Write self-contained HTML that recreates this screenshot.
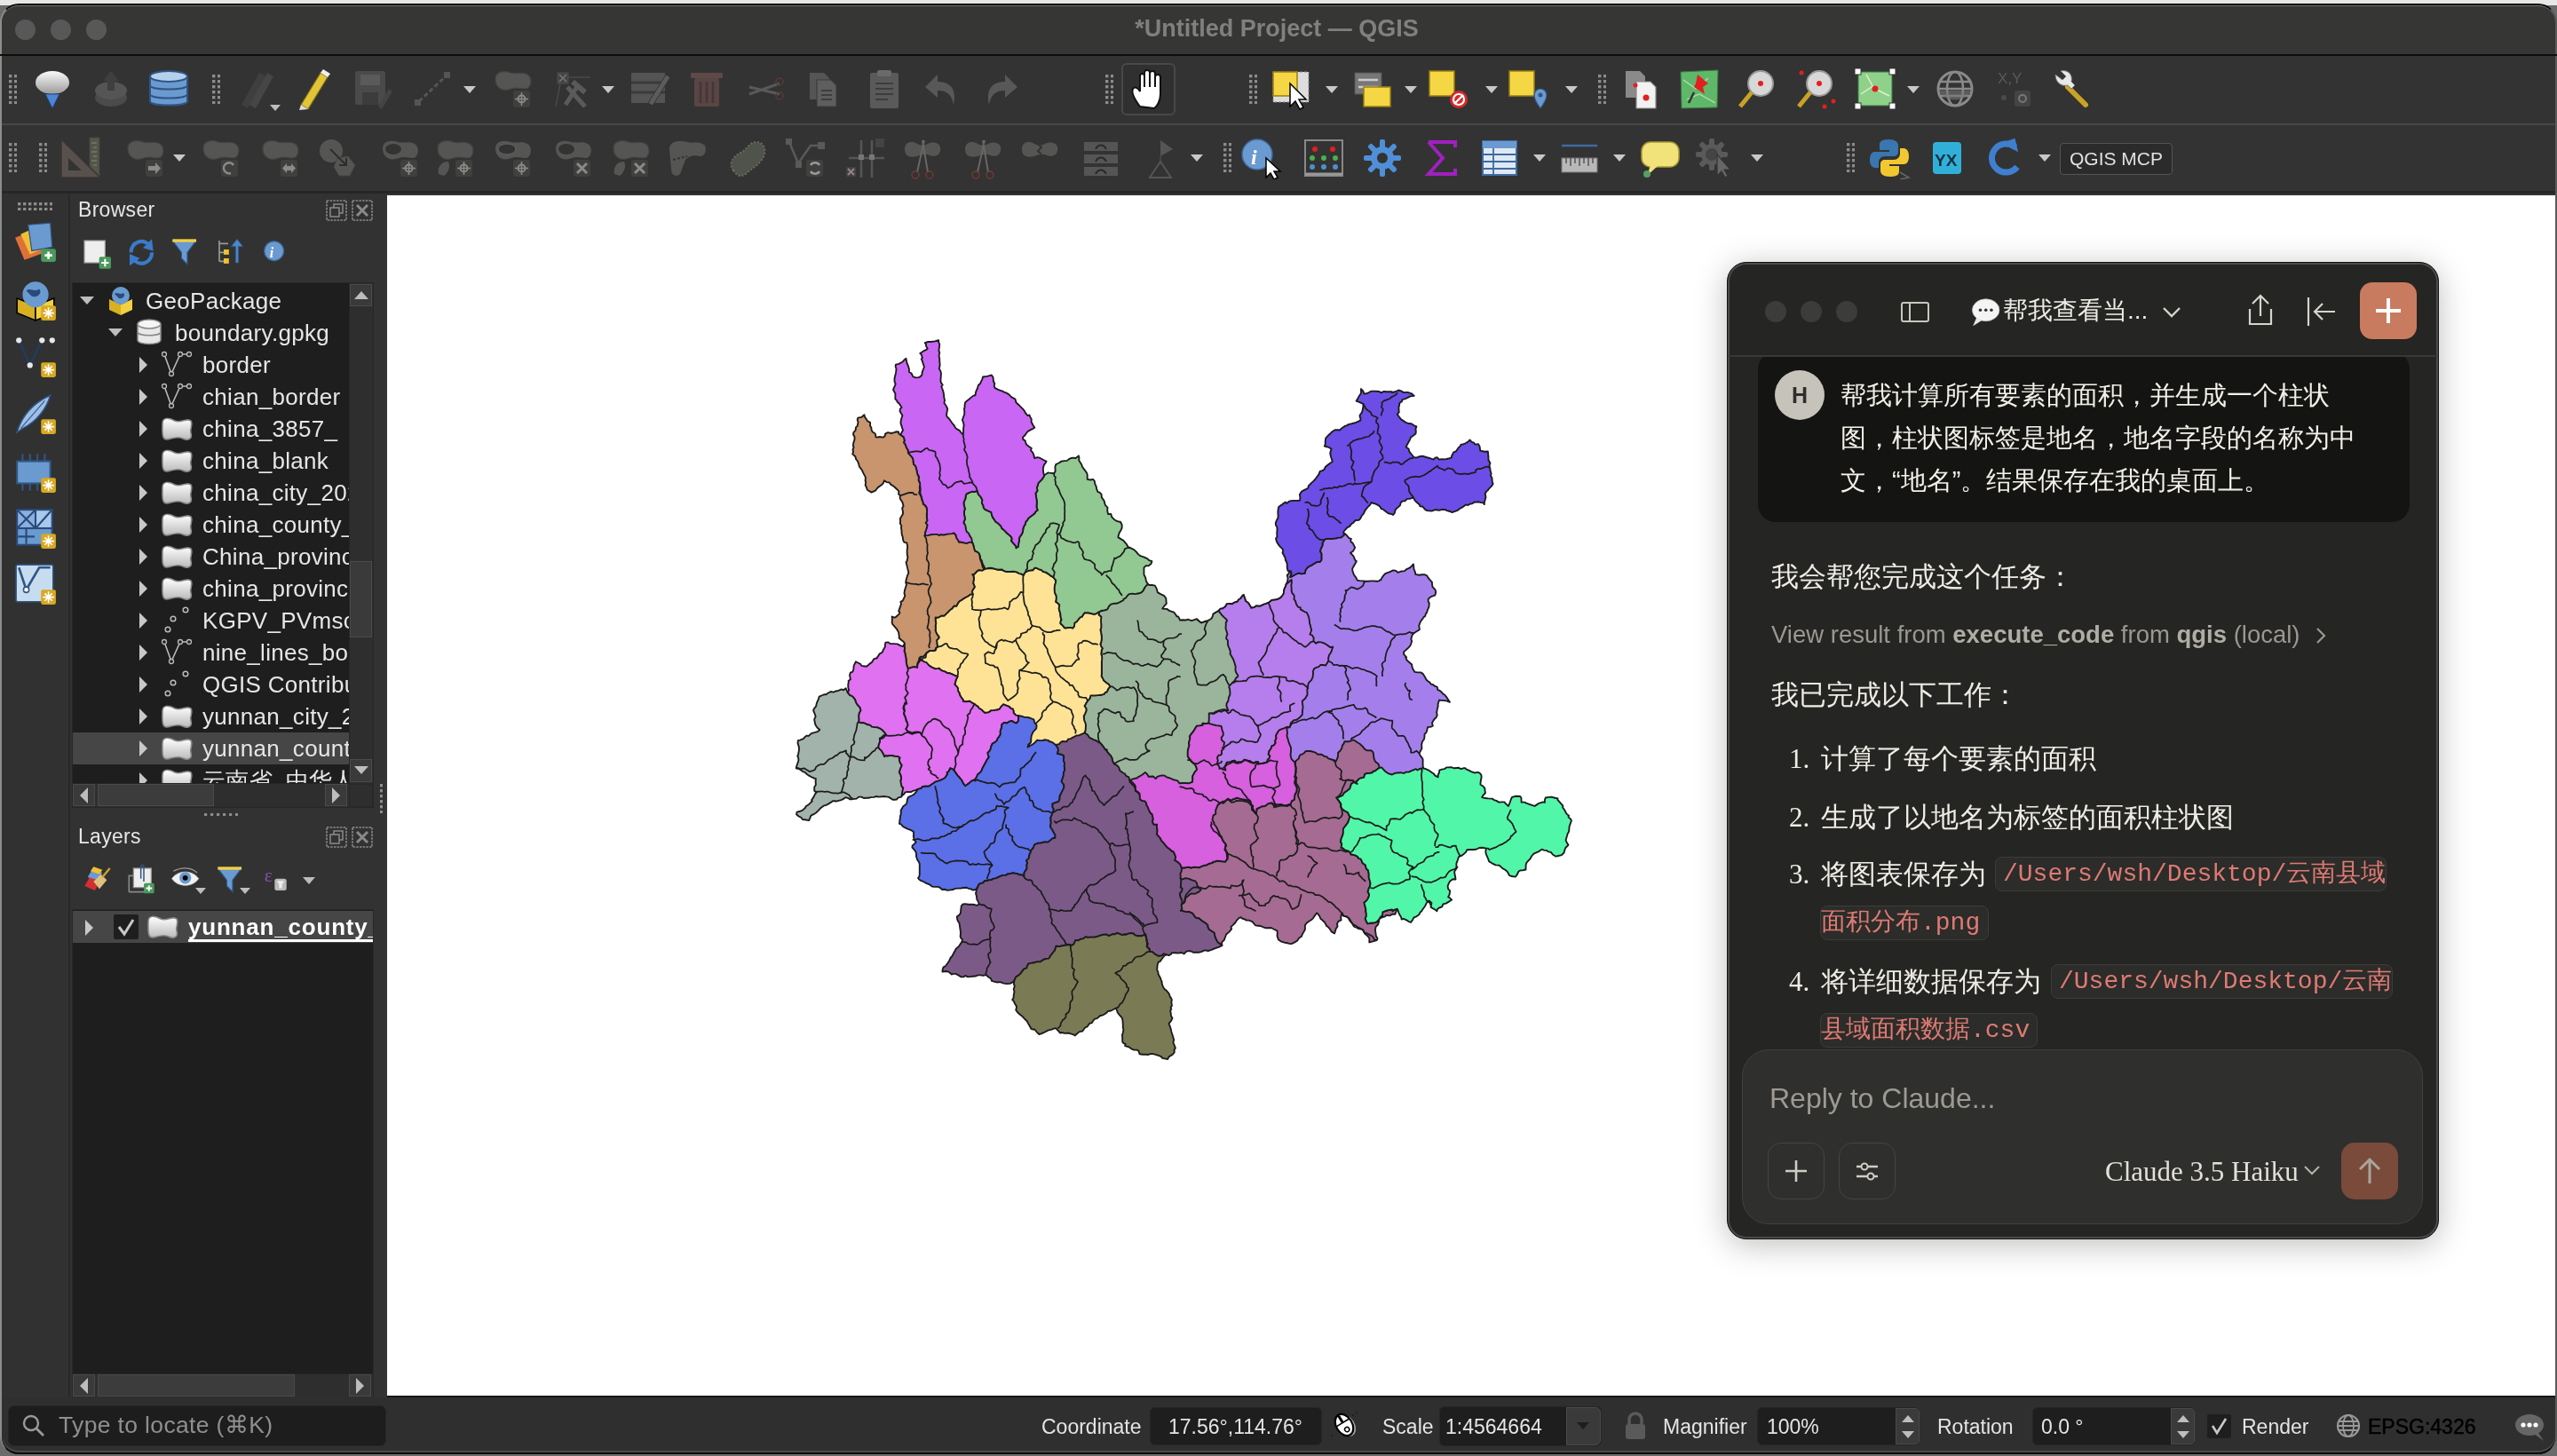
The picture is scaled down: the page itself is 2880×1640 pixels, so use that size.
<!DOCTYPE html>
<html><head><meta charset="utf-8">
<style>
*{box-sizing:border-box;margin:0;padding:0}
html,body{width:2880px;height:1640px;overflow:hidden;background:#6b6b6b;font-family:"Liberation Sans",sans-serif}
.a{position:absolute;will-change:transform}
#desktop-top{left:0;top:0;width:2880px;height:6px;background:#e8e6e6}
#win{left:0;top:4px;width:2880px;height:1634px;border-radius:21px;background:#333;border:2px solid #0e0e0e;border-left-color:#8e8e8c;border-right-color:#5a5a5a;overflow:hidden}
#title{left:2px;top:6px;width:2876px;height:56px;background:#363735;border-radius:19px 19px 0 0;border-top:1.5px solid #6e6e6c}
#titleline{left:0;top:61px;width:2880px;height:2px;background:#0d0d0d}
.tl{width:23px;height:23px;border-radius:50%;background:#585858;top:22px}
#ttext{left:0;width:2876px;top:17px;text-align:center;font-weight:bold;font-size:27px;color:#80807e}
#tb1{left:2px;top:63px;width:2876px;height:76px;background:#333333}
#tbsep{left:2px;top:139px;width:2876px;height:2px;background:#484848}
#tb2{left:2px;top:141px;width:2876px;height:74px;background:#333333}
#tbbot{left:2px;top:215px;width:2876px;height:3px;background:#262626}
#dock{left:2px;top:218px;width:75px;height:1356px;background:#313131}
#dockline{left:77px;top:218px;width:2px;height:1356px;background:#282828}
#bpanel{left:79px;top:218px;width:355px;height:1356px;background:#323232}
#canvas{left:436px;top:220px;width:2442px;height:1354px;background:#fff}
#status{left:2px;top:1574px;width:2876px;height:62px;background:#2f2f2f;border-radius:0 0 19px 19px;box-shadow:0 2px 0 #0c0c0c, inset 0 -2px 0 #4a4a4a}
#statusline{left:436px;top:1572px;width:2442px;height:2px;background:#181818}
</style></head><body>
<div class="a" id="desktop-top"></div>
<div class="a" id="win"></div>
<div class="a" id="title"></div>
<div class="a tl" style="left:17px"></div>
<div class="a tl" style="left:57px"></div>
<div class="a tl" style="left:97px"></div>
<div class="a" id="ttext">*Untitled Project — QGIS</div>
<div class="a" id="titleline"></div>
<div class="a" id="tb1"></div>
<div class="a" id="tbsep"></div>
<div class="a" id="tb2"></div>
<div class="a" id="tbbot"></div>
<div class="a" id="dock"></div>
<div class="a" id="dockline"></div>
<div class="a" id="bpanel"></div>
<div class="a" id="canvas"></div>
<div class="a" id="statusline"></div>
<div class="a" id="status"></div>
<!--UI--><svg class="a" style="left:10px;top:84px" width="9" height="33"><rect x="0.0" y="0.0" width="3.4" height="3.4" fill="#8c8c8c"/><rect x="6.0" y="0.0" width="3.4" height="3.4" fill="#8c8c8c"/><rect x="0.0" y="6.0" width="3.4" height="3.4" fill="#8c8c8c"/><rect x="6.0" y="6.0" width="3.4" height="3.4" fill="#8c8c8c"/><rect x="0.0" y="12.0" width="3.4" height="3.4" fill="#8c8c8c"/><rect x="6.0" y="12.0" width="3.4" height="3.4" fill="#8c8c8c"/><rect x="0.0" y="18.0" width="3.4" height="3.4" fill="#8c8c8c"/><rect x="6.0" y="18.0" width="3.4" height="3.4" fill="#8c8c8c"/><rect x="0.0" y="24.0" width="3.4" height="3.4" fill="#8c8c8c"/><rect x="6.0" y="24.0" width="3.4" height="3.4" fill="#8c8c8c"/><rect x="0.0" y="30.0" width="3.4" height="3.4" fill="#8c8c8c"/><rect x="6.0" y="30.0" width="3.4" height="3.4" fill="#8c8c8c"/></svg>
<svg class="a" style="left:35px;top:76px" width="48" height="48" viewBox="0 0 48 48"><defs><linearGradient id="gw" x1="0" y1="0" x2="0" y2="1"><stop offset="0" stop-color="#fafafa"/><stop offset="1" stop-color="#9a9a9a"/></linearGradient></defs><ellipse cx="24" cy="17" rx="19" ry="13" fill="url(#gw)"/><path d="M16 30 H32 L24 46 Z" fill="#4d86d4" stroke="#1f3f80" stroke-width="1"/></svg>
<svg class="a" style="left:101px;top:76px" width="48" height="48" viewBox="0 0 48 48"><ellipse cx="24" cy="34" rx="18" ry="10" fill="#4b4b4b"/><ellipse cx="24" cy="26" rx="18" ry="10" fill="#555"/><path d="M24 4 L33 15 H28 V26 H20 V15 H15 Z" fill="#3f3f3f"/></svg>
<svg class="a" style="left:166px;top:76px" width="48" height="48" viewBox="0 0 48 48"><path d="M3 10 V38 C3 44 45 44 45 38 V10" fill="#6b9ad0" stroke="#2f5684" stroke-width="2"/><ellipse cx="24" cy="10" rx="21" ry="6" fill="#b5d0ec" stroke="#2f5684" stroke-width="2"/><path d="M3 20 C3 26 45 26 45 20 M3 30 C3 36 45 36 45 30" fill="none" stroke="#2f5684" stroke-width="2"/></svg>
<svg class="a" style="left:239px;top:84px" width="9" height="33"><rect x="0.0" y="0.0" width="3.4" height="3.4" fill="#8c8c8c"/><rect x="6.0" y="0.0" width="3.4" height="3.4" fill="#8c8c8c"/><rect x="0.0" y="6.0" width="3.4" height="3.4" fill="#8c8c8c"/><rect x="6.0" y="6.0" width="3.4" height="3.4" fill="#8c8c8c"/><rect x="0.0" y="12.0" width="3.4" height="3.4" fill="#8c8c8c"/><rect x="6.0" y="12.0" width="3.4" height="3.4" fill="#8c8c8c"/><rect x="0.0" y="18.0" width="3.4" height="3.4" fill="#8c8c8c"/><rect x="6.0" y="18.0" width="3.4" height="3.4" fill="#8c8c8c"/><rect x="0.0" y="24.0" width="3.4" height="3.4" fill="#8c8c8c"/><rect x="6.0" y="24.0" width="3.4" height="3.4" fill="#8c8c8c"/><rect x="0.0" y="30.0" width="3.4" height="3.4" fill="#8c8c8c"/><rect x="6.0" y="30.0" width="3.4" height="3.4" fill="#8c8c8c"/></svg>
<svg class="a" style="left:266px;top:76px" width="48" height="48" viewBox="0 0 48 48"><path d="M6 42 L26 6 L33 10 L13 46 Z" fill="#3f3f3f"/><path d="M15 42 L35 6 L42 10 L22 46 Z" fill="#464646"/></svg>
<svg class="a" style="left:304px;top:118px" width="12" height="7" viewBox="0 0 12 7"><path d="M0 0 H12 L6.0 7 Z" fill="#bdbdbd"/></svg>
<svg class="a" style="left:329px;top:76px" width="48" height="48" viewBox="0 0 48 48"><path d="M10 42 L32 6 L40 11 L18 47 Z" fill="#e2c43a" stroke="#7a6a10" stroke-width="1.2"/><path d="M32 6 L35 2 L43 7 L40 11 Z" fill="#eee"/><path d="M10 42 L8 48 L18 47 Z" fill="#ddd"/></svg>
<svg class="a" style="left:396px;top:76px" width="48" height="48" viewBox="0 0 48 48"><rect x="4" y="4" width="34" height="38" rx="3" fill="#4a4a4a"/><rect x="10" y="8" width="22" height="12" fill="#5a5a5a"/><rect x="12" y="28" width="18" height="14" fill="#3c3c3c"/><path d="M30 44 L42 24 L46 27 L34 47 Z" fill="#444"/></svg>
<svg class="a" style="left:463px;top:76px" width="48" height="48" viewBox="0 0 48 48"><rect x="4" y="36" width="7" height="7" fill="#555"/><rect x="37" y="5" width="7" height="7" fill="#555"/><path d="M9 38 L39 10" stroke="#555" stroke-width="3" stroke-dasharray="5 3"/></svg>
<svg class="a" style="left:522px;top:97px" width="14" height="8" viewBox="0 0 14 8"><path d="M0 0 H14 L7.0 8 Z" fill="#c8c8c8"/></svg>
<svg class="a" style="left:553px;top:76px" width="48" height="48" viewBox="0 0 48 48"><path d="M5 13 C5 5 14 3 22 6 C30 8 35 4 41 8 C46 11 46 19 42 23 C38 26 31 21 23 24 C13 28 5 23 5 13Z" fill="#555654" stroke="#444543" stroke-width="1.2"/><rect x="25" y="26" width="19" height="19" rx="3" fill="#40403e"/><circle cx="34.5" cy="35.5" r="4" fill="none" stroke="#8a8a88" stroke-width="2"/><path d="M34.5 28 V43 M27 35.5 H42" stroke="#8a8a88" stroke-width="1.5"/></svg>
<svg class="a" style="left:621px;top:76px" width="48" height="48" viewBox="0 0 48 48"><path d="M10 18 L5 44 M19 11 H44" stroke="#4a4a4a" stroke-width="1.5"/><rect x="7" y="6" width="12" height="12" fill="#444" stroke="#4e4e4e" stroke-width="1"/><path d="M9 8 L17 16 M17 8 L9 16" stroke="#777" stroke-width="1.5"/><path d="M18 22 L38 44 M30 20 L16 42" stroke="#5a5a5a" stroke-width="5"/><path d="M24 16 L38 28" stroke="#5a5a5a" stroke-width="6"/></svg>
<svg class="a" style="left:678px;top:97px" width="14" height="8" viewBox="0 0 14 8"><path d="M0 0 H14 L7.0 8 Z" fill="#c8c8c8"/></svg>
<svg class="a" style="left:708px;top:76px" width="48" height="48" viewBox="0 0 48 48"><rect x="3" y="6" width="38" height="34" fill="#545454"/><path d="M3 17 H41 M3 28 H41" stroke="#3a3a3a" stroke-width="3"/><path d="M22 40 L42 8 L47 11 L27 43 Z" fill="#5c5c5c" stroke="#333" stroke-width="1"/></svg>
<svg class="a" style="left:772px;top:76px" width="48" height="48" viewBox="0 0 48 48"><rect x="10" y="12" width="28" height="32" rx="2" fill="#5a4545"/><rect x="6" y="6" width="36" height="6" rx="1" fill="#5e4848"/><path d="M17 16 V40 M24 16 V40 M31 16 V40" stroke="#453636" stroke-width="2.5"/></svg>
<svg class="a" style="left:838px;top:76px" width="48" height="48" viewBox="0 0 48 48"><path d="M6 22 L40 30 M6 30 L40 18" stroke="#595959" stroke-width="3"/><circle cx="40" cy="32" r="4" fill="none" stroke="#5a3a3a" stroke-width="1.5"/><circle cx="40" cy="16" r="4" fill="none" stroke="#5a3a3a" stroke-width="1.5"/></svg>
<svg class="a" style="left:904px;top:76px" width="48" height="48" viewBox="0 0 48 48"><path d="M8 6 H24 L30 12 V36 H8 Z" fill="#555"/><path d="M16 14 H32 L38 20 V44 H16 Z" fill="#5e5e5e" stroke="#3d3d3d" stroke-width="1.2"/><path d="M21 26 H33 M21 31 H33 M21 36 H33" stroke="#3d3d3d" stroke-width="2"/></svg>
<svg class="a" style="left:972px;top:76px" width="48" height="48" viewBox="0 0 48 48"><rect x="8" y="6" width="32" height="40" rx="2" fill="#5a5a5a"/><rect x="16" y="3" width="16" height="7" rx="2" fill="#6a6a6a"/><path d="M14 18 H34 M14 24 H34 M14 30 H34 M14 36 H28" stroke="#3d3d3d" stroke-width="2"/></svg>
<svg class="a" style="left:1038px;top:76px" width="48" height="48" viewBox="0 0 48 48"><path d="M18 8 L4 22 L18 34 V26 C28 26 34 30 36 42 C40 24 32 16 18 16 Z" fill="#585858"/></svg>
<svg class="a" style="left:1102px;top:76px" width="48" height="48" viewBox="0 0 48 48"><path d="M30 8 L44 22 L30 34 V26 C20 26 14 30 12 42 C8 24 16 16 30 16 Z" fill="#585858"/></svg>
<svg class="a" style="left:1245px;top:84px" width="9" height="33"><rect x="0.0" y="0.0" width="3.4" height="3.4" fill="#8c8c8c"/><rect x="6.0" y="0.0" width="3.4" height="3.4" fill="#8c8c8c"/><rect x="0.0" y="6.0" width="3.4" height="3.4" fill="#8c8c8c"/><rect x="6.0" y="6.0" width="3.4" height="3.4" fill="#8c8c8c"/><rect x="0.0" y="12.0" width="3.4" height="3.4" fill="#8c8c8c"/><rect x="6.0" y="12.0" width="3.4" height="3.4" fill="#8c8c8c"/><rect x="0.0" y="18.0" width="3.4" height="3.4" fill="#8c8c8c"/><rect x="6.0" y="18.0" width="3.4" height="3.4" fill="#8c8c8c"/><rect x="0.0" y="24.0" width="3.4" height="3.4" fill="#8c8c8c"/><rect x="6.0" y="24.0" width="3.4" height="3.4" fill="#8c8c8c"/><rect x="0.0" y="30.0" width="3.4" height="3.4" fill="#8c8c8c"/><rect x="6.0" y="30.0" width="3.4" height="3.4" fill="#8c8c8c"/></svg>
<div class="a" style="left:1263px;top:71px;width:61px;height:59px;border-radius:6px;background:#303030;border:2px solid #484848"></div>
<svg class="a" style="left:1270px;top:76px" width="48" height="48" viewBox="0 0 48 48"><path d="M14 44 C8 36 4 28 6 24 C8 21 12 23 14 27 V10 C14 6 19 6 19 10 V22 V6 C19 2 25 2 25 6 V22 V7 C25 3 31 3 31 7 V22 V11 C31 7 37 7 37 11 V30 C37 38 33 44 30 46 Z" fill="#fff" stroke="#111" stroke-width="2"/></svg>
<svg class="a" style="left:1407px;top:84px" width="9" height="33"><rect x="0.0" y="0.0" width="3.4" height="3.4" fill="#8c8c8c"/><rect x="6.0" y="0.0" width="3.4" height="3.4" fill="#8c8c8c"/><rect x="0.0" y="6.0" width="3.4" height="3.4" fill="#8c8c8c"/><rect x="6.0" y="6.0" width="3.4" height="3.4" fill="#8c8c8c"/><rect x="0.0" y="12.0" width="3.4" height="3.4" fill="#8c8c8c"/><rect x="6.0" y="12.0" width="3.4" height="3.4" fill="#8c8c8c"/><rect x="0.0" y="18.0" width="3.4" height="3.4" fill="#8c8c8c"/><rect x="6.0" y="18.0" width="3.4" height="3.4" fill="#8c8c8c"/><rect x="0.0" y="24.0" width="3.4" height="3.4" fill="#8c8c8c"/><rect x="6.0" y="24.0" width="3.4" height="3.4" fill="#8c8c8c"/><rect x="0.0" y="30.0" width="3.4" height="3.4" fill="#8c8c8c"/><rect x="6.0" y="30.0" width="3.4" height="3.4" fill="#8c8c8c"/></svg>
<svg class="a" style="left:1431px;top:76px" width="48" height="48" viewBox="0 0 48 48"><rect x="3" y="5" width="40" height="34" fill="#ddd" stroke="#888" stroke-dasharray="3 2"/><rect x="3" y="5" width="27" height="27" fill="#f5d745" stroke="#9a7f10" stroke-width="1.5"/><path d="M22 18 L22 44 L28 38 L33 47 L37 45 L32 36 L40 36 Z" fill="#fff" stroke="#000" stroke-width="1.5"/></svg>
<svg class="a" style="left:1493px;top:97px" width="14" height="8" viewBox="0 0 14 8"><path d="M0 0 H14 L7.0 8 Z" fill="#c8c8c8"/></svg>
<svg class="a" style="left:1522px;top:76px" width="48" height="48" viewBox="0 0 48 48"><rect x="4" y="6" width="30" height="24" fill="#777" stroke="#555"/><path d="M8 14 H30 M8 22 H30" stroke="#ccc" stroke-width="2.5"/><rect x="14" y="22" width="30" height="22" fill="#f5d745" stroke="#9a7f10" stroke-width="1.5"/></svg>
<svg class="a" style="left:1582px;top:97px" width="14" height="8" viewBox="0 0 14 8"><path d="M0 0 H14 L7.0 8 Z" fill="#c8c8c8"/></svg>
<svg class="a" style="left:1607px;top:76px" width="48" height="48" viewBox="0 0 48 48"><rect x="3" y="4" width="28" height="28" fill="#f5d745" stroke="#9a7f10" stroke-width="1.5"/><circle cx="36" cy="36" r="10" fill="#d42b2b"/><circle cx="36" cy="36" r="6" fill="none" stroke="#fff" stroke-width="2.2"/><path d="M31 41 L41 31" stroke="#fff" stroke-width="2.2"/></svg>
<svg class="a" style="left:1673px;top:97px" width="14" height="8" viewBox="0 0 14 8"><path d="M0 0 H14 L7.0 8 Z" fill="#c8c8c8"/></svg>
<svg class="a" style="left:1697px;top:76px" width="48" height="48" viewBox="0 0 48 48"><rect x="3" y="4" width="28" height="28" fill="#f5d745" stroke="#9a7f10" stroke-width="1.5"/><path d="M38 46 C32 38 31 34 31 31 A7 7 0 0 1 45 31 C45 34 44 38 38 46Z" fill="#6a9ad0" stroke="#2f5684" stroke-width="1.2"/><circle cx="38" cy="31" r="2.5" fill="#2f5684"/></svg>
<svg class="a" style="left:1763px;top:97px" width="14" height="8" viewBox="0 0 14 8"><path d="M0 0 H14 L7.0 8 Z" fill="#c8c8c8"/></svg>
<svg class="a" style="left:1800px;top:84px" width="9" height="33"><rect x="0.0" y="0.0" width="3.4" height="3.4" fill="#8c8c8c"/><rect x="6.0" y="0.0" width="3.4" height="3.4" fill="#8c8c8c"/><rect x="0.0" y="6.0" width="3.4" height="3.4" fill="#8c8c8c"/><rect x="6.0" y="6.0" width="3.4" height="3.4" fill="#8c8c8c"/><rect x="0.0" y="12.0" width="3.4" height="3.4" fill="#8c8c8c"/><rect x="6.0" y="12.0" width="3.4" height="3.4" fill="#8c8c8c"/><rect x="0.0" y="18.0" width="3.4" height="3.4" fill="#8c8c8c"/><rect x="6.0" y="18.0" width="3.4" height="3.4" fill="#8c8c8c"/><rect x="0.0" y="24.0" width="3.4" height="3.4" fill="#8c8c8c"/><rect x="6.0" y="24.0" width="3.4" height="3.4" fill="#8c8c8c"/><rect x="0.0" y="30.0" width="3.4" height="3.4" fill="#8c8c8c"/><rect x="6.0" y="30.0" width="3.4" height="3.4" fill="#8c8c8c"/></svg>
<svg class="a" style="left:1825px;top:76px" width="48" height="48" viewBox="0 0 48 48"><path d="M6 4 H22 L28 10 V34 H6 Z" fill="#8a8a8a"/><path d="M18 16 H34 L40 22 V46 H18 Z" fill="#f2f2f2" stroke="#888" stroke-width="1.2"/><circle cx="29" cy="34" r="3.5" fill="#e02020"/><circle cx="17" cy="20" r="2.5" fill="#e02020"/></svg>
<svg class="a" style="left:1890px;top:76px" width="48" height="48" viewBox="0 0 48 48"><path d="M3 5 L45 3 L44 45 L4 46 Z" fill="#5fb86a" stroke="#3a7a45" stroke-width="1"/><path d="M6 14 L20 24 L34 12 M10 36 L24 30 L42 40" stroke="#b8e0b0" stroke-width="1.3" fill="none"/><path d="M22 8 L34 18 L28 22 L30 30 L18 22 L20 18 Z" fill="#e02020"/><path d="M18 28 L12 40" stroke="#333" stroke-width="2.5"/></svg>
<svg class="a" style="left:1955px;top:76px" width="48" height="48" viewBox="0 0 48 48"><circle cx="28" cy="18" r="14" fill="#d8d8d8" stroke="#999" stroke-width="2"/><circle cx="28" cy="18" r="3" fill="#e02020"/><path d="M18 28 L5 44" stroke="#c9a227" stroke-width="5"/></svg>
<svg class="a" style="left:2021px;top:76px" width="48" height="48" viewBox="0 0 48 48"><circle cx="28" cy="18" r="14" fill="#d8d8d8" stroke="#999" stroke-width="2"/><circle cx="28" cy="18" r="3" fill="#e02020"/><path d="M18 28 L5 44" stroke="#c9a227" stroke-width="5"/><circle cx="8" cy="6" r="2.5" fill="#e02020"/><circle cx="44" cy="38" r="2.5" fill="#e02020"/><circle cx="34" cy="44" r="2.5" fill="#e02020"/></svg>
<svg class="a" style="left:2088px;top:76px" width="48" height="48" viewBox="0 0 48 48"><rect x="5" y="5" width="38" height="38" fill="#8fd08a" stroke="#3a7a45"/><path d="M8 30 L20 22 L40 32 M14 8 L24 26" stroke="#e0f0d0" stroke-width="1.5" fill="none"/><circle cx="24" cy="24" r="3.5" fill="#e02020"/><rect x="1" y="1" width="7" height="7" fill="#fff" stroke="#333"/><rect x="40" y="1" width="7" height="7" fill="#fff" stroke="#333"/><rect x="1" y="40" width="7" height="7" fill="#fff" stroke="#333"/><rect x="40" y="40" width="7" height="7" fill="#fff" stroke="#333"/></svg>
<svg class="a" style="left:2148px;top:97px" width="14" height="8" viewBox="0 0 14 8"><path d="M0 0 H14 L7.0 8 Z" fill="#c8c8c8"/></svg>
<svg class="a" style="left:2178px;top:76px" width="48" height="48" viewBox="0 0 48 48"><circle cx="24" cy="24" r="19" fill="none" stroke="#8a8a8a" stroke-width="3"/><ellipse cx="24" cy="24" rx="9" ry="19" fill="none" stroke="#8a8a8a" stroke-width="2.5"/><path d="M6 16 H42 M5 24 H43 M6 32 H42" stroke="#8a8a8a" stroke-width="2.5"/><path d="M5 26 C14 40 34 40 43 26" fill="#777" opacity="0.6"/></svg>
<svg class="a" style="left:2247px;top:76px" width="48" height="48" viewBox="0 0 48 48"><text x="3" y="18" font-family="Liberation Sans" font-size="17" fill="#5a5a5a">X,Y</text><circle cx="10" cy="34" r="3" fill="#4a4a4a"/><rect x="22" y="26" width="18" height="18" rx="3" fill="#444"/><circle cx="31" cy="35" r="4" fill="none" stroke="#777" stroke-width="2"/></svg>
<svg class="a" style="left:2309px;top:76px" width="48" height="48" viewBox="0 0 48 48"><path d="M20 22 L40 42" stroke="#c9a227" stroke-width="6" stroke-linecap="round"/><path d="M6 8 C6 16 12 22 20 20 L24 24 L28 20 L24 16 C26 8 20 2 12 4 L18 10 L14 14 Z" fill="#e8e8e8" stroke="#777"/></svg>
<svg class="a" style="left:10px;top:161px" width="9" height="33"><rect x="0.0" y="0.0" width="3.4" height="3.4" fill="#8c8c8c"/><rect x="6.0" y="0.0" width="3.4" height="3.4" fill="#8c8c8c"/><rect x="0.0" y="6.0" width="3.4" height="3.4" fill="#8c8c8c"/><rect x="6.0" y="6.0" width="3.4" height="3.4" fill="#8c8c8c"/><rect x="0.0" y="12.0" width="3.4" height="3.4" fill="#8c8c8c"/><rect x="6.0" y="12.0" width="3.4" height="3.4" fill="#8c8c8c"/><rect x="0.0" y="18.0" width="3.4" height="3.4" fill="#8c8c8c"/><rect x="6.0" y="18.0" width="3.4" height="3.4" fill="#8c8c8c"/><rect x="0.0" y="24.0" width="3.4" height="3.4" fill="#8c8c8c"/><rect x="6.0" y="24.0" width="3.4" height="3.4" fill="#8c8c8c"/><rect x="0.0" y="30.0" width="3.4" height="3.4" fill="#8c8c8c"/><rect x="6.0" y="30.0" width="3.4" height="3.4" fill="#8c8c8c"/></svg>
<svg class="a" style="left:44px;top:161px" width="9" height="33"><rect x="0.0" y="0.0" width="3.4" height="3.4" fill="#8c8c8c"/><rect x="6.0" y="0.0" width="3.4" height="3.4" fill="#8c8c8c"/><rect x="0.0" y="6.0" width="3.4" height="3.4" fill="#8c8c8c"/><rect x="6.0" y="6.0" width="3.4" height="3.4" fill="#8c8c8c"/><rect x="0.0" y="12.0" width="3.4" height="3.4" fill="#8c8c8c"/><rect x="6.0" y="12.0" width="3.4" height="3.4" fill="#8c8c8c"/><rect x="0.0" y="18.0" width="3.4" height="3.4" fill="#8c8c8c"/><rect x="6.0" y="18.0" width="3.4" height="3.4" fill="#8c8c8c"/><rect x="0.0" y="24.0" width="3.4" height="3.4" fill="#8c8c8c"/><rect x="6.0" y="24.0" width="3.4" height="3.4" fill="#8c8c8c"/><rect x="0.0" y="30.0" width="3.4" height="3.4" fill="#8c8c8c"/><rect x="6.0" y="30.0" width="3.4" height="3.4" fill="#8c8c8c"/></svg>
<svg class="a" style="left:67px;top:154px" width="48" height="48" viewBox="0 0 48 48"><rect x="34" y="1" width="11" height="44" fill="#54564a" stroke="#444" stroke-width="1"/><path d="M36 7 H42 M38 12 H42 M36 17 H42 M38 22 H42 M36 27 H42 M38 32 H42" stroke="#787a66" stroke-width="1.5"/><path d="M2 3 L46 46 H2 Z" fill="#57504d" stroke="#3b3433" stroke-width="1.5"/><path d="M10 24 L25 38 H10 Z" fill="#333"/></svg>
<svg class="a" style="left:139px;top:154px" width="48" height="48" viewBox="0 0 48 48"><path d="M5 13 C5 5 14 3 22 6 C30 8 35 4 41 8 C46 11 46 19 42 23 C38 26 31 21 23 24 C13 28 5 23 5 13Z" fill="#555654" stroke="#444543" stroke-width="1.2"/><rect x="25" y="26" width="19" height="19" rx="3" fill="#40403e"/><path d="M28 33 H36 V29 L42 35.5 L36 42 V38 H28 Z" fill="#8a8a88"/></svg>
<svg class="a" style="left:195px;top:174px" width="14" height="8" viewBox="0 0 14 8"><path d="M0 0 H14 L7.0 8 Z" fill="#c8c8c8"/></svg>
<svg class="a" style="left:224px;top:154px" width="48" height="48" viewBox="0 0 48 48"><path d="M5 13 C5 5 14 3 22 6 C30 8 35 4 41 8 C46 11 46 19 42 23 C38 26 31 21 23 24 C13 28 5 23 5 13Z" fill="#555654" stroke="#444543" stroke-width="1.2"/><rect x="25" y="26" width="19" height="19" rx="3" fill="#40403e"/><path d="M39 32 A6 6 0 1 0 36 41" fill="none" stroke="#8a8a88" stroke-width="2.5"/></svg>
<svg class="a" style="left:291px;top:154px" width="48" height="48" viewBox="0 0 48 48"><path d="M5 13 C5 5 14 3 22 6 C30 8 35 4 41 8 C46 11 46 19 42 23 C38 26 31 21 23 24 C13 28 5 23 5 13Z" fill="#555654" stroke="#444543" stroke-width="1.2"/><rect x="25" y="26" width="19" height="19" rx="3" fill="#40403e"/><path d="M27 35.5 L32 30 V33 H37 V30 L42 35.5 L37 41 V38 H32 V41 Z" fill="#8a8a88"/></svg>
<svg class="a" style="left:356px;top:154px" width="48" height="48" viewBox="0 0 48 48"><circle cx="17" cy="16" r="13" fill="#555654"/><path d="M24 24 L36 22 L44 32 L38 44 H26 L20 34 Z" fill="#555654" stroke="#444" stroke-width="1"/><path d="M16 14 L34 32 M34 24 V32 H26" stroke="#2d2d2d" stroke-width="2" fill="none"/></svg>
<svg class="a" style="left:426px;top:154px" width="48" height="48" viewBox="0 0 48 48"><path d="M5 13 C5 5 14 3 22 6 C30 8 35 4 41 8 C46 11 46 19 42 23 C38 26 31 21 23 24 C13 28 5 23 5 13Z" fill="#555654"/><ellipse cx="17" cy="14" rx="9" ry="6" fill="#333"/><rect x="25" y="26" width="19" height="19" rx="3" fill="#40403e"/><circle cx="34.5" cy="35.5" r="4" fill="none" stroke="#8a8a88" stroke-width="2"/><path d="M34.5 28 V43 M27 35.5 H42" stroke="#8a8a88" stroke-width="1.5"/></svg>
<svg class="a" style="left:488px;top:154px" width="48" height="48" viewBox="0 0 48 48"><path d="M5 13 C5 5 14 3 22 6 C30 8 35 4 41 8 C46 11 46 19 42 23 C38 26 31 21 23 24 C13 28 5 23 5 13Z" fill="#555654" stroke="#444543" stroke-width="1.2"/><path d="M6 42 C4 34 10 28 16 28 C20 30 18 40 12 44 Z" fill="#555654"/><rect x="25" y="26" width="19" height="19" rx="3" fill="#40403e"/><circle cx="34.5" cy="35.5" r="4" fill="none" stroke="#8a8a88" stroke-width="2"/><path d="M34.5 28 V43 M27 35.5 H42" stroke="#8a8a88" stroke-width="1.5"/></svg>
<svg class="a" style="left:553px;top:154px" width="48" height="48" viewBox="0 0 48 48"><path d="M5 13 C5 5 14 3 22 6 C30 8 35 4 41 8 C46 11 46 19 42 23 C38 26 31 21 23 24 C13 28 5 23 5 13Z" fill="#555654"/><ellipse cx="18" cy="14" rx="10" ry="6" fill="#333" stroke="#666"/><rect x="25" y="26" width="19" height="19" rx="3" fill="#40403e"/><circle cx="34.5" cy="35.5" r="4" fill="none" stroke="#8a8a88" stroke-width="2"/><path d="M34.5 28 V43 M27 35.5 H42" stroke="#8a8a88" stroke-width="1.5"/></svg>
<svg class="a" style="left:621px;top:154px" width="48" height="48" viewBox="0 0 48 48"><path d="M5 13 C5 5 14 3 22 6 C30 8 35 4 41 8 C46 11 46 19 42 23 C38 26 31 21 23 24 C13 28 5 23 5 13Z" fill="#555654"/><ellipse cx="17" cy="14" rx="9" ry="6" fill="#333"/><rect x="25" y="26" width="19" height="19" rx="3" fill="#40403e"/><path d="M29 30 L40 41 M40 30 L29 41" stroke="#8a8a88" stroke-width="3"/></svg>
<svg class="a" style="left:686px;top:154px" width="48" height="48" viewBox="0 0 48 48"><path d="M5 13 C5 5 14 3 22 6 C30 8 35 4 41 8 C46 11 46 19 42 23 C38 26 31 21 23 24 C13 28 5 23 5 13Z" fill="#555654" stroke="#444543" stroke-width="1.2"/><path d="M6 42 C4 34 10 28 16 28 C20 30 18 40 12 44 Z" fill="#555654"/><rect x="25" y="26" width="19" height="19" rx="3" fill="#40403e"/><path d="M29 30 L40 41 M40 30 L29 41" stroke="#8a8a88" stroke-width="3"/></svg>
<svg class="a" style="left:750px;top:154px" width="48" height="48" viewBox="0 0 48 48"><path d="M4 14 C4 4 16 4 24 6 C32 8 38 4 44 10 C46 16 44 22 38 22 C30 20 26 22 22 26 L16 42 C12 46 6 44 6 36 Z" fill="#555654"/><path d="M8 26 L24 22" stroke="#333" stroke-dasharray="3 2" stroke-width="2"/></svg>
<svg class="a" style="left:818px;top:154px" width="48" height="48" viewBox="0 0 48 48"><path d="M8 38 C2 30 8 22 16 18 C24 14 26 6 34 6 C44 6 46 18 40 26 C34 34 28 36 22 42 C16 46 12 44 8 38Z" fill="#50524c" stroke="#6a6a5a" stroke-width="2" stroke-dasharray="2 2"/></svg>
<svg class="a" style="left:883px;top:154px" width="48" height="48" viewBox="0 0 48 48"><path d="M6 6 L16 30 L30 10 H42" stroke="#5a5a5a" stroke-width="2.5" fill="none"/><rect x="2" y="2" width="7" height="7" fill="#5a5a5a"/><rect x="13" y="28" width="7" height="7" fill="#5a5a5a"/><rect x="38" y="6" width="8" height="8" fill="#5a5a5a"/><rect x="25" y="26" width="19" height="19" rx="3" fill="#40403e"/><path d="M30 32 A6 6 0 0 1 40 32 M40 39 A6 6 0 0 1 30 39" stroke="#999" stroke-width="2.5" fill="none"/></svg>
<svg class="a" style="left:950px;top:154px" width="48" height="48" viewBox="0 0 48 48"><path d="M20 4 V46 M32 4 V46 M6 24 H46" stroke="#555" stroke-width="2.5"/><rect x="17" y="20" width="6" height="6" fill="#777"/><rect x="29" y="20" width="6" height="6" fill="#777"/><rect x="36" y="2" width="10" height="10" fill="#444"/><rect x="3" y="34" width="11" height="11" fill="#4a3e3e"/><path d="M5 36 L12 43 M12 36 L5 43" stroke="#888" stroke-width="2"/></svg>
<svg class="a" style="left:1015px;top:154px" width="48" height="48" viewBox="0 0 48 48"><path d="M4 14 C4 6 12 4 18 8 C22 10 26 10 30 8 C38 4 46 8 44 16 C42 24 34 22 30 20 C26 20 22 20 18 22 C10 24 4 22 4 14Z" fill="#555654"/><path d="M26 4 L18 40 M24 4 L30 40" stroke="#666" stroke-width="2"/><ellipse cx="16" cy="43" rx="4" ry="4" fill="none" stroke="#7a3a30" stroke-width="1.3"/><ellipse cx="32" cy="43" rx="4" ry="4" fill="none" stroke="#7a3a30" stroke-width="1.3"/></svg>
<svg class="a" style="left:1083px;top:154px" width="48" height="48" viewBox="0 0 48 48"><path d="M4 14 C4 6 12 4 18 8 C22 10 26 10 30 8 C38 4 46 8 44 16 C42 24 34 22 30 20 C26 20 22 20 18 22 C10 24 4 22 4 14Z" fill="#555654"/><path d="M26 4 L18 40 M24 4 L30 40" stroke="#666" stroke-width="2"/><ellipse cx="16" cy="43" rx="4" ry="4" fill="none" stroke="#7a3a30" stroke-width="1.3"/><ellipse cx="32" cy="43" rx="4" ry="4" fill="none" stroke="#7a3a30" stroke-width="1.3"/></svg>
<svg class="a" style="left:1147px;top:154px" width="48" height="48" viewBox="0 0 48 48"><path d="M4 14 C4 6 12 4 18 8 C22 10 26 10 30 8 C38 4 46 8 44 16 C42 24 34 22 30 20 C26 20 22 20 18 22 C10 24 4 22 4 14Z" fill="#555654"/><path d="M22 8 L26 12 L22 16 L26 20" stroke="#333" stroke-width="2" fill="none"/></svg>
<svg class="a" style="left:1215px;top:154px" width="48" height="48" viewBox="0 0 48 48"><rect x="6" y="6" width="38" height="10" fill="#555"/><rect x="6" y="20" width="38" height="10" fill="#555"/><rect x="6" y="34" width="38" height="10" fill="#555"/><path d="M19 14 C22 8 28 8 31 14 M19 28 C22 22 28 22 31 28 M19 42 C22 36 28 36 31 42" stroke="#2a2a2a" stroke-width="2" fill="none"/></svg>
<svg class="a" style="left:1283px;top:154px" width="48" height="48" viewBox="0 0 48 48"><path d="M24 4 L38 14 L24 22 Z" fill="#555"/><path d="M24 22 V30" stroke="#555"/><path d="M24 28 L36 46 H12 Z" fill="none" stroke="#555" stroke-width="2"/></svg>
<svg class="a" style="left:1341px;top:174px" width="14" height="8" viewBox="0 0 14 8"><path d="M0 0 H14 L7.0 8 Z" fill="#c8c8c8"/></svg>
<svg class="a" style="left:1378px;top:161px" width="9" height="33"><rect x="0.0" y="0.0" width="3.4" height="3.4" fill="#8c8c8c"/><rect x="6.0" y="0.0" width="3.4" height="3.4" fill="#8c8c8c"/><rect x="0.0" y="6.0" width="3.4" height="3.4" fill="#8c8c8c"/><rect x="6.0" y="6.0" width="3.4" height="3.4" fill="#8c8c8c"/><rect x="0.0" y="12.0" width="3.4" height="3.4" fill="#8c8c8c"/><rect x="6.0" y="12.0" width="3.4" height="3.4" fill="#8c8c8c"/><rect x="0.0" y="18.0" width="3.4" height="3.4" fill="#8c8c8c"/><rect x="6.0" y="18.0" width="3.4" height="3.4" fill="#8c8c8c"/><rect x="0.0" y="24.0" width="3.4" height="3.4" fill="#8c8c8c"/><rect x="6.0" y="24.0" width="3.4" height="3.4" fill="#8c8c8c"/><rect x="0.0" y="30.0" width="3.4" height="3.4" fill="#8c8c8c"/><rect x="6.0" y="30.0" width="3.4" height="3.4" fill="#8c8c8c"/></svg>
<svg class="a" style="left:1396px;top:154px" width="48" height="48" viewBox="0 0 48 48"><circle cx="20" cy="20" r="17" fill="#6a9ad0" stroke="#3f6aa0" stroke-width="1.5"/><text x="13" y="31" font-family="Liberation Serif" font-style="italic" font-weight="bold" font-size="24" fill="#fff">i</text><path d="M30 24 L30 46 L35 41 L39 48 L43 46 L39 39 L46 39 Z" fill="#fff" stroke="#000" stroke-width="1.5"/></svg>
<svg class="a" style="left:1467px;top:154px" width="48" height="48" viewBox="0 0 48 48"><rect x="3" y="4" width="42" height="40" fill="none" stroke="#888" stroke-width="2"/><path d="M3 42 H45" stroke="#999" stroke-width="3"/><circle cx="14" cy="14" r="3" fill="#e02020"/><circle cx="34" cy="14" r="3" fill="#e02020"/><circle cx="11" cy="24" r="3" fill="#4caf50"/><circle cx="24" cy="24" r="3" fill="#4caf50"/><circle cx="37" cy="24" r="3" fill="#4caf50"/><circle cx="11" cy="34" r="3" fill="#4d8fd0"/><circle cx="24" cy="34" r="3" fill="#4d8fd0"/><circle cx="37" cy="34" r="3" fill="#4d8fd0"/></svg>
<svg class="a" style="left:1533px;top:154px" width="48" height="48" viewBox="0 0 48 48"><g fill="#4f8fd8"><circle cx="24" cy="24" r="13"/><rect x="21" y="3" width="6" height="42" rx="2"/><rect x="3" y="21" width="42" height="6" rx="2"/><rect x="21" y="3" width="6" height="42" rx="2" transform="rotate(45 24 24)"/><rect x="21" y="3" width="6" height="42" rx="2" transform="rotate(-45 24 24)"/></g><circle cx="24" cy="24" r="6" fill="#333"/></svg>
<svg class="a" style="left:1599px;top:154px" width="48" height="48" viewBox="0 0 48 48"><path d="M10 6 H40 V12 M10 6 L26 24 L10 42 H40 V36" fill="none" stroke="#a020c0" stroke-width="4"/></svg>
<svg class="a" style="left:1665px;top:154px" width="48" height="48" viewBox="0 0 48 48"><rect x="5" y="5" width="38" height="38" fill="#dfe9f5" stroke="#3f6aa0" stroke-width="2"/><rect x="5" y="5" width="38" height="8" fill="#6a9ad0"/><path d="M5 20 H43 M5 28 H43 M5 36 H43 M17 13 V43" stroke="#3f6aa0" stroke-width="1.8"/></svg>
<svg class="a" style="left:1727px;top:174px" width="14" height="8" viewBox="0 0 14 8"><path d="M0 0 H14 L7.0 8 Z" fill="#c8c8c8"/></svg>
<svg class="a" style="left:1755px;top:154px" width="48" height="48" viewBox="0 0 48 48"><path d="M4 10 H44" stroke="#3f6aa0" stroke-width="2.5"/><rect x="4" y="24" width="40" height="16" fill="#b8b8b8" stroke="#777"/><path d="M9 24 V30 M14 24 V33 M19 24 V30 M24 24 V33 M29 24 V30 M34 24 V33 M39 24 V30" stroke="#555" stroke-width="1.5"/></svg>
<svg class="a" style="left:1817px;top:174px" width="14" height="8" viewBox="0 0 14 8"><path d="M0 0 H14 L7.0 8 Z" fill="#c8c8c8"/></svg>
<svg class="a" style="left:1845px;top:154px" width="48" height="48" viewBox="0 0 48 48"><rect x="4" y="6" width="42" height="28" rx="10" fill="#f2e27a" stroke="#a89a30" stroke-width="1.5"/><path d="M14 32 L10 44 L22 33 Z" fill="#f2e27a"/><circle cx="10" cy="42" r="4" fill="#58a060"/></svg>
<svg class="a" style="left:1908px;top:154px" width="48" height="48" viewBox="0 0 48 48"><g fill="#5a5a5a"><circle cx="20" cy="20" r="12"/><rect x="17" y="2" width="6" height="36" rx="2"/><rect x="2" y="17" width="36" height="6" rx="2"/><rect x="17" y="2" width="6" height="36" rx="2" transform="rotate(45 20 20)"/><rect x="17" y="2" width="6" height="36" rx="2" transform="rotate(-45 20 20)"/></g><circle cx="20" cy="20" r="7" fill="#444"/><path d="M26 20 L26 44 L31 39 L35 46 L38 44 L34 37 L41 37 Z" fill="#666" stroke="#333" stroke-width="1.2"/></svg>
<svg class="a" style="left:1972px;top:174px" width="14" height="8" viewBox="0 0 14 8"><path d="M0 0 H14 L7.0 8 Z" fill="#c8c8c8"/></svg>
<svg class="a" style="left:2080px;top:161px" width="9" height="33"><rect x="0.0" y="0.0" width="3.4" height="3.4" fill="#8c8c8c"/><rect x="6.0" y="0.0" width="3.4" height="3.4" fill="#8c8c8c"/><rect x="0.0" y="6.0" width="3.4" height="3.4" fill="#8c8c8c"/><rect x="6.0" y="6.0" width="3.4" height="3.4" fill="#8c8c8c"/><rect x="0.0" y="12.0" width="3.4" height="3.4" fill="#8c8c8c"/><rect x="6.0" y="12.0" width="3.4" height="3.4" fill="#8c8c8c"/><rect x="0.0" y="18.0" width="3.4" height="3.4" fill="#8c8c8c"/><rect x="6.0" y="18.0" width="3.4" height="3.4" fill="#8c8c8c"/><rect x="0.0" y="24.0" width="3.4" height="3.4" fill="#8c8c8c"/><rect x="6.0" y="24.0" width="3.4" height="3.4" fill="#8c8c8c"/><rect x="0.0" y="30.0" width="3.4" height="3.4" fill="#8c8c8c"/><rect x="6.0" y="30.0" width="3.4" height="3.4" fill="#8c8c8c"/></svg>
<svg class="a" style="left:2104px;top:154px" width="48" height="48" viewBox="0 0 48 48"><path d="M23 3 C13 3 13 7 13 10 V15 H24 V17 H8 C3 17 2 22 2 26 C2 31 4 35 8 35 H12 V29 C12 25 15 22 19 22 H29 C32 22 34 20 34 17 V10 C34 6 31 3 23 3Z" fill="#3a76b0"/><path d="M25 45 C35 45 35 41 35 38 V33 H24 V31 H40 C45 31 46 26 46 22 C46 17 44 13 40 13 H36 V19 C36 23 33 26 29 26 H19 C16 26 14 28 14 31 V38 C14 42 17 45 25 45Z" fill="#f2c830"/><path d="M36 40 L46 46 L36 48" fill="none" stroke="#666" stroke-width="1.5"/></svg>
<svg class="a" style="left:2169px;top:154px" width="48" height="48" viewBox="0 0 48 48"><rect x="8" y="6" width="32" height="36" rx="4" fill="#30b0d8"/><text x="10" y="33" font-family="Liberation Sans" font-weight="bold" font-size="19" fill="#163040">YX</text></svg>
<svg class="a" style="left:2234px;top:154px" width="48" height="48" viewBox="0 0 48 48"><path d="M36 12 A16 16 0 1 0 38 34" fill="none" stroke="#3f7fd0" stroke-width="7"/><path d="M22 4 L38 4 L36 20 Z" fill="#3f7fd0" transform="rotate(-20 30 10)"/></svg>
<svg class="a" style="left:2296px;top:174px" width="14" height="8" viewBox="0 0 14 8"><path d="M0 0 H14 L7.0 8 Z" fill="#c8c8c8"/></svg>
<div class="a" style="left:2320px;top:161px;width:127px;height:36px;border-radius:4px;background:#2b2b2b;border:1px solid #555;font-size:21px;line-height:34px;text-align:center;color:#e0e0e0">QGIS MCP</div>
<svg class="a" style="left:20px;top:228px" width="39" height="9"><rect x="0.0" y="0.0" width="3.4" height="3.4" fill="#8c8c8c"/><rect x="6.0" y="0.0" width="3.4" height="3.4" fill="#8c8c8c"/><rect x="12.0" y="0.0" width="3.4" height="3.4" fill="#8c8c8c"/><rect x="18.0" y="0.0" width="3.4" height="3.4" fill="#8c8c8c"/><rect x="24.0" y="0.0" width="3.4" height="3.4" fill="#8c8c8c"/><rect x="30.0" y="0.0" width="3.4" height="3.4" fill="#8c8c8c"/><rect x="36.0" y="0.0" width="3.4" height="3.4" fill="#8c8c8c"/><rect x="0.0" y="6.0" width="3.4" height="3.4" fill="#8c8c8c"/><rect x="6.0" y="6.0" width="3.4" height="3.4" fill="#8c8c8c"/><rect x="12.0" y="6.0" width="3.4" height="3.4" fill="#8c8c8c"/><rect x="18.0" y="6.0" width="3.4" height="3.4" fill="#8c8c8c"/><rect x="24.0" y="6.0" width="3.4" height="3.4" fill="#8c8c8c"/><rect x="30.0" y="6.0" width="3.4" height="3.4" fill="#8c8c8c"/><rect x="36.0" y="6.0" width="3.4" height="3.4" fill="#8c8c8c"/></svg>
<svg class="a" style="left:15px;top:247px" width="50" height="50" viewBox="0 0 48 48"><path d="M2 20 L22 12 L34 36 L12 44 Z" fill="#e0703a"/><path d="M8 16 L26 8 L36 30 L18 38 Z" fill="#f0c030"/><path d="M16 6 L40 4 L42 30 L20 34 Z" fill="#6a9ad0" stroke="#2f5684" stroke-width="1.2"/><rect x="30" y="32" width="16" height="14" rx="2" fill="#4a9a5a"/><path d="M38 35 V43 M34 39 H42" stroke="#fff" stroke-width="2.5"/></svg>
<svg class="a" style="left:15px;top:313px" width="50" height="50" viewBox="0 0 48 48"><path d="M4 22 L24 30 V46 L4 38 Z" fill="#d8b020" stroke="#000" stroke-width="1.5"/><path d="M24 30 L44 22 V38 L24 46 Z" fill="#f2d040" stroke="#000" stroke-width="1.5"/><circle cx="24" cy="18" r="14" fill="#6a9ad0"/><path d="M14 14 C18 10 22 16 28 12 C32 16 26 22 20 20 Z" fill="#2a4a7a"/><rect x="30" y="30" width="16" height="16" rx="2" fill="#d8a820"/><path d="M38 32 V44 M32 38 H44 M34 34 L42 42 M42 34 L34 42" stroke="#fff" stroke-width="1.6"/></svg>
<svg class="a" style="left:15px;top:377px" width="50" height="50" viewBox="0 0 48 48"><path d="M6 6 L18 33 L31 6" stroke="#233a5a" stroke-width="3" fill="none"/><circle cx="6" cy="6" r="3" fill="#e8e8e8"/><circle cx="31" cy="6" r="3" fill="#e8e8e8"/><circle cx="42" cy="6" r="3" fill="#e8e8e8"/><circle cx="18" cy="33" r="3" fill="#e8e8e8"/><rect x="30" y="30" width="16" height="16" rx="2" fill="#d8a820"/><path d="M38 32 V44 M32 38 H44 M34 34 L42 42 M42 34 L34 42" stroke="#fff" stroke-width="1.6"/></svg>
<svg class="a" style="left:15px;top:441px" width="50" height="50" viewBox="0 0 48 48"><path d="M4 44 C8 30 18 14 40 4 C36 18 26 32 10 40 Z" fill="#9ec0e8" stroke="#2f5684" stroke-width="1.5"/><path d="M8 40 L34 10" stroke="#2f5684" stroke-width="1"/><rect x="30" y="30" width="16" height="16" rx="2" fill="#d8a820"/><path d="M38 32 V44 M32 38 H44 M34 34 L42 42 M42 34 L34 42" stroke="#fff" stroke-width="1.6"/></svg>
<svg class="a" style="left:15px;top:507px" width="50" height="50" viewBox="0 0 48 48"><rect x="4" y="12" width="36" height="24" fill="#6a9ad0" stroke="#2f5684" stroke-width="2"/><path d="M10 4 V12 M18 4 V12 M26 4 V12 M34 4 V12 M10 36 V44 M18 36 V44 M26 36 V44" stroke="#2f5684" stroke-width="2"/><rect x="30" y="30" width="16" height="16" rx="2" fill="#d8a820"/><path d="M38 32 V44 M32 38 H44 M34 34 L42 42 M42 34 L34 42" stroke="#fff" stroke-width="1.6"/></svg>
<svg class="a" style="left:15px;top:570px" width="50" height="50" viewBox="0 0 48 48"><rect x="3" y="3" width="40" height="40" fill="#2a4a7a"/><rect x="5" y="5" width="18" height="18" fill="#8ab0e0"/><path d="M5 5 L23 23 M23 5 L5 23" stroke="#2a4a7a" stroke-width="2"/><path d="M25 5 H41 V23 H25 Z" fill="#a8c8ee"/><path d="M41 5 L25 23" stroke="#2a4a7a" stroke-width="2"/><rect x="5" y="25" width="36" height="16" fill="#6a9ad0"/><path d="M5 33 H23 M14 25 V41" stroke="#2a4a7a" stroke-width="2"/><rect x="30" y="30" width="16" height="16" rx="2" fill="#d8a820"/><path d="M38 32 V44 M32 38 H44 M34 34 L42 42 M42 34 L34 42" stroke="#fff" stroke-width="1.6"/></svg>
<svg class="a" style="left:15px;top:633px" width="50" height="50" viewBox="0 0 48 48"><rect x="3" y="3" width="40" height="40" rx="2" fill="#c8dcf0" stroke="#2f5684" stroke-width="1.5"/><path d="M6 6 L14 30 L28 6 L40 6" stroke="#2f5684" stroke-width="2.5" fill="none"/><circle cx="14" cy="30" r="3" fill="#fff" stroke="#2f5684" stroke-width="1.5"/><rect x="30" y="30" width="16" height="16" rx="2" fill="#d8a820"/><path d="M38 32 V44 M32 38 H44 M34 34 L42 42 M42 34 L34 42" stroke="#fff" stroke-width="1.6"/></svg>
<div class="a" style="left:88px;top:223px;font-size:23px;letter-spacing:0.3px;line-height:26px;color:#e6e6e6">Browser</div>
<svg class="a" style="left:367px;top:225px" width="54" height="24" viewBox="0 0 54 24"><rect x="1" y="1" width="22" height="22" fill="none" stroke="#8a8a8a" stroke-width="1.6" stroke-dasharray="2.5 1.2"/><rect x="5" y="9" width="10" height="10" fill="none" stroke="#8a8a8a" stroke-width="1.5"/><path d="M9 9 V5 H19 V15 H15" fill="none" stroke="#8a8a8a" stroke-width="1.5"/><rect x="30" y="1" width="22" height="22" fill="none" stroke="#8a8a8a" stroke-width="1.6" stroke-dasharray="2.5 1.2"/><path d="M35 6 L47 18 M47 6 L35 18" stroke="#8a8a8a" stroke-width="3"/></svg>
<svg class="a" style="left:90px;top:266px" width="40" height="40" viewBox="0 0 48 48"><rect x="6" y="6" width="28" height="30" fill="#eee" stroke="#999" stroke-width="1.5"/><rect x="26" y="28" width="16" height="16" rx="2" fill="#4a9a5a"/><path d="M34 31 V41 M29 36 H39" stroke="#fff" stroke-width="2.5"/></svg>
<svg class="a" style="left:141px;top:266px" width="40" height="40" viewBox="0 0 48 48"><path d="M8 22 A14 14 0 0 1 34 14" fill="none" stroke="#3a7ac8" stroke-width="5"/><path d="M36 4 L38 20 L24 16 Z" fill="#3a7ac8"/><path d="M36 22 A14 14 0 0 1 10 30" fill="none" stroke="#3a7ac8" stroke-width="5"/><path d="M6 40 L6 24 L20 30 Z" fill="#3a7ac8"/></svg>
<svg class="a" style="left:191px;top:266px" width="40" height="40" viewBox="0 0 48 48"><path d="M4 6 H36 L24 22 V38 L16 30 V22 Z" fill="#6a9ad0" stroke="#2f5684" stroke-width="1.5"/><rect x="4" y="4" width="32" height="4" fill="#f2d040"/></svg>
<svg class="a" style="left:242px;top:266px" width="40" height="40" viewBox="0 0 48 48"><path d="M6 6 V34 M6 10 H18 M6 22 H14 M6 34 H14" stroke="#999" stroke-width="2" fill="none"/><rect x="12" y="18" width="7" height="7" fill="#f0c030"/><rect x="12" y="30" width="7" height="7" fill="#f0c030"/><path d="M28 36 V14 H22 L30 4 L38 14 H32 V36 Z" fill="#4a86c8" stroke="#2f5684"/></svg>
<svg class="a" style="left:292px;top:266px" width="40" height="40" viewBox="0 0 48 48"><circle cx="20" cy="20" r="13" fill="#6a9ad0" stroke="#3f6aa0" stroke-width="1.5"/><text x="14" y="29" font-family="Liberation Serif" font-style="italic" font-weight="bold" font-size="19" fill="#fff">i</text></svg>
<div class="a" style="left:81px;top:318px;width:340px;height:592px;background:#2c2c2c;border:1px solid #272727"></div>
<div class="a" style="left:82px;top:319px;width:311px;height:563px;background:#1e1e1e;overflow:hidden" id="btree">
<svg class="a" style="left:6px;top:14px" width="20" height="12"><path d="M2 1 H18 L10 10 Z" fill="#bdbdbd"/></svg>
<svg class="a" style="left:38px;top:2px" width="32" height="36" viewBox="0 0 32 36"><path d="M3 16 L16 22 V34 L3 28 Z" fill="#d8b020"/><path d="M16 22 L29 16 V28 L16 34 Z" fill="#f2d040"/><circle cx="16" cy="12" r="10" fill="#6a9ad0"/><path d="M9 10 C12 7 15 12 19 9 C22 12 18 16 14 15 Z" fill="#2a4a7a"/></svg>
<div class="a" style="left:82px;top:2px;height:36px;line-height:36px;font-size:26px;letter-spacing:0.3px;color:#e6e6e6;white-space:nowrap">GeoPackage</div>
<svg class="a" style="left:38px;top:50px" width="20" height="12"><path d="M2 1 H18 L10 10 Z" fill="#bdbdbd"/></svg>
<svg class="a" style="left:70px;top:38px" width="32" height="34" viewBox="0 0 32 34"><path d="M3 8 V26 C3 32 29 32 29 26 V8" fill="#e8e8e8" stroke="#888" stroke-width="1.5"/><ellipse cx="16" cy="8" rx="13" ry="5" fill="#f5f5f5" stroke="#888" stroke-width="1.5"/><path d="M3 17 C3 22 29 22 29 17" fill="none" stroke="#888" stroke-width="1.5"/></svg>
<div class="a" style="left:115px;top:38px;height:36px;line-height:36px;font-size:26px;letter-spacing:0.3px;color:#e6e6e6;white-space:nowrap">boundary.gpkg</div>
<svg class="a" style="left:73px;top:82px" width="14" height="20"><path d="M2 1 V19 L11 10 Z" fill="#c8c8c8"/></svg>
<svg class="a" style="left:99px;top:74px" width="36" height="34" viewBox="0 0 36 34"><path d="M4 6 L12 28 L22 6 L32 6" fill="none" stroke="#bbb" stroke-width="1.6"/><circle cx="4" cy="6" r="2.5" fill="#1e1e1e" stroke="#bbb" stroke-width="1.3"/><circle cx="12" cy="28" r="2.5" fill="#1e1e1e" stroke="#bbb" stroke-width="1.3"/><circle cx="22" cy="6" r="2.5" fill="#1e1e1e" stroke="#bbb" stroke-width="1.3"/><circle cx="32" cy="6" r="2.5" fill="#1e1e1e" stroke="#bbb" stroke-width="1.3"/></svg>
<div class="a" style="left:146px;top:74px;height:36px;line-height:36px;font-size:26px;letter-spacing:0.3px;color:#e6e6e6;white-space:nowrap">border</div>
<svg class="a" style="left:73px;top:118px" width="14" height="20"><path d="M2 1 V19 L11 10 Z" fill="#c8c8c8"/></svg>
<svg class="a" style="left:99px;top:110px" width="36" height="34" viewBox="0 0 36 34"><path d="M4 6 L12 28 L22 6 L32 6" fill="none" stroke="#bbb" stroke-width="1.6"/><circle cx="4" cy="6" r="2.5" fill="#1e1e1e" stroke="#bbb" stroke-width="1.3"/><circle cx="12" cy="28" r="2.5" fill="#1e1e1e" stroke="#bbb" stroke-width="1.3"/><circle cx="22" cy="6" r="2.5" fill="#1e1e1e" stroke="#bbb" stroke-width="1.3"/><circle cx="32" cy="6" r="2.5" fill="#1e1e1e" stroke="#bbb" stroke-width="1.3"/></svg>
<div class="a" style="left:146px;top:110px;height:36px;line-height:36px;font-size:26px;letter-spacing:0.3px;color:#e6e6e6;white-space:nowrap">chian_border</div>
<svg class="a" style="left:73px;top:154px" width="14" height="20"><path d="M2 1 V19 L11 10 Z" fill="#c8c8c8"/></svg>
<svg class="a" style="left:98px;top:148px" width="38" height="32" viewBox="0 0 38 32"><defs><linearGradient id="pg" x1="0" y1="0" x2="0" y2="1"><stop offset="0" stop-color="#fff"/><stop offset="1" stop-color="#bbb"/></linearGradient></defs><path d="M3 10 C3 3 10 3 17 7 C24 10 30 3 35 7 C38 12 33 16 35 21 C37 27 32 30 26 27 C20 24 14 27 8 28 C2 28 3 20 3 10Z" fill="url(#pg)" stroke="#888" stroke-width="1.5"/></svg>
<div class="a" style="left:146px;top:146px;height:36px;line-height:36px;font-size:26px;letter-spacing:0.3px;color:#e6e6e6;white-space:nowrap">china_3857_</div>
<svg class="a" style="left:73px;top:190px" width="14" height="20"><path d="M2 1 V19 L11 10 Z" fill="#c8c8c8"/></svg>
<svg class="a" style="left:98px;top:184px" width="38" height="32" viewBox="0 0 38 32"><defs><linearGradient id="pg" x1="0" y1="0" x2="0" y2="1"><stop offset="0" stop-color="#fff"/><stop offset="1" stop-color="#bbb"/></linearGradient></defs><path d="M3 10 C3 3 10 3 17 7 C24 10 30 3 35 7 C38 12 33 16 35 21 C37 27 32 30 26 27 C20 24 14 27 8 28 C2 28 3 20 3 10Z" fill="url(#pg)" stroke="#888" stroke-width="1.5"/></svg>
<div class="a" style="left:146px;top:182px;height:36px;line-height:36px;font-size:26px;letter-spacing:0.3px;color:#e6e6e6;white-space:nowrap">china_blank</div>
<svg class="a" style="left:73px;top:226px" width="14" height="20"><path d="M2 1 V19 L11 10 Z" fill="#c8c8c8"/></svg>
<svg class="a" style="left:98px;top:220px" width="38" height="32" viewBox="0 0 38 32"><defs><linearGradient id="pg" x1="0" y1="0" x2="0" y2="1"><stop offset="0" stop-color="#fff"/><stop offset="1" stop-color="#bbb"/></linearGradient></defs><path d="M3 10 C3 3 10 3 17 7 C24 10 30 3 35 7 C38 12 33 16 35 21 C37 27 32 30 26 27 C20 24 14 27 8 28 C2 28 3 20 3 10Z" fill="url(#pg)" stroke="#888" stroke-width="1.5"/></svg>
<div class="a" style="left:146px;top:218px;height:36px;line-height:36px;font-size:26px;letter-spacing:0.3px;color:#e6e6e6;white-space:nowrap">china_city_2023</div>
<svg class="a" style="left:73px;top:262px" width="14" height="20"><path d="M2 1 V19 L11 10 Z" fill="#c8c8c8"/></svg>
<svg class="a" style="left:98px;top:256px" width="38" height="32" viewBox="0 0 38 32"><defs><linearGradient id="pg" x1="0" y1="0" x2="0" y2="1"><stop offset="0" stop-color="#fff"/><stop offset="1" stop-color="#bbb"/></linearGradient></defs><path d="M3 10 C3 3 10 3 17 7 C24 10 30 3 35 7 C38 12 33 16 35 21 C37 27 32 30 26 27 C20 24 14 27 8 28 C2 28 3 20 3 10Z" fill="url(#pg)" stroke="#888" stroke-width="1.5"/></svg>
<div class="a" style="left:146px;top:254px;height:36px;line-height:36px;font-size:26px;letter-spacing:0.3px;color:#e6e6e6;white-space:nowrap">china_county_</div>
<svg class="a" style="left:73px;top:298px" width="14" height="20"><path d="M2 1 V19 L11 10 Z" fill="#c8c8c8"/></svg>
<svg class="a" style="left:98px;top:292px" width="38" height="32" viewBox="0 0 38 32"><defs><linearGradient id="pg" x1="0" y1="0" x2="0" y2="1"><stop offset="0" stop-color="#fff"/><stop offset="1" stop-color="#bbb"/></linearGradient></defs><path d="M3 10 C3 3 10 3 17 7 C24 10 30 3 35 7 C38 12 33 16 35 21 C37 27 32 30 26 27 C20 24 14 27 8 28 C2 28 3 20 3 10Z" fill="url(#pg)" stroke="#888" stroke-width="1.5"/></svg>
<div class="a" style="left:146px;top:290px;height:36px;line-height:36px;font-size:26px;letter-spacing:0.3px;color:#e6e6e6;white-space:nowrap">China_province</div>
<svg class="a" style="left:73px;top:334px" width="14" height="20"><path d="M2 1 V19 L11 10 Z" fill="#c8c8c8"/></svg>
<svg class="a" style="left:98px;top:328px" width="38" height="32" viewBox="0 0 38 32"><defs><linearGradient id="pg" x1="0" y1="0" x2="0" y2="1"><stop offset="0" stop-color="#fff"/><stop offset="1" stop-color="#bbb"/></linearGradient></defs><path d="M3 10 C3 3 10 3 17 7 C24 10 30 3 35 7 C38 12 33 16 35 21 C37 27 32 30 26 27 C20 24 14 27 8 28 C2 28 3 20 3 10Z" fill="url(#pg)" stroke="#888" stroke-width="1.5"/></svg>
<div class="a" style="left:146px;top:326px;height:36px;line-height:36px;font-size:26px;letter-spacing:0.3px;color:#e6e6e6;white-space:nowrap">china_province</div>
<svg class="a" style="left:73px;top:370px" width="14" height="20"><path d="M2 1 V19 L11 10 Z" fill="#c8c8c8"/></svg>
<svg class="a" style="left:101px;top:362px" width="34" height="34" viewBox="0 0 34 34"><circle cx="6" cy="28" r="2.8" fill="#1e1e1e" stroke="#bbb" stroke-width="1.5"/><circle cx="12" cy="16" r="2.8" fill="#1e1e1e" stroke="#bbb" stroke-width="1.5"/><circle cx="26" cy="6" r="2.8" fill="#1e1e1e" stroke="#bbb" stroke-width="1.5"/></svg>
<div class="a" style="left:146px;top:362px;height:36px;line-height:36px;font-size:26px;letter-spacing:0.3px;color:#e6e6e6;white-space:nowrap">KGPV_PVmscu</div>
<svg class="a" style="left:73px;top:406px" width="14" height="20"><path d="M2 1 V19 L11 10 Z" fill="#c8c8c8"/></svg>
<svg class="a" style="left:99px;top:398px" width="36" height="34" viewBox="0 0 36 34"><path d="M4 6 L12 28 L22 6 L32 6" fill="none" stroke="#bbb" stroke-width="1.6"/><circle cx="4" cy="6" r="2.5" fill="#1e1e1e" stroke="#bbb" stroke-width="1.3"/><circle cx="12" cy="28" r="2.5" fill="#1e1e1e" stroke="#bbb" stroke-width="1.3"/><circle cx="22" cy="6" r="2.5" fill="#1e1e1e" stroke="#bbb" stroke-width="1.3"/><circle cx="32" cy="6" r="2.5" fill="#1e1e1e" stroke="#bbb" stroke-width="1.3"/></svg>
<div class="a" style="left:146px;top:398px;height:36px;line-height:36px;font-size:26px;letter-spacing:0.3px;color:#e6e6e6;white-space:nowrap">nine_lines_border</div>
<svg class="a" style="left:73px;top:442px" width="14" height="20"><path d="M2 1 V19 L11 10 Z" fill="#c8c8c8"/></svg>
<svg class="a" style="left:101px;top:434px" width="34" height="34" viewBox="0 0 34 34"><circle cx="6" cy="28" r="2.8" fill="#1e1e1e" stroke="#bbb" stroke-width="1.5"/><circle cx="12" cy="16" r="2.8" fill="#1e1e1e" stroke="#bbb" stroke-width="1.5"/><circle cx="26" cy="6" r="2.8" fill="#1e1e1e" stroke="#bbb" stroke-width="1.5"/></svg>
<div class="a" style="left:146px;top:434px;height:36px;line-height:36px;font-size:26px;letter-spacing:0.3px;color:#e6e6e6;white-space:nowrap">QGIS Contributors</div>
<svg class="a" style="left:73px;top:478px" width="14" height="20"><path d="M2 1 V19 L11 10 Z" fill="#c8c8c8"/></svg>
<svg class="a" style="left:98px;top:472px" width="38" height="32" viewBox="0 0 38 32"><defs><linearGradient id="pg" x1="0" y1="0" x2="0" y2="1"><stop offset="0" stop-color="#fff"/><stop offset="1" stop-color="#bbb"/></linearGradient></defs><path d="M3 10 C3 3 10 3 17 7 C24 10 30 3 35 7 C38 12 33 16 35 21 C37 27 32 30 26 27 C20 24 14 27 8 28 C2 28 3 20 3 10Z" fill="url(#pg)" stroke="#888" stroke-width="1.5"/></svg>
<div class="a" style="left:146px;top:470px;height:36px;line-height:36px;font-size:26px;letter-spacing:0.3px;color:#e6e6e6;white-space:nowrap">yunnan_city_2023</div>
<div class="a" style="left:0;top:506px;width:311px;height:36px;background:#464646"></div>
<svg class="a" style="left:73px;top:514px" width="14" height="20"><path d="M2 1 V19 L11 10 Z" fill="#c8c8c8"/></svg>
<svg class="a" style="left:98px;top:508px" width="38" height="32" viewBox="0 0 38 32"><defs><linearGradient id="pg" x1="0" y1="0" x2="0" y2="1"><stop offset="0" stop-color="#fff"/><stop offset="1" stop-color="#bbb"/></linearGradient></defs><path d="M3 10 C3 3 10 3 17 7 C24 10 30 3 35 7 C38 12 33 16 35 21 C37 27 32 30 26 27 C20 24 14 27 8 28 C2 28 3 20 3 10Z" fill="url(#pg)" stroke="#888" stroke-width="1.5"/></svg>
<div class="a" style="left:146px;top:506px;height:36px;line-height:36px;font-size:26px;letter-spacing:0.3px;color:#e6e6e6;white-space:nowrap">yunnan_county_</div>
<svg class="a" style="left:73px;top:550px" width="14" height="20"><path d="M2 1 V19 L11 10 Z" fill="#c8c8c8"/></svg>
<svg class="a" style="left:98px;top:544px" width="38" height="32" viewBox="0 0 38 32"><defs><linearGradient id="pg" x1="0" y1="0" x2="0" y2="1"><stop offset="0" stop-color="#fff"/><stop offset="1" stop-color="#bbb"/></linearGradient></defs><path d="M3 10 C3 3 10 3 17 7 C24 10 30 3 35 7 C38 12 33 16 35 21 C37 27 32 30 26 27 C20 24 14 27 8 28 C2 28 3 20 3 10Z" fill="url(#pg)" stroke="#888" stroke-width="1.5"/></svg>
<div class="a" style="left:146px;top:542px;height:36px;line-height:36px;font-size:26px;letter-spacing:0.3px;color:#e6e6e6;white-space:nowrap">云南省_中华人民</div>
</div>
<div class="a" style="left:393px;top:319px;width:27px;height:563px;background:#2e2e2e;border-left:1px solid #252525"></div>
<div class="a" style="left:394px;top:320px;width:25px;height:25px;background:#3a3a3a;border:1px solid #4a4a4a"></div>
<svg class="a" style="left:398px;top:325px" width="18" height="14"><path d="M1 12 H17 L9 3 Z" fill="#bdbdbd"/></svg>
<div class="a" style="left:394px;top:632px;width:25px;height:86px;background:#3a3a3a;border:1px solid #4a4a4a"></div>
<div class="a" style="left:394px;top:855px;width:25px;height:26px;background:#3a3a3a;border:1px solid #4a4a4a"></div>
<svg class="a" style="left:398px;top:861px" width="18" height="14"><path d="M1 2 H17 L9 11 Z" fill="#bdbdbd"/></svg>
<div class="a" style="left:82px;top:882px;width:311px;height:27px;background:#2e2e2e;border-top:1px solid #252525"></div>
<div class="a" style="left:82px;top:883px;width:25px;height:25px;background:#3a3a3a;border:1px solid #4a4a4a"></div>
<svg class="a" style="left:87px;top:886px" width="14" height="20"><path d="M12 1 V19 L3 10 Z" fill="#bdbdbd"/></svg>
<div class="a" style="left:110px;top:883px;width:131px;height:25px;background:#3c3c3c;border:1px solid #4a4a4a"></div>
<div class="a" style="left:366px;top:883px;width:25px;height:25px;background:#3a3a3a;border:1px solid #4a4a4a"></div>
<svg class="a" style="left:372px;top:886px" width="14" height="20"><path d="M2 1 V19 L11 10 Z" fill="#bdbdbd"/></svg>
<div class="a" style="left:393px;top:883px;width:27px;height:26px;background:#2e2e2e;border:1px solid #282828"></div>
<svg class="a" style="left:230px;top:916px" width="38" height="3"><rect x="0.0" y="0.0" width="3.2" height="3.2" fill="#8c8c8c"/><rect x="7.0" y="0.0" width="3.2" height="3.2" fill="#8c8c8c"/><rect x="14.0" y="0.0" width="3.2" height="3.2" fill="#8c8c8c"/><rect x="21.0" y="0.0" width="3.2" height="3.2" fill="#8c8c8c"/><rect x="28.0" y="0.0" width="3.2" height="3.2" fill="#8c8c8c"/><rect x="35.0" y="0.0" width="3.2" height="3.2" fill="#8c8c8c"/></svg>
<svg class="a" style="left:428px;top:883px" width="3" height="33"><rect x="0.0" y="0.0" width="3.4" height="3.4" fill="#8c8c8c"/><rect x="0.0" y="6.0" width="3.4" height="3.4" fill="#8c8c8c"/><rect x="0.0" y="12.0" width="3.4" height="3.4" fill="#8c8c8c"/><rect x="0.0" y="18.0" width="3.4" height="3.4" fill="#8c8c8c"/><rect x="0.0" y="24.0" width="3.4" height="3.4" fill="#8c8c8c"/><rect x="0.0" y="30.0" width="3.4" height="3.4" fill="#8c8c8c"/></svg>
<div class="a" style="left:88px;top:929px;font-size:23px;letter-spacing:0.3px;line-height:26px;color:#e6e6e6">Layers</div>
<svg class="a" style="left:367px;top:931px" width="54" height="24" viewBox="0 0 54 24"><rect x="1" y="1" width="22" height="22" fill="none" stroke="#8a8a8a" stroke-width="1.6" stroke-dasharray="2.5 1.2"/><rect x="5" y="9" width="10" height="10" fill="none" stroke="#8a8a8a" stroke-width="1.5"/><path d="M9 9 V5 H19 V15 H15" fill="none" stroke="#8a8a8a" stroke-width="1.5"/><rect x="30" y="1" width="22" height="22" fill="none" stroke="#8a8a8a" stroke-width="1.6" stroke-dasharray="2.5 1.2"/><path d="M35 6 L47 18 M47 6 L35 18" stroke="#8a8a8a" stroke-width="3"/></svg>
<svg class="a" style="left:92px;top:973px" width="40" height="40" viewBox="0 0 48 48"><path d="M4 30 L14 12 L28 16 L18 36 Z" fill="#d03030"/><path d="M8 18 L14 8 L28 12 L22 22 Z" fill="#6a9ad0"/><path d="M12 10 L16 4 L28 8 L24 14 Z" fill="#f0c030"/><path d="M16 24 L26 14 L34 22 L24 34 Z" fill="#e0c080"/><path d="M28 18 L38 6" stroke="#c9a227" stroke-width="3"/></svg>
<svg class="a" style="left:142px;top:973px" width="40" height="40" viewBox="0 0 48 48"><path d="M4 38 V16 H10 M4 38 H28" stroke="#888" stroke-width="2" fill="none"/><rect x="10" y="6" width="24" height="26" fill="#eee" stroke="#999" stroke-width="1.5"/><path d="M20 20 V4 C20 1 24 1 24 4 V24" stroke="#2f5684" stroke-width="1.8" fill="none"/><rect x="24" y="26" width="14" height="14" rx="2" fill="#4a9a5a"/><path d="M31 29 V37 M27 33 H35" stroke="#fff" stroke-width="2.2"/></svg>
<svg class="a" style="left:192px;top:973px" width="40" height="40" viewBox="0 0 48 48"><path d="M2 20 C10 8 30 8 38 20 C30 32 10 32 2 20Z" fill="#f2f2f2" stroke="#ccc"/><circle cx="20" cy="19" r="8" fill="#6a9ad0"/><circle cx="20" cy="19" r="3.5" fill="#000"/><path d="M4 10 C14 4 28 4 36 12" stroke="#999" stroke-width="1.5" fill="none"/></svg>
<svg class="a" style="left:220px;top:1000px" width="12" height="7" viewBox="0 0 12 7"><path d="M0 0 H12 L6.0 7 Z" fill="#bdbdbd"/></svg>
<svg class="a" style="left:242px;top:973px" width="40" height="40" viewBox="0 0 48 48"><path d="M4 6 H36 L24 22 V38 L16 30 V22 Z" fill="#6a9ad0" stroke="#2f5684" stroke-width="1.5"/><rect x="4" y="4" width="32" height="4" fill="#f2d040"/></svg>
<svg class="a" style="left:270px;top:1000px" width="12" height="7" viewBox="0 0 12 7"><path d="M0 0 H12 L6.0 7 Z" fill="#bdbdbd"/></svg>
<svg class="a" style="left:296px;top:973px" width="40" height="40" viewBox="0 0 48 48"><text x="2" y="24" font-family="Liberation Serif" font-size="26" fill="#8a50b0">ε</text><rect x="16" y="20" width="16" height="16" rx="3" fill="#bbb"/><path d="M19 23 H29 L26 28 V33 H22 V28 Z" fill="#eee"/></svg>
<svg class="a" style="left:341px;top:988px" width="14" height="8" viewBox="0 0 14 8"><path d="M0 0 H14 L7.0 8 Z" fill="#bdbdbd"/></svg>
<div class="a" style="left:81px;top:1024px;width:340px;height:550px;background:#1e1e1e;border:1px solid #282828"></div>
<div class="a" style="left:82px;top:1026px;width:338px;height:36px;background:#464646"></div>
<svg class="a" style="left:94px;top:1035px" width="14" height="20"><path d="M2 1 V19 L11 10 Z" fill="#c8c8c8"/></svg>
<div class="a" style="left:128px;top:1030px;width:28px;height:28px;background:#1e1e1e;border-radius:2px"></div>
<svg class="a" style="left:128px;top:1030px" width="28" height="28"><path d="M6 14 L12 22 L22 6" fill="none" stroke="#c8c8c8" stroke-width="3"/></svg>
<svg class="a" style="left:164px;top:1028px" width="38" height="32" viewBox="0 0 38 32"><defs><linearGradient id="pg2" x1="0" y1="0" x2="0" y2="1"><stop offset="0" stop-color="#fff"/><stop offset="1" stop-color="#bbb"/></linearGradient></defs><path d="M3 10 C3 3 10 3 17 7 C24 10 30 3 35 7 C38 12 33 16 35 21 C37 27 32 30 26 27 C20 24 14 27 8 28 C2 28 3 20 3 10Z" fill="url(#pg2)" stroke="#888" stroke-width="1.5"/></svg>
<div class="a" style="left:212px;top:1026px;width:208px;height:36px;overflow:hidden"><div style="font-weight:bold;font-size:26px;letter-spacing:0.8px;line-height:36px;color:#fff;text-decoration:underline;text-decoration-thickness:3px;text-underline-offset:5px;white-space:nowrap">yunnan_county_2023</div></div>
<div class="a" style="left:82px;top:1547px;width:338px;height:27px;background:#2e2e2e;border-top:1px solid #252525"></div>
<div class="a" style="left:82px;top:1548px;width:25px;height:25px;background:#3a3a3a;border:1px solid #4a4a4a"></div>
<svg class="a" style="left:87px;top:1551px" width="14" height="20"><path d="M12 1 V19 L3 10 Z" fill="#bdbdbd"/></svg>
<div class="a" style="left:110px;top:1548px;width:222px;height:25px;background:#3c3c3c;border:1px solid #4a4a4a"></div>
<div class="a" style="left:393px;top:1548px;width:25px;height:25px;background:#3a3a3a;border:1px solid #4a4a4a"></div>
<svg class="a" style="left:399px;top:1551px" width="14" height="20"><path d="M2 1 V19 L11 10 Z" fill="#bdbdbd"/></svg>
<div class="a" style="left:9px;top:1583px;width:426px;height:46px;border-radius:7px;background:#1d1d1d;border:1px solid #262626"></div>
<svg class="a" style="left:24px;top:1592px" width="28" height="28" viewBox="0 0 28 28"><circle cx="11" cy="11" r="8" fill="none" stroke="#9a9a9a" stroke-width="2.4"/><path d="M17 17 L25 25" stroke="#9a9a9a" stroke-width="2.8"/></svg>
<div class="a" style="left:66px;top:1587px;font-size:26.5px;letter-spacing:0.35px;line-height:36px;color:#8f8f8f;white-space:nowrap">Type to locate (⌘K)</div>
<div class="a" style="left:1173px;top:1590px;font-size:23px;line-height:34px;color:#e4e4e4;white-space:nowrap">Coordinate</div>
<div class="a" style="left:1295px;top:1585px;width:194px;height:43px;border-radius:6px;background:#1e1e1e;border:1px solid #262626"></div>
<div class="a" style="left:1316px;top:1590px;font-size:23px;line-height:34px;color:#e4e4e4;white-space:nowrap">17.56°,114.76°</div>
<svg class="a" style="left:1497px;top:1588px" width="34" height="34" viewBox="0 0 34 34"><g transform="rotate(-32 17 17)"><ellipse cx="19" cy="19" rx="9" ry="13" fill="#aaa"/><ellipse cx="17" cy="17" rx="9" ry="13" fill="#fff" stroke="#000" stroke-width="2.2"/><path d="M9 14 H25" stroke="#000" stroke-width="1.6"/><path d="M17 5 V14" stroke="#000" stroke-width="3"/><circle cx="17" cy="23" r="2.6" fill="none" stroke="#000" stroke-width="1.5"/></g><circle cx="31" cy="3" r="1.2" fill="#222"/><circle cx="27" cy="6" r="1.2" fill="#222"/><circle cx="3" cy="29" r="1.2" fill="#222"/></svg>
<div class="a" style="left:1557px;top:1590px;font-size:23px;line-height:34px;color:#e4e4e4;white-space:nowrap">Scale</div>
<div class="a" style="left:1621px;top:1584px;width:183px;height:45px;border-radius:6px;background:#1e1e1e;border:1px solid #262626"></div>
<div class="a" style="left:1764px;top:1585px;width:39px;height:43px;border-radius:0 6px 6px 0;background:#3a3a3a;border:1px solid #4a4a4a"></div>
<svg class="a" style="left:1776px;top:1602px" width="14" height="8" viewBox="0 0 14 8"><path d="M0 0 H14 L7.0 8 Z" fill="#1e1e1e"/></svg>
<div class="a" style="left:1628px;top:1590px;font-size:23px;line-height:34px;color:#e4e4e4;white-space:nowrap">1:4564664</div>
<svg class="a" style="left:1829px;top:1590px" width="26" height="32" viewBox="0 0 26 32"><path d="M6 14 V9 A7 7 0 0 1 20 9 V14" fill="none" stroke="#5a5a5a" stroke-width="3.5"/><rect x="2" y="14" width="22" height="17" rx="3" fill="#5a5a5a"/></svg>
<div class="a" style="left:1873px;top:1590px;font-size:23px;line-height:34px;color:#e4e4e4;white-space:nowrap">Magnifier</div>
<div class="a" style="left:1979px;top:1585px;width:183px;height:43px;border-radius:6px;background:#1e1e1e;border:1px solid #262626"></div>
<div class="a" style="left:1990px;top:1590px;font-size:23px;line-height:34px;color:#e4e4e4;white-space:nowrap">100%</div>
<div class="a" style="left:2135px;top:1586px;width:27px;height:41px;border-radius:0 5px 5px 0;background:#3a3a3a;border:1px solid #4a4a4a"></div>
<svg class="a" style="left:2141px;top:1592px" width="16" height="30"><path d="M1 10 H15 L8 2 Z M1 20 H15 L8 28 Z" fill="#bdbdbd"/></svg>
<div class="a" style="left:2182px;top:1590px;font-size:23px;line-height:34px;color:#e4e4e4;white-space:nowrap">Rotation</div>
<div class="a" style="left:2289px;top:1585px;width:183px;height:43px;border-radius:6px;background:#1e1e1e;border:1px solid #262626"></div>
<div class="a" style="left:2299px;top:1590px;font-size:23px;line-height:34px;color:#e4e4e4;white-space:nowrap">0.0 °</div>
<div class="a" style="left:2445px;top:1586px;width:27px;height:41px;border-radius:0 5px 5px 0;background:#3a3a3a;border:1px solid #4a4a4a"></div>
<svg class="a" style="left:2451px;top:1592px" width="16" height="30"><path d="M1 10 H15 L8 2 Z M1 20 H15 L8 28 Z" fill="#bdbdbd"/></svg>
<div class="a" style="left:2486px;top:1593px;width:27px;height:27px;background:#1e1e1e;border-radius:2px"></div>
<svg class="a" style="left:2486px;top:1593px" width="27" height="27"><path d="M6 13 L11 21 L21 5" fill="none" stroke="#c8c8c8" stroke-width="2.6"/></svg>
<div class="a" style="left:2525px;top:1590px;font-size:23px;line-height:34px;color:#e4e4e4;white-space:nowrap">Render</div>
<svg class="a" style="left:2630px;top:1591px" width="30" height="30" viewBox="0 0 30 30"><circle cx="15" cy="15" r="12" fill="none" stroke="#999" stroke-width="2.2"/><ellipse cx="15" cy="15" rx="6" ry="12" fill="none" stroke="#999" stroke-width="1.8"/><path d="M4 10 H26 M3 15 H27 M4 20 H26" stroke="#999" stroke-width="1.8"/></svg>
<div class="a" style="left:2667px;top:1590px;font-size:23px;line-height:34px;color:#000;-webkit-text-stroke:0.5px #000;white-space:nowrap">EPSG:4326</div>
<svg class="a" style="left:2831px;top:1592px" width="38" height="34" viewBox="0 0 38 34"><ellipse cx="18" cy="13" rx="16" ry="12" fill="#666"/><path d="M22 22 L34 31 L26 19 Z" fill="#666"/><circle cx="11" cy="13" r="2.6" fill="#fff"/><circle cx="18" cy="13" r="2.6" fill="#fff"/><circle cx="25" cy="13" r="2.6" fill="#fff"/></svg><!--/UI-->
<!--CHAT-->
<div class="a" id="chat" style="left:1945px;top:295px;width:802px;height:1101px;border-radius:22px;background:#252523;border:1px solid #111;box-shadow:0 0 0 2px #4c4c4a inset,0 6px 36px rgba(0,0,0,0.26)"></div>
<div class="a" style="left:1980px;top:396px;width:734px;height:192px;border-radius:20px;background:#141412"></div>
<div class="a" style="left:1948px;top:298px;width:796px;height:103px;border-radius:21px 21px 0 0;background:#252523"></div>
<div class="a" style="left:1947px;top:400px;width:798px;height:2px;background:#383836"></div>
<div class="a" style="left:1988px;top:339px;width:24px;height:24px;border-radius:50%;background:#3c3c3a"></div>
<div class="a" style="left:2028px;top:339px;width:24px;height:24px;border-radius:50%;background:#3c3c3a"></div>
<div class="a" style="left:2068px;top:339px;width:24px;height:24px;border-radius:50%;background:#3c3c3a"></div>
<svg class="a" style="left:2138px;top:336px" width="38" height="30" viewBox="0 0 38 30"><rect x="4" y="5" width="30" height="21" rx="2" fill="none" stroke="#c9c7bf" stroke-width="2"/><line x1="13" y1="5" x2="13" y2="26" stroke="#c9c7bf" stroke-width="2"/></svg>
<svg class="a" style="left:2218px;top:334px" width="36" height="36" viewBox="0 0 52 52"><ellipse cx="27" cy="22" rx="22" ry="18" fill="#f4f4f4" stroke="#bdbdbd" stroke-width="1"/><path d="M12 34 L6 48 L22 38 Z" fill="#e8e8e8"/><circle cx="18" cy="22" r="2.6" fill="#333"/><circle cx="27" cy="22" r="2.6" fill="#333"/><circle cx="36" cy="22" r="2.6" fill="#333"/></svg>
<div class="a" style="left:2256px;top:330px;font-size:28px;color:#ecebe4;line-height:40px;white-space:nowrap">帮我查看当...</div>
<svg class="a" style="left:2432px;top:340px" width="28" height="22" viewBox="0 0 28 22"><path d="M5 7 L14 16 L23 7" fill="none" stroke="#d6d4cc" stroke-width="2.4"/></svg>
<svg class="a" style="left:2528px;top:330px" width="36" height="40" viewBox="0 0 36 40"><path d="M18 4 V26 M9 12 L18 3 L27 12" fill="none" stroke="#d6d4cc" stroke-width="2.2"/><path d="M6 18 V35 H30 V18" fill="none" stroke="#d6d4cc" stroke-width="2.2"/></svg>
<svg class="a" style="left:2596px;top:331px" width="40" height="40" viewBox="0 0 40 40"><path d="M4 4 V36" stroke="#d6d4cc" stroke-width="2.2"/><path d="M34 20 H11 M20 11 L11 20 L20 29" fill="none" stroke="#d6d4cc" stroke-width="2.2"/></svg>
<div class="a" style="left:2658px;top:318px;width:64px;height:64px;border-radius:14px;background:#c97b5f"></div>
<svg class="a" style="left:2658px;top:318px" width="64" height="64" viewBox="0 0 64 64"><path d="M32 18 V46 M18 32 H46" stroke="#fff" stroke-width="4"/></svg>
<div class="a" style="left:1999px;top:417px;width:56px;height:56px;border-radius:50%;background:#c6c3bb;color:#2e2e2c;font-weight:bold;font-size:25px;line-height:56px;text-align:center">H</div>
<div class="a" style="left:2073px;top:421px;width:640px;font-size:29px;line-height:48px;color:#f2f0e8">帮我计算所有要素的面积，并生成一个柱状<br>图，柱状图标签是地名，地名字段的名称为中<br>文，“地名”。结果保存在我的桌面上。</div>
<div class="a" style="left:1995px;top:628px;font-size:31px;line-height:44px;color:#eeece4;font-family:'Liberation Serif',serif;white-space:nowrap">我会帮您完成这个任务：</div>
<div class="a" style="left:1995px;top:697px;font-size:27.5px;line-height:36px;color:#9b9890;white-space:nowrap">View result from <b style="color:#b0ada4">execute_code</b> from <b style="color:#b0ada4">qgis</b> (local)</div>
<svg class="a" style="left:2604px;top:704px" width="20" height="24" viewBox="0 0 20 24"><path d="M6 4 L14 12 L6 20" fill="none" stroke="#9b9890" stroke-width="2.2"/></svg>
<div class="a" style="left:1995px;top:761px;font-size:31px;line-height:44px;color:#eeece4;font-family:'Liberation Serif',serif;white-space:nowrap">我已完成以下工作：</div>
<div class="a" style="left:2015px;top:833px;font-size:31px;line-height:44px;color:#eeece4;font-family:'Liberation Serif',serif;white-space:nowrap">1.</div>
<div class="a" style="left:2051px;top:833px;font-size:31px;line-height:44px;color:#eeece4;font-family:'Liberation Serif',serif;white-space:nowrap">计算了每个要素的面积</div>
<div class="a" style="left:2015px;top:899px;font-size:31px;line-height:44px;color:#eeece4;font-family:'Liberation Serif',serif;white-space:nowrap">2.</div>
<div class="a" style="left:2051px;top:899px;font-size:31px;line-height:44px;color:#eeece4;font-family:'Liberation Serif',serif;white-space:nowrap">生成了以地名为标签的面积柱状图</div>
<div class="a" style="left:2015px;top:963px;font-size:31px;line-height:44px;color:#eeece4;font-family:'Liberation Serif',serif;white-space:nowrap">3.</div>
<div class="a" style="left:2051px;top:963px;font-size:31px;line-height:44px;color:#eeece4;font-family:'Liberation Serif',serif;white-space:nowrap">将图表保存为</div>
<div class="a" style="left:2015px;top:1084px;font-size:31px;line-height:44px;color:#eeece4;font-family:'Liberation Serif',serif;white-space:nowrap">4.</div>
<div class="a" style="left:2051px;top:1084px;font-size:31px;line-height:44px;color:#eeece4;font-family:'Liberation Serif',serif;white-space:nowrap">将详细数据保存为</div>
<div class="a" style="left:2247px;top:965px;width:441px;height:39px;border-radius:8px;background:#2c2c2a;border:1px solid #3c3c39"></div>
<div class="a" style="left:2256px;top:965px;height:39px;line-height:39px;font-family:'Liberation Mono',monospace;font-size:28px;color:#dd7b73;white-space:nowrap">/Users/wsh/Desktop/云南县域</div>
<div class="a" style="left:2050px;top:1020px;width:190px;height:39px;border-radius:8px;background:#2c2c2a;border:1px solid #3c3c39"></div>
<div class="a" style="left:2051px;top:1020px;height:39px;line-height:39px;font-family:'Liberation Mono',monospace;font-size:28px;color:#dd7b73;white-space:nowrap">面积分布.png</div>
<div class="a" style="left:2310px;top:1086px;width:385px;height:39px;border-radius:8px;background:#2c2c2a;border:1px solid #3c3c39"></div>
<div class="a" style="left:2319px;top:1086px;height:39px;line-height:39px;font-family:'Liberation Mono',monospace;font-size:28px;color:#dd7b73;white-space:nowrap">/Users/wsh/Desktop/云南</div>
<div class="a" style="left:2050px;top:1141px;width:245px;height:39px;border-radius:8px;background:#2c2c2a;border:1px solid #3c3c39"></div>
<div class="a" style="left:2051px;top:1141px;height:39px;line-height:39px;font-family:'Liberation Mono',monospace;font-size:28px;color:#dd7b73;white-space:nowrap">县域面积数据.csv</div>

<div class="a" style="left:1962px;top:1182px;width:767px;height:197px;border-radius:30px;background:#2f2f2d;border:1px solid #40403d"></div>
<div class="a" style="left:1993px;top:1217px;font-size:32px;line-height:40px;color:#9c9a92;white-space:nowrap">Reply to Claude...</div>
<div class="a" style="left:1991px;top:1287px;width:64px;height:64px;border-radius:15px;border:1px solid #454542"></div>
<svg class="a" style="left:1991px;top:1287px" width="64" height="64" viewBox="0 0 64 64"><path d="M32 20 V44 M20 32 H44" stroke="#cfcdc5" stroke-width="2.6"/></svg>
<div class="a" style="left:2071px;top:1287px;width:64px;height:64px;border-radius:15px;border:1px solid #454542"></div>
<svg class="a" style="left:2071px;top:1287px" width="64" height="64" viewBox="0 0 64 64"><path d="M20 27 H44 M20 38 H44" stroke="#cfcdc5" stroke-width="2.4"/><circle cx="29" cy="27" r="3.5" fill="#2d2d2b" stroke="#cfcdc5" stroke-width="2"/><circle cx="36" cy="38" r="3.5" fill="#2d2d2b" stroke="#cfcdc5" stroke-width="2"/></svg>
<div class="a" style="left:2371px;top:1298px;font-size:31px;line-height:44px;color:#e2e0d8;font-family:'Liberation Serif',serif;white-space:nowrap">Claude 3.5 Haiku</div>
<svg class="a" style="left:2592px;top:1308px" width="24" height="20" viewBox="0 0 24 20"><path d="M4 6 L12 14 L20 6" fill="none" stroke="#b5b3ab" stroke-width="2"/></svg>
<div class="a" style="left:2637px;top:1287px;width:64px;height:64px;border-radius:15px;background:#7a4a3b"></div>
<svg class="a" style="left:2637px;top:1287px" width="64" height="64" viewBox="0 0 64 64"><path d="M32 46 V19 M21 30 L32 19 L43 30" fill="none" stroke="#a9a59d" stroke-width="3"/></svg>

<!--MAP--><svg class="a" style="left:880px;top:370px" width="900" height="840" viewBox="0 0 3120 2912">
<g stroke="#1c1c1c" stroke-width="6.5" stroke-linejoin="round">
<path fill="#a47fec" d="M1978 946 L1989 947 L1992 957 L1987 970 L1994 968 L2005 962 L2019 955 L2031 958 L2044 956 L2047 944 L2053 935 L2062 928 L2068 926 L2081 918 L2091 912 L2103 911 L2109 904 L2109 894 L2109 879 L2104 870 L2106 862 L2113 847 L2113 839 L2119 827 L2127 821 L2136 821 L2150 821 L2163 815 L2172 810 L2176 804 L2188 801 L2200 801 L2209 809 L2217 819 L2225 821 L2223 831 L2227 836 L2230 836 L2236 847 L2240 856 L2233 869 L2222 876 L2234 889 L2241 905 L2246 909 L2239 921 L2235 928 L2230 937 L2230 945 L2233 954 L2236 962 L2244 973 L2249 983 L2258 985 L2272 986 L2280 987 L2290 987 L2302 986 L2310 986 L2327 987 L2333 986 L2338 982 L2341 982 L2344 975 L2351 965 L2358 957 L2376 950 L2389 944 L2396 945 L2401 947 L2407 953 L2422 948 L2434 947 L2440 941 L2453 935 L2459 930 L2468 920 L2469 928 L2470 940 L2475 951 L2476 960 L2490 963 L2501 961 L2511 961 L2521 965 L2526 974 L2531 980 L2541 991 L2541 998 L2543 1009 L2553 1020 L2556 1029 L2553 1041 L2546 1044 L2535 1048 L2526 1057 L2526 1065 L2530 1073 L2529 1086 L2523 1100 L2521 1108 L2516 1115 L2514 1123 L2508 1127 L2504 1134 L2496 1144 L2490 1160 L2492 1176 L2479 1184 L2471 1189 L2465 1195 L2462 1201 L2459 1213 L2462 1221 L2459 1231 L2455 1240 L2446 1249 L2436 1258 L2430 1264 L2431 1273 L2441 1284 L2438 1285 L2443 1296 L2454 1305 L2462 1312 L2463 1321 L2465 1328 L2473 1341 L2484 1343 L2497 1343 L2505 1348 L2514 1362 L2518 1371 L2526 1378 L2532 1382 L2537 1389 L2545 1391 L2551 1396 L2561 1400 L2563 1411 L2569 1413 L2577 1419 L2585 1428 L2590 1430 L2597 1439 L2610 1459 L2597 1454 L2578 1452 L2569 1451 L2564 1466 L2564 1478 L2562 1481 L2561 1488 L2559 1500 L2561 1511 L2556 1520 L2549 1526 L2541 1540 L2544 1552 L2534 1556 L2524 1556 L2522 1566 L2518 1578 L2512 1583 L2511 1599 L2509 1605 L2503 1613 L2500 1625 L2501 1640 L2495 1651 L2491 1659 L2495 1668 L2501 1675 L2505 1682 L2505 1691 L2505 1708 L2507 1717 L2498 1719 L2492 1720 L2490 1727 L2481 1724 L2471 1728 L2456 1730 L2447 1739 L2439 1741 L2435 1744 L2420 1743 L2404 1740 L2400 1741 L2396 1744 L2390 1750 L2380 1753 L2366 1749 L2359 1748 L2345 1747 L2338 1748 L2325 1757 L2314 1758 L2305 1758 L2297 1753 L2287 1754 L2279 1754 L2273 1756 L2258 1757 L2247 1757 L2239 1750 L2230 1745 L2226 1747 L2222 1752 L2209 1744 L2201 1737 L2191 1740 L2185 1742 L2170 1740 L2159 1734 L2153 1731 L2149 1733 L2139 1729 L2132 1726 L2121 1723 L2110 1714 L2100 1718 L2088 1717 L2077 1714 L2071 1709 L2065 1706 L2057 1707 L2046 1705 L2032 1708 L2025 1708 L2019 1703 L2013 1699 L2006 1697 L1995 1699 L1984 1703 L1977 1710 L1969 1713 L1955 1714 L1942 1720 L1935 1720 L1934 1723 L1928 1728 L1915 1737 L1902 1738 L1895 1741 L1886 1747 L1875 1743 L1865 1748 L1861 1754 L1851 1750 L1839 1746 L1828 1744 L1819 1743 L1812 1744 L1809 1735 L1806 1736 L1787 1730 L1775 1724 L1768 1719 L1758 1720 L1752 1718 L1745 1718 L1732 1716 L1723 1715 L1716 1716 L1709 1714 L1706 1703 L1695 1695 L1685 1688 L1682 1680 L1677 1670 L1675 1660 L1668 1655 L1661 1646 L1657 1641 L1649 1633 L1644 1629 L1634 1625 L1624 1617 L1616 1612 L1615 1607 L1619 1592 L1620 1581 L1617 1573 L1614 1561 L1611 1550 L1607 1537 L1611 1537 L1610 1530 L1604 1523 L1601 1516 L1595 1499 L1590 1484 L1596 1478 L1593 1472 L1599 1464 L1597 1454 L1591 1445 L1589 1435 L1583 1429 L1579 1421 L1578 1408 L1578 1396 L1579 1387 L1574 1380 L1572 1378 L1574 1367 L1572 1352 L1568 1341 L1569 1341 L1568 1332 L1561 1320 L1558 1313 L1559 1304 L1562 1298 L1569 1291 L1575 1284 L1578 1275 L1584 1262 L1590 1255 L1601 1250 L1610 1244 L1608 1239 L1615 1228 L1622 1221 L1627 1217 L1632 1212 L1637 1201 L1645 1188 L1652 1184 L1651 1178 L1653 1174 L1659 1164 L1667 1155 L1671 1151 L1679 1140 L1683 1137 L1689 1127 L1687 1120 L1696 1111 L1707 1103 L1715 1094 L1718 1094 L1724 1093 L1734 1086 L1739 1076 L1752 1074 L1760 1076 L1767 1071 L1782 1066 L1785 1059 L1794 1054 L1798 1047 L1805 1040 L1810 1054 L1813 1064 L1823 1071 L1828 1079 L1834 1089 L1834 1091 L1846 1089 L1854 1083 L1865 1084 L1870 1084 L1885 1077 L1891 1075 L1902 1071 L1911 1064 L1915 1061 L1921 1060 L1929 1059 L1939 1057 L1950 1051 L1959 1040 L1962 1033 L1962 1027 L1964 1017 L1969 1007 L1971 999 L1976 989 L1978 975 L1975 963 L1982 956 L1984 947 Z"/>
<path fill="#b57eec" d="M1707 1103 L1715 1094 L1718 1094 L1724 1093 L1734 1086 L1739 1076 L1752 1074 L1760 1076 L1767 1071 L1782 1066 L1785 1059 L1794 1054 L1798 1047 L1805 1040 L1810 1054 L1813 1064 L1823 1071 L1828 1079 L1834 1089 L1834 1091 L1846 1089 L1854 1083 L1865 1084 L1870 1084 L1885 1077 L1891 1075 L1902 1071 L1911 1064 L1915 1061 L1921 1060 L1929 1059 L1939 1057 L1950 1051 L1959 1040 L1962 1033 L1962 1027 L1964 1017 L1969 1007 L1971 999 L1985 987 L1992 981 L1993 991 L1991 1003 L1992 1011 L1992 1024 L1995 1034 L2002 1041 L2003 1050 L2002 1058 L2007 1063 L2011 1077 L2018 1088 L2027 1089 L2027 1097 L2038 1103 L2044 1107 L2051 1108 L2057 1120 L2060 1129 L2062 1140 L2063 1152 L2066 1161 L2070 1178 L2068 1184 L2064 1195 L2072 1197 L2079 1208 L2078 1221 L2088 1230 L2096 1224 L2107 1225 L2114 1227 L2127 1233 L2144 1245 L2154 1243 L2150 1253 L2149 1258 L2145 1267 L2139 1275 L2136 1287 L2136 1298 L2131 1307 L2125 1316 L2116 1314 L2105 1314 L2098 1321 L2088 1324 L2080 1329 L2076 1339 L2077 1345 L2076 1353 L2075 1362 L2069 1374 L2061 1381 L2057 1390 L2055 1405 L2053 1412 L2054 1417 L2054 1430 L2047 1443 L2041 1449 L2034 1454 L2035 1466 L2037 1479 L2036 1484 L2035 1491 L2034 1508 L2025 1518 L2012 1528 L2003 1529 L1995 1535 L1989 1541 L1988 1551 L1985 1558 L1972 1559 L1955 1570 L1946 1569 L1937 1579 L1931 1590 L1933 1600 L1928 1610 L1930 1618 L1924 1627 L1915 1631 L1913 1639 L1905 1650 L1902 1663 L1908 1669 L1905 1679 L1899 1684 L1897 1694 L1889 1696 L1878 1698 L1863 1701 L1862 1692 L1853 1693 L1843 1698 L1830 1689 L1815 1686 L1808 1684 L1805 1687 L1798 1693 L1786 1693 L1776 1694 L1770 1687 L1761 1689 L1752 1694 L1740 1694 L1736 1703 L1732 1713 L1733 1719 L1735 1725 L1722 1721 L1716 1718 L1709 1718 L1705 1708 L1692 1700 L1685 1690 L1682 1682 L1675 1675 L1671 1667 L1669 1661 L1661 1652 L1658 1645 L1654 1639 L1646 1633 L1642 1629 L1632 1625 L1623 1617 L1616 1612 L1615 1607 L1619 1592 L1620 1581 L1617 1573 L1614 1561 L1611 1550 L1607 1537 L1611 1537 L1610 1530 L1604 1523 L1601 1516 L1595 1499 L1590 1484 L1596 1478 L1593 1472 L1599 1464 L1597 1454 L1591 1445 L1589 1435 L1583 1429 L1579 1421 L1578 1408 L1578 1396 L1579 1387 L1574 1380 L1572 1378 L1574 1367 L1572 1352 L1568 1341 L1569 1341 L1568 1332 L1561 1320 L1558 1313 L1559 1304 L1562 1298 L1569 1291 L1575 1284 L1578 1275 L1584 1262 L1590 1255 L1601 1250 L1610 1244 L1608 1239 L1615 1228 L1622 1221 L1627 1217 L1632 1212 L1637 1201 L1645 1188 L1652 1184 L1651 1178 L1653 1174 L1659 1164 L1667 1155 L1671 1151 L1679 1140 L1683 1137 L1689 1127 L1687 1120 L1696 1111 Z"/>
<path fill="#a56b93" d="M1988 1858 L1993 1845 L2003 1840 L2004 1829 L2005 1821 L2012 1808 L2013 1793 L2007 1781 L2004 1775 L2005 1767 L2008 1757 L2004 1751 L2007 1741 L2008 1729 L2009 1718 L2007 1709 L2005 1699 L2006 1693 L2011 1687 L2021 1679 L2021 1675 L2026 1665 L2033 1663 L2041 1658 L2048 1650 L2059 1650 L2064 1650 L2074 1652 L2086 1656 L2095 1663 L2107 1663 L2114 1666 L2121 1671 L2130 1672 L2136 1679 L2149 1683 L2166 1689 L2169 1683 L2173 1673 L2174 1663 L2174 1656 L2182 1649 L2189 1638 L2190 1629 L2196 1621 L2199 1613 L2215 1613 L2225 1610 L2233 1606 L2242 1611 L2252 1618 L2258 1621 L2262 1625 L2268 1630 L2278 1643 L2288 1648 L2301 1647 L2308 1651 L2312 1659 L2313 1672 L2315 1682 L2320 1692 L2331 1700 L2334 1707 L2334 1716 L2318 1728 L2312 1729 L2306 1735 L2293 1737 L2286 1737 L2278 1741 L2275 1753 L2258 1757 L2247 1768 L2244 1774 L2236 1771 L2226 1778 L2222 1789 L2220 1797 L2215 1801 L2207 1807 L2198 1813 L2192 1823 L2177 1830 L2168 1832 L2178 1846 L2185 1856 L2185 1868 L2188 1875 L2201 1884 L2212 1890 L2216 1899 L2220 1907 L2216 1919 L2212 1930 L2205 1939 L2196 1951 L2194 1953 L2194 1958 L2194 1970 L2192 1978 L2186 1993 L2184 2006 L2188 2010 L2188 2017 L2186 2028 L2192 2029 L2200 2036 L2204 2037 L2215 2041 L2222 2046 L2223 2053 L2238 2056 L2249 2061 L2255 2070 L2262 2071 L2266 2078 L2269 2087 L2281 2096 L2282 2103 L2286 2112 L2291 2115 L2294 2130 L2294 2145 L2296 2151 L2299 2160 L2300 2168 L2299 2178 L2295 2183 L2293 2190 L2290 2200 L2295 2208 L2295 2215 L2292 2223 L2287 2232 L2276 2242 L2278 2252 L2282 2266 L2282 2275 L2284 2286 L2284 2295 L2280 2304 L2285 2317 L2290 2324 L2296 2323 L2297 2322 L2313 2321 L2325 2317 L2333 2308 L2337 2302 L2341 2296 L2347 2293 L2348 2279 L2357 2275 L2371 2271 L2385 2269 L2387 2275 L2393 2270 L2405 2266 L2401 2276 L2397 2287 L2387 2287 L2375 2293 L2362 2291 L2357 2296 L2348 2299 L2342 2301 L2335 2305 L2333 2317 L2330 2327 L2321 2337 L2319 2350 L2321 2362 L2322 2371 L2328 2382 L2325 2389 L2310 2393 L2296 2397 L2296 2380 L2288 2371 L2278 2363 L2274 2355 L2270 2347 L2258 2341 L2251 2338 L2242 2331 L2238 2330 L2231 2325 L2223 2313 L2218 2304 L2209 2297 L2196 2294 L2187 2286 L2185 2301 L2186 2310 L2175 2315 L2170 2325 L2172 2335 L2166 2343 L2160 2362 L2148 2355 L2142 2345 L2134 2336 L2129 2333 L2122 2319 L2110 2308 L2106 2305 L2100 2292 L2091 2282 L2080 2297 L2077 2302 L2070 2309 L2060 2315 L2051 2322 L2045 2330 L2045 2347 L2040 2356 L2034 2366 L2032 2373 L2021 2381 L2015 2390 L2006 2396 L1998 2400 L1991 2403 L1983 2402 L1973 2399 L1965 2398 L1953 2394 L1941 2387 L1936 2372 L1937 2361 L1936 2352 L1924 2346 L1912 2340 L1901 2341 L1892 2341 L1880 2337 L1872 2333 L1861 2332 L1852 2331 L1848 2327 L1839 2316 L1826 2311 L1816 2311 L1810 2307 L1802 2305 L1794 2299 L1787 2302 L1780 2309 L1772 2321 L1762 2331 L1756 2336 L1758 2345 L1749 2356 L1738 2365 L1737 2366 L1735 2372 L1729 2388 L1720 2397 L1720 2402 L1721 2409 L1713 2403 L1708 2400 L1703 2395 L1695 2380 L1692 2369 L1691 2362 L1689 2359 L1680 2353 L1670 2347 L1665 2337 L1665 2330 L1658 2323 L1645 2315 L1636 2308 L1630 2303 L1620 2302 L1613 2295 L1606 2284 L1593 2278 L1591 2277 L1585 2279 L1573 2276 L1559 2273 L1562 2267 L1558 2261 L1556 2252 L1556 2241 L1557 2227 L1551 2216 L1544 2204 L1547 2196 L1544 2189 L1543 2183 L1545 2176 L1542 2163 L1537 2152 L1549 2142 L1549 2131 L1547 2127 L1557 2114 L1563 2106 L1574 2106 L1582 2104 L1591 2103 L1600 2106 L1612 2103 L1626 2104 L1631 2105 L1639 2101 L1652 2096 L1658 2096 L1672 2089 L1683 2087 L1686 2082 L1694 2082 L1698 2079 L1706 2079 L1722 2081 L1734 2082 L1742 2069 L1743 2051 L1738 2043 L1734 2036 L1731 2032 L1735 2021 L1732 2011 L1725 2005 L1720 1996 L1714 1986 L1708 1976 L1705 1968 L1697 1957 L1693 1946 L1686 1936 L1685 1934 L1683 1934 L1671 1917 L1675 1907 L1680 1897 L1689 1888 L1692 1883 L1694 1878 L1697 1871 L1704 1860 L1711 1852 L1719 1851 L1726 1853 L1737 1842 L1744 1836 L1755 1843 L1765 1838 L1780 1833 L1790 1836 L1798 1838 L1809 1840 L1820 1842 L1832 1849 L1837 1863 L1838 1874 L1838 1880 L1843 1883 L1853 1895 L1856 1883 L1856 1876 L1867 1871 L1876 1866 L1888 1865 L1902 1855 L1915 1852 L1920 1860 L1925 1865 L1935 1860 L1942 1853 L1952 1858 L1965 1862 L1976 1865 Z"/>
<path fill="#9bb59c" d="M1240 1107 L1250 1098 L1252 1096 L1257 1092 L1265 1088 L1273 1081 L1280 1074 L1286 1066 L1294 1060 L1312 1062 L1323 1054 L1329 1054 L1338 1052 L1346 1047 L1353 1038 L1365 1033 L1379 1033 L1394 1034 L1405 1031 L1412 1023 L1418 1013 L1419 1009 L1425 998 L1439 1002 L1448 1002 L1459 1004 L1466 1017 L1469 1030 L1479 1036 L1494 1043 L1502 1053 L1503 1066 L1504 1074 L1495 1084 L1488 1094 L1496 1095 L1505 1095 L1515 1102 L1533 1108 L1541 1119 L1544 1124 L1550 1125 L1557 1139 L1569 1138 L1579 1139 L1587 1136 L1602 1141 L1610 1138 L1622 1134 L1631 1143 L1641 1149 L1657 1143 L1665 1142 L1667 1140 L1674 1136 L1680 1132 L1685 1122 L1686 1115 L1697 1108 L1707 1103 L1715 1112 L1719 1118 L1729 1128 L1738 1136 L1741 1141 L1736 1147 L1736 1158 L1735 1171 L1739 1184 L1742 1194 L1738 1203 L1737 1211 L1743 1217 L1744 1226 L1743 1233 L1747 1244 L1750 1251 L1754 1263 L1752 1269 L1755 1275 L1758 1280 L1765 1292 L1770 1307 L1774 1321 L1773 1329 L1774 1339 L1778 1347 L1783 1355 L1782 1361 L1777 1362 L1770 1375 L1762 1383 L1757 1388 L1750 1395 L1748 1400 L1751 1408 L1752 1420 L1752 1430 L1747 1441 L1746 1448 L1745 1454 L1739 1464 L1738 1474 L1745 1492 L1737 1489 L1726 1488 L1713 1490 L1696 1496 L1688 1503 L1681 1502 L1670 1503 L1670 1515 L1670 1530 L1668 1541 L1658 1543 L1645 1542 L1646 1549 L1633 1551 L1622 1552 L1617 1560 L1610 1572 L1601 1583 L1594 1593 L1596 1597 L1595 1605 L1591 1618 L1593 1626 L1590 1638 L1587 1649 L1587 1651 L1587 1671 L1594 1681 L1597 1683 L1601 1691 L1613 1700 L1619 1709 L1623 1722 L1614 1733 L1606 1748 L1606 1759 L1605 1771 L1591 1778 L1577 1782 L1566 1783 L1555 1789 L1552 1777 L1542 1772 L1530 1776 L1522 1772 L1518 1767 L1510 1767 L1501 1757 L1494 1763 L1482 1772 L1471 1773 L1455 1782 L1449 1775 L1442 1769 L1430 1765 L1417 1761 L1414 1763 L1410 1764 L1395 1767 L1384 1774 L1379 1783 L1373 1790 L1363 1792 L1357 1781 L1352 1771 L1350 1759 L1345 1754 L1337 1744 L1332 1741 L1325 1735 L1321 1728 L1316 1716 L1307 1706 L1300 1701 L1297 1697 L1293 1687 L1291 1677 L1286 1668 L1277 1658 L1270 1650 L1271 1645 L1265 1645 L1258 1634 L1252 1626 L1246 1619 L1235 1614 L1225 1608 L1216 1608 L1211 1601 L1200 1597 L1194 1586 L1186 1583 L1184 1573 L1186 1572 L1187 1563 L1188 1548 L1184 1535 L1182 1531 L1182 1522 L1181 1514 L1186 1504 L1191 1492 L1190 1483 L1184 1474 L1188 1467 L1190 1463 L1196 1454 L1205 1444 L1208 1433 L1218 1433 L1226 1433 L1236 1432 L1248 1431 L1260 1428 L1264 1422 L1271 1419 L1277 1406 L1284 1398 L1278 1389 L1270 1384 L1258 1374 L1255 1366 L1250 1359 L1251 1348 L1251 1330 L1251 1323 L1251 1322 L1251 1310 L1251 1302 L1252 1293 L1252 1280 L1249 1272 L1250 1261 L1251 1255 L1254 1249 L1249 1242 L1246 1232 L1249 1224 L1251 1211 L1250 1197 L1248 1185 L1246 1176 L1249 1168 L1249 1163 L1249 1155 L1248 1144 L1249 1126 L1240 1119 L1240 1107 Z"/>
<path fill="#fee396" d="M792 940 L800 936 L812 937 L821 937 L829 937 L840 941 L850 942 L862 941 L865 944 L873 948 L881 950 L895 950 L907 949 L919 951 L929 957 L936 958 L946 963 L951 953 L958 949 L965 946 L975 944 L982 944 L989 935 L996 935 L1007 941 L1016 943 L1021 949 L1033 952 L1042 958 L1050 964 L1062 971 L1066 976 L1072 983 L1071 994 L1068 1003 L1067 1010 L1067 1024 L1068 1032 L1074 1045 L1074 1058 L1072 1067 L1081 1074 L1086 1079 L1084 1093 L1086 1102 L1089 1111 L1090 1119 L1091 1128 L1094 1137 L1091 1143 L1090 1152 L1100 1161 L1106 1169 L1114 1169 L1121 1168 L1131 1168 L1138 1170 L1144 1163 L1145 1150 L1154 1144 L1160 1136 L1168 1127 L1174 1126 L1179 1117 L1185 1110 L1198 1110 L1205 1112 L1222 1116 L1230 1113 L1240 1107 L1240 1119 L1249 1126 L1248 1144 L1249 1155 L1249 1163 L1249 1168 L1246 1176 L1248 1185 L1250 1197 L1251 1211 L1249 1224 L1246 1232 L1249 1242 L1254 1249 L1251 1255 L1250 1261 L1249 1272 L1252 1280 L1252 1293 L1251 1302 L1251 1310 L1251 1322 L1251 1323 L1251 1330 L1251 1348 L1250 1359 L1255 1366 L1258 1374 L1270 1384 L1278 1389 L1284 1398 L1277 1406 L1271 1419 L1264 1422 L1260 1428 L1248 1431 L1236 1432 L1226 1433 L1218 1433 L1208 1433 L1205 1444 L1196 1454 L1190 1463 L1188 1467 L1184 1474 L1190 1483 L1191 1492 L1186 1504 L1181 1514 L1182 1523 L1183 1531 L1186 1537 L1189 1548 L1188 1565 L1187 1573 L1185 1574 L1187 1585 L1182 1597 L1182 1612 L1176 1616 L1167 1618 L1161 1616 L1148 1618 L1134 1626 L1124 1629 L1117 1636 L1104 1642 L1097 1644 L1088 1644 L1079 1648 L1065 1651 L1059 1648 L1047 1646 L1039 1641 L1032 1643 L1024 1642 L1007 1638 L998 1642 L995 1643 L984 1646 L972 1652 L959 1650 L954 1651 L961 1641 L964 1635 L967 1624 L973 1616 L975 1610 L971 1597 L972 1585 L979 1576 L980 1570 L987 1559 L993 1553 L989 1541 L983 1537 L976 1532 L968 1528 L958 1522 L949 1522 L936 1517 L926 1512 L916 1510 L907 1501 L907 1494 L904 1486 L897 1484 L889 1476 L880 1473 L867 1468 L858 1477 L856 1480 L851 1487 L843 1489 L830 1491 L819 1492 L809 1499 L795 1501 L787 1494 L782 1489 L771 1482 L769 1477 L762 1473 L754 1466 L747 1463 L735 1455 L723 1457 L710 1456 L710 1450 L703 1441 L697 1431 L695 1422 L690 1415 L690 1406 L687 1400 L677 1390 L680 1381 L681 1375 L688 1359 L676 1354 L665 1349 L658 1346 L647 1345 L642 1341 L625 1335 L621 1332 L617 1327 L611 1328 L601 1329 L588 1323 L578 1317 L568 1310 L556 1311 L549 1306 L539 1299 L543 1289 L544 1282 L555 1281 L563 1272 L567 1266 L578 1259 L591 1259 L602 1256 L603 1249 L610 1243 L608 1231 L607 1217 L614 1210 L616 1205 L606 1191 L602 1179 L602 1177 L603 1170 L602 1162 L604 1151 L602 1139 L602 1128 L612 1129 L621 1124 L628 1121 L636 1122 L642 1116 L651 1107 L661 1097 L666 1094 L675 1083 L684 1084 L690 1072 L697 1064 L706 1059 L711 1055 L716 1052 L726 1047 L739 1038 L748 1038 L745 1029 L747 1022 L755 1010 L752 1000 L749 994 L752 979 L751 967 L746 960 L753 960 L761 951 L771 943 L785 945 Z"/>
<path fill="#92c892" d="M723 646 L734 641 L744 637 L753 638 L765 634 L767 640 L769 647 L779 658 L785 670 L783 679 L784 684 L788 689 L790 701 L797 708 L809 713 L819 717 L822 728 L825 737 L830 744 L837 755 L844 759 L850 764 L858 773 L862 782 L866 784 L874 792 L882 800 L887 804 L897 813 L901 821 L898 829 L903 835 L909 842 L917 851 L917 857 L926 851 L926 841 L928 833 L929 825 L929 818 L933 811 L938 805 L943 794 L944 783 L947 773 L952 765 L955 754 L960 750 L964 742 L970 737 L982 728 L990 721 L993 715 L1001 709 L997 700 L997 690 L998 680 L997 669 L995 658 L994 650 L993 643 L1000 634 L998 621 L1001 613 L1004 603 L1014 593 L1022 584 L1027 573 L1036 567 L1041 563 L1048 564 L1065 566 L1070 557 L1069 541 L1072 531 L1082 526 L1089 522 L1092 519 L1105 517 L1116 516 L1122 511 L1129 507 L1139 505 L1150 506 L1161 497 L1163 505 L1162 515 L1173 532 L1175 540 L1182 549 L1190 560 L1193 565 L1195 571 L1195 577 L1195 589 L1207 591 L1217 589 L1223 596 L1225 607 L1230 618 L1231 626 L1236 638 L1243 640 L1250 648 L1251 660 L1258 669 L1262 677 L1263 684 L1266 691 L1274 699 L1273 711 L1276 725 L1287 724 L1290 735 L1298 744 L1303 748 L1310 752 L1317 754 L1324 755 L1330 766 L1330 779 L1325 790 L1321 795 L1317 806 L1315 815 L1327 823 L1335 827 L1347 841 L1354 853 L1363 857 L1373 862 L1379 865 L1383 870 L1387 873 L1393 881 L1402 888 L1417 893 L1430 899 L1436 905 L1447 909 L1444 919 L1433 927 L1424 926 L1416 934 L1416 950 L1416 961 L1422 973 L1424 983 L1427 992 L1432 997 L1423 1007 L1417 1014 L1417 1016 L1412 1025 L1405 1031 L1396 1034 L1381 1037 L1370 1035 L1358 1037 L1350 1045 L1345 1052 L1336 1057 L1336 1061 L1329 1065 L1321 1069 L1309 1074 L1298 1074 L1287 1077 L1279 1085 L1274 1096 L1267 1099 L1253 1103 L1252 1101 L1240 1107 L1230 1113 L1222 1116 L1205 1112 L1198 1110 L1185 1110 L1179 1117 L1174 1126 L1168 1127 L1160 1136 L1154 1144 L1145 1150 L1144 1163 L1138 1170 L1131 1168 L1121 1168 L1114 1169 L1106 1169 L1100 1161 L1090 1152 L1091 1143 L1094 1137 L1091 1128 L1090 1119 L1089 1111 L1086 1102 L1084 1093 L1086 1079 L1081 1074 L1072 1067 L1074 1058 L1074 1045 L1068 1032 L1067 1024 L1067 1010 L1068 1003 L1071 994 L1072 983 L1066 976 L1062 971 L1050 964 L1042 958 L1033 952 L1021 949 L1016 943 L1007 941 L996 935 L989 935 L982 944 L975 944 L965 946 L958 949 L951 953 L946 963 L936 958 L929 957 L919 951 L907 949 L895 950 L881 950 L873 948 L865 944 L862 941 L849 942 L839 940 L828 937 L817 935 L808 936 L795 939 L792 930 L786 918 L784 911 L783 907 L777 899 L776 888 L771 877 L764 872 L756 869 L753 860 L752 853 L748 841 L744 835 L742 827 L737 812 L731 803 L725 799 L719 787 L718 772 L715 764 L712 760 L714 752 L718 743 L716 736 L714 726 L714 713 L717 706 L715 696 L712 683 L714 675 L719 664 L720 654 Z"/>
<path fill="#c966f4" d="M561 56 L573 52 L584 52 L592 51 L600 50 L614 46 L615 55 L618 62 L617 72 L615 86 L618 94 L616 104 L616 110 L618 118 L618 130 L619 136 L619 147 L616 156 L621 165 L624 175 L623 189 L622 204 L624 212 L630 220 L625 227 L628 234 L632 245 L635 259 L635 266 L637 276 L638 280 L636 291 L643 301 L649 313 L647 325 L645 337 L647 345 L655 352 L662 362 L669 372 L674 377 L680 388 L681 389 L686 393 L696 398 L701 406 L710 415 L711 400 L711 389 L713 378 L711 368 L707 357 L709 351 L711 345 L715 335 L715 322 L714 313 L716 309 L716 300 L718 289 L724 283 L728 280 L731 278 L740 270 L749 263 L758 260 L759 250 L763 239 L766 234 L769 222 L776 216 L782 203 L785 197 L787 189 L803 187 L817 183 L821 182 L827 191 L828 203 L829 208 L833 215 L831 226 L835 233 L845 238 L853 241 L864 245 L871 249 L876 250 L888 257 L899 268 L911 274 L914 277 L916 287 L922 294 L929 300 L936 307 L943 314 L948 320 L954 331 L962 340 L969 338 L970 342 L977 355 L976 364 L983 378 L989 387 L983 391 L977 394 L964 401 L958 407 L952 416 L943 425 L944 433 L952 438 L954 445 L957 453 L966 460 L977 468 L974 476 L981 483 L986 494 L988 506 L1001 503 L1011 506 L1025 514 L1035 519 L1030 528 L1026 532 L1022 546 L1023 559 L1024 566 L1027 573 L1022 584 L1014 593 L1004 603 L1001 613 L998 621 L1000 634 L993 643 L994 650 L995 658 L997 669 L998 680 L997 690 L997 700 L1001 709 L993 715 L990 721 L982 728 L970 737 L964 742 L960 750 L955 754 L952 765 L947 773 L944 783 L943 794 L938 805 L933 811 L929 818 L929 825 L928 833 L926 841 L926 851 L917 857 L917 851 L909 842 L903 835 L898 829 L901 821 L897 813 L887 804 L882 800 L874 792 L866 784 L862 782 L858 773 L850 764 L844 759 L837 755 L830 744 L825 737 L822 728 L819 717 L809 713 L797 708 L790 701 L788 689 L784 684 L783 679 L785 670 L779 658 L769 647 L767 640 L765 634 L753 638 L744 637 L734 641 L723 646 L720 654 L719 664 L714 675 L712 683 L715 696 L717 706 L714 713 L714 726 L716 736 L718 743 L714 752 L712 760 L715 763 L719 770 L721 784 L724 794 L731 799 L736 810 L743 820 L745 833 L747 838 L743 837 L729 839 L721 840 L711 837 L701 834 L694 835 L690 827 L684 819 L681 807 L674 799 L668 807 L657 815 L655 822 L642 818 L629 820 L620 824 L614 827 L601 819 L587 818 L581 822 L572 814 L559 809 L562 805 L561 798 L565 787 L569 774 L570 767 L564 759 L570 749 L568 743 L568 732 L568 722 L569 711 L567 699 L562 691 L555 687 L552 676 L550 670 L548 661 L545 651 L542 642 L543 632 L543 625 L541 609 L540 599 L533 590 L538 585 L537 578 L532 570 L530 562 L528 552 L524 537 L517 531 L515 522 L514 511 L511 504 L504 496 L495 486 L495 477 L493 473 L489 467 L483 451 L478 446 L481 438 L478 425 L467 417 L467 412 L470 406 L475 398 L470 382 L467 373 L466 367 L467 361 L469 352 L473 340 L463 323 L464 314 L470 308 L465 301 L460 293 L453 287 L451 281 L445 276 L445 263 L445 254 L437 239 L440 231 L442 227 L446 217 L442 207 L442 196 L444 186 L447 174 L448 167 L449 158 L446 149 L447 141 L459 138 L474 130 L478 125 L487 117 L490 133 L496 148 L499 158 L499 170 L508 175 L513 186 L517 189 L526 192 L535 191 L541 189 L549 182 L550 171 L553 163 L558 150 L555 141 L550 126 L547 119 L551 115 L547 102 L542 97 L559 86 L566 83 L571 79 L565 68 L565 62 Z"/>
<path fill="#c8956f" d="M299 349 L314 346 L324 337 L326 346 L332 354 L337 362 L347 367 L347 381 L351 386 L352 395 L356 404 L365 409 L368 414 L369 424 L374 425 L384 423 L397 425 L404 421 L406 411 L416 406 L430 409 L441 406 L449 403 L458 404 L459 411 L467 417 L478 425 L481 438 L478 446 L483 451 L489 467 L493 473 L495 477 L495 486 L504 496 L511 504 L514 511 L515 522 L517 531 L524 537 L528 552 L530 562 L532 571 L537 580 L536 587 L536 594 L542 606 L540 619 L541 630 L538 642 L542 649 L547 660 L549 670 L552 675 L554 686 L561 691 L567 699 L569 711 L568 722 L568 732 L568 743 L570 749 L564 759 L570 767 L569 774 L565 787 L561 798 L562 805 L559 809 L573 808 L584 805 L595 804 L608 804 L618 808 L623 804 L629 806 L636 806 L648 803 L666 801 L674 799 L681 807 L684 819 L690 827 L694 835 L701 834 L711 837 L723 839 L734 835 L744 835 L748 841 L752 853 L753 860 L756 869 L764 872 L771 877 L775 888 L776 899 L779 907 L781 912 L783 918 L786 931 L792 940 L785 945 L771 943 L761 951 L753 960 L746 960 L751 967 L752 979 L749 994 L752 1000 L755 1010 L747 1022 L745 1029 L748 1038 L739 1038 L726 1047 L716 1052 L711 1055 L706 1059 L697 1064 L690 1072 L684 1084 L675 1083 L666 1094 L661 1097 L651 1107 L642 1116 L636 1122 L628 1121 L621 1124 L612 1129 L602 1128 L602 1139 L604 1151 L602 1162 L603 1170 L602 1177 L602 1179 L606 1191 L616 1205 L614 1210 L607 1217 L608 1231 L610 1243 L603 1249 L602 1256 L591 1259 L578 1259 L567 1266 L563 1272 L555 1281 L544 1282 L539 1286 L537 1297 L532 1307 L531 1314 L531 1324 L518 1321 L508 1324 L495 1328 L490 1315 L489 1308 L488 1304 L487 1287 L484 1274 L484 1269 L480 1260 L482 1249 L480 1238 L482 1231 L478 1224 L469 1217 L460 1209 L460 1200 L458 1186 L451 1174 L445 1167 L435 1156 L432 1148 L433 1137 L432 1125 L442 1129 L448 1126 L460 1115 L463 1109 L458 1104 L463 1090 L468 1076 L466 1067 L474 1063 L479 1053 L483 1043 L480 1034 L482 1022 L484 1015 L487 1006 L489 1001 L486 992 L487 984 L490 973 L492 965 L497 955 L495 945 L492 933 L490 924 L487 912 L491 908 L492 901 L494 892 L492 887 L491 874 L491 867 L493 852 L490 837 L480 835 L476 828 L474 814 L470 802 L470 795 L469 784 L468 779 L469 771 L464 761 L465 750 L464 742 L469 734 L475 724 L475 714 L474 712 L472 701 L477 693 L473 679 L464 665 L463 656 L465 652 L458 647 L459 636 L453 629 L440 617 L427 609 L423 602 L411 600 L402 594 L398 604 L390 612 L377 621 L369 631 L369 632 L352 640 L337 631 L335 628 L332 619 L328 612 L330 600 L328 595 L329 581 L323 570 L319 562 L317 557 L313 550 L305 540 L303 532 L301 525 L296 515 L292 511 L289 500 L278 490 L281 482 L279 473 L283 464 L280 457 L282 446 L286 434 L286 423 L281 414 L282 406 L290 397 L291 386 L297 381 L300 366 L297 356 Z"/>
<path fill="#e071f1" d="M261 1388 L263 1381 L262 1376 L270 1370 L267 1353 L270 1344 L279 1340 L282 1330 L283 1317 L291 1301 L301 1306 L309 1310 L313 1317 L326 1319 L334 1319 L344 1310 L354 1303 L362 1290 L374 1287 L373 1286 L379 1278 L384 1270 L394 1265 L399 1253 L405 1244 L405 1236 L407 1226 L418 1225 L425 1231 L435 1231 L453 1232 L466 1239 L475 1241 L482 1231 L480 1238 L482 1249 L480 1260 L484 1269 L484 1274 L487 1287 L488 1304 L489 1308 L490 1315 L495 1328 L508 1324 L518 1321 L531 1324 L531 1315 L534 1308 L540 1298 L547 1291 L551 1297 L560 1302 L566 1303 L571 1309 L578 1317 L588 1323 L601 1329 L611 1328 L617 1327 L621 1332 L625 1335 L642 1341 L647 1345 L658 1346 L665 1349 L676 1354 L688 1359 L681 1375 L680 1381 L677 1390 L687 1400 L690 1406 L690 1415 L695 1422 L697 1431 L703 1441 L710 1450 L710 1456 L723 1457 L735 1455 L747 1463 L754 1466 L762 1473 L769 1477 L771 1482 L782 1489 L787 1494 L795 1501 L809 1499 L819 1492 L830 1491 L843 1489 L851 1487 L856 1480 L858 1477 L867 1468 L880 1473 L889 1476 L897 1484 L904 1486 L907 1494 L907 1501 L916 1510 L926 1512 L926 1532 L918 1541 L909 1538 L899 1532 L890 1535 L881 1541 L870 1539 L861 1546 L860 1560 L856 1568 L855 1576 L856 1584 L851 1593 L845 1600 L842 1609 L834 1616 L824 1621 L819 1633 L817 1642 L814 1649 L806 1657 L808 1667 L811 1673 L802 1686 L797 1696 L793 1703 L790 1709 L785 1718 L782 1727 L774 1736 L767 1741 L763 1750 L758 1760 L749 1765 L744 1766 L737 1772 L726 1781 L718 1786 L712 1779 L707 1770 L705 1765 L697 1755 L688 1745 L683 1738 L674 1725 L669 1721 L660 1717 L654 1729 L647 1734 L649 1739 L639 1755 L628 1761 L623 1763 L616 1766 L602 1770 L594 1776 L586 1781 L576 1788 L562 1788 L552 1789 L551 1789 L547 1795 L533 1799 L524 1803 L513 1806 L506 1810 L494 1809 L484 1811 L479 1818 L472 1824 L472 1810 L472 1801 L476 1793 L471 1790 L467 1782 L465 1766 L468 1762 L468 1754 L465 1741 L460 1733 L464 1720 L470 1706 L465 1698 L462 1692 L460 1681 L463 1676 L454 1671 L442 1670 L427 1667 L413 1670 L408 1668 L403 1672 L396 1658 L390 1648 L382 1641 L378 1635 L381 1622 L385 1613 L384 1600 L390 1598 L393 1595 L399 1589 L409 1586 L402 1577 L395 1569 L385 1562 L375 1558 L364 1557 L353 1555 L347 1549 L334 1546 L332 1545 L322 1540 L312 1540 L301 1537 L303 1530 L302 1512 L304 1502 L304 1502 L310 1491 L306 1479 L299 1472 L293 1464 L292 1461 L287 1448 L278 1437 L266 1431 L259 1422 L264 1412 L261 1402 Z"/>
<path fill="#a1b3aa" d="M148 1437 L165 1430 L169 1429 L175 1429 L183 1423 L193 1418 L204 1420 L213 1416 L223 1414 L235 1409 L243 1412 L252 1405 L255 1412 L259 1422 L266 1431 L278 1437 L287 1448 L292 1461 L293 1464 L299 1472 L306 1479 L310 1491 L304 1502 L304 1502 L302 1512 L303 1530 L301 1537 L312 1540 L322 1540 L332 1545 L334 1546 L347 1549 L353 1555 L364 1557 L375 1558 L385 1562 L395 1569 L402 1577 L409 1586 L399 1589 L393 1595 L390 1598 L384 1600 L385 1613 L381 1622 L378 1635 L382 1641 L390 1648 L396 1658 L403 1672 L408 1668 L413 1670 L427 1667 L442 1670 L454 1671 L463 1676 L460 1681 L462 1692 L465 1698 L470 1706 L464 1720 L460 1733 L465 1741 L468 1754 L468 1762 L465 1765 L468 1780 L470 1789 L474 1793 L475 1798 L473 1806 L471 1817 L469 1829 L457 1832 L450 1839 L441 1840 L435 1840 L420 1830 L410 1828 L401 1827 L393 1828 L380 1829 L372 1827 L361 1830 L349 1831 L341 1833 L332 1833 L322 1834 L313 1829 L302 1829 L294 1836 L277 1838 L267 1838 L262 1834 L250 1831 L241 1838 L234 1841 L220 1845 L213 1846 L208 1845 L201 1845 L194 1850 L183 1857 L175 1861 L165 1864 L157 1870 L152 1874 L146 1881 L137 1890 L126 1897 L116 1902 L111 1914 L108 1921 L92 1918 L83 1917 L78 1910 L68 1905 L59 1897 L61 1888 L71 1886 L83 1881 L93 1872 L96 1866 L108 1858 L118 1848 L121 1846 L118 1842 L126 1830 L132 1818 L138 1811 L129 1805 L129 1791 L135 1781 L134 1773 L134 1764 L135 1758 L125 1755 L106 1745 L101 1741 L92 1733 L84 1730 L75 1724 L68 1717 L58 1717 L59 1712 L63 1699 L67 1689 L67 1678 L63 1669 L66 1666 L67 1657 L69 1648 L69 1635 L64 1618 L66 1608 L73 1607 L86 1602 L94 1593 L100 1590 L107 1591 L117 1581 L132 1577 L142 1574 L150 1567 L142 1560 L139 1557 L133 1547 L130 1534 L129 1526 L134 1515 L130 1503 L125 1491 L129 1483 L136 1475 L137 1468 L140 1458 L145 1448 Z"/>
<path fill="#5b6fe7" d="M926 1512 L938 1514 L949 1518 L960 1518 L972 1521 L981 1525 L986 1527 L989 1540 L997 1549 L996 1561 L989 1569 L984 1574 L983 1576 L977 1589 L975 1601 L975 1612 L973 1618 L965 1624 L962 1635 L971 1629 L980 1625 L987 1620 L999 1607 L1010 1609 L1020 1609 L1027 1606 L1043 1608 L1046 1613 L1051 1613 L1060 1617 L1071 1626 L1079 1636 L1082 1646 L1078 1660 L1094 1663 L1103 1668 L1103 1678 L1102 1686 L1106 1697 L1105 1708 L1107 1723 L1102 1736 L1102 1738 L1102 1745 L1099 1755 L1094 1769 L1103 1781 L1104 1790 L1102 1797 L1095 1810 L1090 1821 L1087 1826 L1087 1837 L1083 1847 L1070 1852 L1059 1856 L1059 1868 L1064 1878 L1059 1891 L1056 1900 L1051 1911 L1053 1917 L1052 1918 L1053 1932 L1050 1944 L1053 1950 L1058 1957 L1064 1968 L1070 1979 L1068 1987 L1070 1989 L1059 1991 L1050 1999 L1041 2006 L1027 2005 L1021 2007 L1014 2009 L1002 2010 L989 2015 L984 2028 L975 2038 L974 2044 L969 2054 L966 2069 L957 2078 L961 2087 L958 2094 L959 2109 L954 2116 L948 2126 L948 2141 L942 2134 L929 2133 L921 2129 L910 2127 L899 2127 L890 2130 L885 2130 L876 2135 L864 2135 L846 2143 L837 2147 L826 2149 L821 2153 L810 2154 L803 2157 L794 2156 L788 2165 L774 2168 L769 2175 L761 2190 L749 2193 L738 2188 L731 2187 L724 2183 L711 2184 L699 2186 L691 2186 L678 2187 L671 2191 L662 2192 L648 2194 L640 2190 L628 2191 L619 2183 L610 2180 L598 2180 L589 2179 L585 2176 L579 2171 L566 2166 L553 2159 L545 2156 L537 2150 L534 2146 L539 2139 L540 2131 L540 2113 L540 2098 L540 2090 L537 2083 L531 2074 L527 2062 L527 2050 L524 2042 L518 2034 L511 2027 L512 2019 L519 2013 L526 2006 L520 1998 L516 1984 L517 1973 L516 1965 L507 1959 L493 1954 L479 1947 L474 1944 L468 1936 L461 1934 L462 1924 L464 1911 L465 1901 L467 1899 L467 1888 L467 1881 L471 1875 L475 1867 L489 1856 L491 1847 L492 1839 L496 1830 L506 1826 L515 1821 L519 1818 L527 1809 L533 1799 L547 1795 L551 1789 L552 1789 L562 1788 L576 1788 L586 1781 L594 1776 L602 1770 L616 1766 L623 1763 L628 1761 L639 1755 L649 1739 L647 1734 L654 1729 L660 1717 L669 1721 L674 1725 L683 1738 L688 1745 L697 1755 L705 1765 L707 1770 L712 1779 L718 1786 L726 1781 L737 1772 L744 1766 L749 1765 L758 1760 L763 1750 L767 1741 L774 1736 L782 1727 L785 1718 L790 1709 L793 1703 L797 1696 L802 1686 L811 1673 L808 1667 L806 1657 L814 1649 L817 1642 L819 1633 L824 1621 L834 1616 L842 1609 L845 1600 L851 1593 L856 1584 L855 1576 L856 1568 L860 1560 L861 1546 L870 1539 L881 1541 L890 1535 L899 1532 L909 1538 L918 1541 L926 1532 Z"/>
<path fill="#7c5a88" d="M1071 1626 L1085 1623 L1091 1616 L1097 1612 L1108 1613 L1114 1613 L1121 1603 L1129 1602 L1142 1595 L1154 1589 L1162 1589 L1175 1583 L1185 1579 L1194 1585 L1199 1591 L1205 1599 L1214 1603 L1220 1606 L1227 1608 L1236 1614 L1246 1619 L1252 1626 L1258 1634 L1265 1645 L1271 1645 L1270 1650 L1277 1658 L1286 1668 L1291 1677 L1293 1687 L1297 1697 L1300 1701 L1310 1705 L1318 1714 L1322 1726 L1333 1734 L1338 1737 L1342 1739 L1346 1747 L1357 1752 L1359 1759 L1361 1772 L1373 1783 L1379 1789 L1382 1797 L1383 1806 L1391 1811 L1398 1818 L1400 1826 L1400 1837 L1408 1844 L1418 1845 L1424 1850 L1426 1860 L1431 1869 L1435 1879 L1440 1890 L1448 1897 L1450 1907 L1452 1916 L1449 1926 L1454 1936 L1467 1937 L1466 1945 L1468 1958 L1468 1966 L1466 1974 L1470 1979 L1480 1990 L1483 1998 L1491 2007 L1501 2019 L1507 2026 L1517 2033 L1525 2041 L1530 2042 L1534 2048 L1540 2064 L1537 2077 L1540 2078 L1549 2084 L1558 2093 L1563 2106 L1563 2118 L1558 2129 L1559 2139 L1559 2144 L1560 2151 L1561 2162 L1560 2170 L1559 2182 L1565 2186 L1564 2197 L1556 2205 L1557 2217 L1564 2231 L1566 2240 L1562 2250 L1563 2262 L1565 2266 L1559 2273 L1565 2266 L1563 2262 L1562 2250 L1566 2241 L1564 2233 L1558 2219 L1556 2206 L1563 2198 L1566 2188 L1560 2183 L1560 2173 L1560 2164 L1561 2153 L1558 2146 L1567 2151 L1579 2146 L1592 2149 L1604 2154 L1609 2156 L1616 2157 L1622 2165 L1625 2178 L1631 2184 L1639 2192 L1630 2200 L1618 2206 L1612 2208 L1602 2206 L1595 2210 L1588 2216 L1579 2223 L1576 2237 L1572 2243 L1563 2248 L1563 2261 L1565 2266 L1559 2273 L1573 2276 L1585 2279 L1591 2277 L1593 2278 L1606 2284 L1613 2295 L1620 2302 L1630 2303 L1636 2308 L1645 2315 L1658 2323 L1665 2330 L1665 2337 L1670 2347 L1680 2353 L1689 2359 L1691 2362 L1692 2369 L1695 2380 L1703 2395 L1708 2400 L1713 2403 L1721 2409 L1710 2415 L1692 2421 L1680 2426 L1674 2428 L1665 2431 L1664 2429 L1652 2428 L1640 2434 L1632 2436 L1620 2436 L1608 2436 L1601 2432 L1593 2431 L1586 2431 L1580 2434 L1573 2442 L1563 2437 L1547 2439 L1537 2438 L1525 2438 L1521 2444 L1513 2448 L1504 2445 L1493 2442 L1486 2449 L1473 2451 L1457 2442 L1450 2435 L1439 2433 L1437 2423 L1427 2413 L1431 2402 L1428 2399 L1427 2389 L1425 2380 L1422 2366 L1408 2372 L1396 2372 L1390 2372 L1381 2369 L1374 2362 L1363 2361 L1355 2363 L1345 2367 L1340 2366 L1331 2368 L1311 2360 L1304 2365 L1295 2365 L1289 2367 L1279 2372 L1272 2367 L1259 2367 L1252 2368 L1241 2372 L1233 2374 L1224 2377 L1206 2377 L1195 2378 L1188 2375 L1179 2383 L1170 2384 L1159 2390 L1149 2388 L1146 2395 L1142 2404 L1134 2409 L1126 2406 L1113 2408 L1092 2411 L1088 2413 L1084 2413 L1073 2412 L1068 2428 L1061 2437 L1056 2443 L1049 2452 L1049 2453 L1045 2460 L1035 2461 L1025 2464 L1011 2473 L1002 2473 L994 2474 L989 2476 L975 2478 L966 2480 L960 2489 L958 2498 L950 2499 L941 2509 L934 2519 L925 2527 L917 2531 L913 2539 L910 2545 L905 2552 L893 2558 L882 2559 L874 2558 L866 2556 L855 2552 L841 2553 L830 2550 L821 2547 L819 2539 L810 2533 L799 2524 L788 2527 L777 2525 L768 2525 L758 2529 L747 2530 L737 2531 L728 2532 L720 2527 L711 2532 L702 2532 L691 2525 L681 2520 L671 2520 L665 2522 L653 2512 L643 2510 L629 2512 L630 2502 L633 2494 L641 2490 L651 2476 L656 2468 L661 2457 L667 2451 L671 2443 L678 2430 L682 2422 L693 2413 L697 2407 L705 2395 L707 2386 L701 2380 L699 2374 L700 2364 L700 2356 L699 2349 L697 2335 L695 2322 L690 2315 L687 2307 L686 2296 L693 2292 L700 2283 L701 2270 L702 2262 L703 2255 L709 2248 L719 2247 L731 2249 L746 2249 L755 2250 L764 2253 L772 2247 L769 2238 L764 2230 L762 2215 L759 2205 L761 2202 L761 2195 L767 2182 L772 2170 L778 2167 L789 2164 L794 2156 L803 2157 L810 2154 L821 2153 L826 2149 L837 2147 L846 2143 L864 2135 L876 2135 L885 2130 L890 2130 L899 2127 L910 2127 L921 2129 L929 2133 L942 2134 L948 2141 L948 2126 L954 2116 L959 2109 L958 2094 L961 2087 L957 2078 L966 2069 L969 2054 L974 2044 L975 2038 L984 2028 L989 2015 L1002 2010 L1014 2009 L1021 2007 L1027 2005 L1041 2006 L1050 1999 L1059 1991 L1070 1989 L1068 1987 L1070 1979 L1064 1968 L1058 1957 L1053 1950 L1050 1944 L1053 1932 L1052 1918 L1053 1917 L1051 1911 L1056 1900 L1059 1891 L1064 1878 L1059 1868 L1059 1856 L1070 1852 L1083 1847 L1087 1837 L1087 1826 L1090 1821 L1095 1810 L1102 1797 L1104 1790 L1103 1781 L1094 1769 L1099 1755 L1102 1745 L1102 1738 L1102 1736 L1107 1723 L1105 1708 L1106 1697 L1102 1686 L1103 1678 L1103 1668 L1094 1663 L1078 1660 L1082 1646 L1079 1636 Z"/>
<path fill="#7a7b55" d="M910 2545 L913 2539 L917 2531 L925 2527 L934 2519 L941 2509 L950 2499 L958 2498 L960 2489 L966 2480 L975 2478 L989 2476 L994 2474 L1002 2473 L1011 2473 L1025 2464 L1035 2461 L1045 2460 L1049 2453 L1049 2452 L1056 2443 L1061 2437 L1068 2428 L1073 2412 L1084 2413 L1088 2413 L1092 2411 L1113 2408 L1126 2406 L1134 2409 L1142 2404 L1146 2395 L1149 2388 L1159 2390 L1170 2384 L1179 2383 L1188 2375 L1195 2378 L1206 2377 L1224 2377 L1233 2374 L1241 2372 L1252 2368 L1259 2367 L1272 2367 L1279 2372 L1289 2367 L1295 2365 L1304 2365 L1311 2360 L1331 2368 L1340 2366 L1345 2367 L1355 2363 L1363 2361 L1374 2362 L1381 2369 L1390 2372 L1396 2372 L1408 2372 L1422 2366 L1425 2380 L1427 2389 L1428 2399 L1431 2402 L1427 2413 L1437 2423 L1439 2433 L1450 2435 L1457 2442 L1473 2451 L1486 2449 L1493 2442 L1504 2445 L1495 2450 L1485 2463 L1479 2472 L1473 2473 L1469 2484 L1468 2492 L1467 2504 L1471 2512 L1472 2521 L1480 2536 L1483 2544 L1486 2551 L1486 2557 L1490 2570 L1496 2579 L1505 2586 L1514 2598 L1517 2606 L1518 2611 L1520 2611 L1525 2621 L1523 2630 L1525 2645 L1520 2652 L1523 2657 L1519 2664 L1521 2674 L1522 2685 L1527 2693 L1523 2702 L1513 2715 L1517 2723 L1521 2736 L1523 2745 L1524 2749 L1527 2758 L1529 2765 L1533 2778 L1530 2788 L1534 2797 L1539 2810 L1534 2817 L1535 2826 L1529 2834 L1523 2838 L1513 2844 L1509 2853 L1496 2851 L1486 2848 L1485 2844 L1475 2840 L1461 2835 L1449 2832 L1436 2834 L1430 2836 L1426 2835 L1411 2835 L1399 2833 L1395 2821 L1389 2817 L1377 2817 L1369 2814 L1358 2806 L1342 2801 L1344 2794 L1336 2791 L1332 2785 L1332 2781 L1332 2771 L1331 2758 L1334 2750 L1336 2738 L1334 2730 L1334 2719 L1333 2704 L1331 2693 L1327 2688 L1320 2680 L1313 2671 L1309 2659 L1307 2654 L1297 2659 L1285 2665 L1276 2665 L1270 2672 L1264 2676 L1258 2680 L1244 2684 L1238 2690 L1233 2694 L1224 2696 L1217 2704 L1213 2711 L1203 2714 L1195 2726 L1186 2730 L1181 2737 L1176 2744 L1164 2746 L1154 2754 L1146 2761 L1143 2758 L1133 2755 L1121 2751 L1107 2752 L1094 2749 L1089 2751 L1080 2741 L1071 2732 L1064 2734 L1053 2738 L1043 2740 L1026 2749 L1017 2753 L1007 2756 L999 2749 L989 2737 L983 2737 L976 2735 L970 2724 L964 2714 L959 2704 L951 2697 L942 2687 L933 2680 L925 2673 L921 2668 L916 2661 L919 2648 L911 2635 L908 2627 L902 2621 L907 2614 L907 2605 L910 2589 L907 2580 L910 2572 L911 2566 L908 2561 Z"/>
<path fill="#d660dd" d="M1362 1764 L1373 1759 L1390 1755 L1393 1751 L1396 1750 L1409 1743 L1421 1733 L1430 1742 L1434 1750 L1452 1749 L1462 1758 L1468 1750 L1478 1747 L1486 1745 L1497 1746 L1507 1753 L1516 1755 L1523 1758 L1529 1761 L1537 1763 L1547 1766 L1555 1776 L1565 1775 L1579 1775 L1590 1776 L1605 1771 L1606 1759 L1606 1748 L1614 1733 L1623 1722 L1619 1709 L1613 1700 L1601 1691 L1597 1683 L1594 1681 L1587 1671 L1587 1651 L1587 1649 L1590 1638 L1593 1626 L1591 1618 L1595 1605 L1596 1597 L1594 1593 L1601 1583 L1610 1572 L1617 1560 L1622 1552 L1633 1551 L1646 1549 L1645 1542 L1658 1543 L1668 1541 L1676 1544 L1690 1548 L1699 1550 L1707 1551 L1718 1553 L1719 1557 L1722 1571 L1725 1577 L1726 1586 L1724 1590 L1718 1598 L1720 1608 L1730 1616 L1728 1627 L1728 1641 L1719 1649 L1720 1661 L1715 1666 L1708 1666 L1702 1675 L1705 1688 L1701 1700 L1710 1710 L1711 1719 L1718 1717 L1722 1721 L1735 1725 L1733 1719 L1732 1713 L1736 1703 L1740 1694 L1752 1694 L1761 1689 L1770 1687 L1776 1694 L1786 1693 L1798 1693 L1805 1687 L1808 1684 L1815 1686 L1830 1689 L1843 1698 L1853 1693 L1862 1692 L1863 1701 L1878 1698 L1889 1696 L1897 1694 L1899 1684 L1905 1679 L1908 1669 L1902 1663 L1905 1650 L1913 1639 L1915 1631 L1924 1627 L1930 1618 L1928 1610 L1933 1600 L1931 1590 L1937 1579 L1943 1569 L1950 1566 L1960 1562 L1974 1556 L1974 1564 L1976 1579 L1974 1591 L1977 1600 L1980 1611 L1982 1618 L1986 1627 L1990 1637 L1990 1649 L1989 1659 L1988 1666 L1992 1681 L1999 1689 L2006 1693 L2005 1699 L2007 1709 L2009 1718 L2008 1729 L2007 1741 L2004 1751 L2008 1757 L2005 1767 L2004 1775 L2007 1781 L2013 1793 L2012 1808 L2005 1821 L2004 1829 L2003 1840 L1993 1845 L1988 1858 L1978 1860 L1967 1863 L1958 1860 L1950 1858 L1944 1859 L1935 1859 L1926 1858 L1915 1852 L1902 1855 L1888 1865 L1876 1866 L1867 1871 L1856 1876 L1856 1883 L1853 1895 L1843 1883 L1838 1880 L1838 1874 L1837 1863 L1832 1849 L1820 1842 L1809 1840 L1798 1838 L1790 1836 L1780 1833 L1765 1838 L1755 1843 L1744 1836 L1737 1842 L1726 1853 L1719 1851 L1711 1852 L1704 1861 L1699 1873 L1696 1881 L1696 1887 L1696 1896 L1687 1901 L1683 1919 L1690 1930 L1689 1933 L1691 1937 L1698 1945 L1704 1957 L1709 1968 L1712 1977 L1720 1986 L1722 1996 L1728 2006 L1734 2011 L1737 2018 L1733 2030 L1735 2036 L1738 2043 L1743 2051 L1742 2069 L1734 2082 L1722 2081 L1706 2079 L1698 2079 L1694 2082 L1686 2082 L1683 2087 L1672 2089 L1658 2096 L1652 2096 L1639 2101 L1631 2105 L1626 2104 L1612 2103 L1600 2106 L1591 2103 L1582 2104 L1574 2106 L1563 2106 L1558 2093 L1549 2084 L1540 2078 L1537 2077 L1540 2064 L1534 2048 L1530 2042 L1525 2041 L1517 2033 L1507 2026 L1501 2019 L1491 2007 L1483 1998 L1480 1990 L1470 1979 L1466 1974 L1468 1966 L1468 1958 L1466 1945 L1467 1937 L1454 1936 L1449 1926 L1452 1916 L1450 1907 L1448 1897 L1440 1890 L1435 1879 L1431 1869 L1426 1860 L1424 1850 L1418 1845 L1408 1844 L1400 1837 L1400 1826 L1399 1816 L1393 1810 L1383 1804 L1383 1791 L1381 1783 L1373 1775 Z"/>
<path fill="#52f6a8" d="M2168 1832 L2177 1830 L2192 1823 L2198 1813 L2207 1807 L2215 1801 L2220 1797 L2222 1789 L2226 1778 L2236 1771 L2244 1774 L2247 1768 L2258 1757 L2275 1753 L2278 1741 L2286 1737 L2293 1737 L2306 1735 L2312 1729 L2318 1728 L2334 1716 L2344 1714 L2352 1723 L2360 1731 L2365 1734 L2371 1738 L2385 1742 L2394 1737 L2403 1735 L2407 1735 L2418 1734 L2431 1737 L2439 1732 L2450 1732 L2463 1726 L2478 1720 L2484 1725 L2491 1720 L2497 1718 L2507 1717 L2514 1719 L2526 1724 L2542 1735 L2547 1738 L2553 1746 L2564 1752 L2565 1740 L2568 1737 L2570 1724 L2583 1721 L2589 1720 L2597 1714 L2604 1714 L2615 1713 L2628 1717 L2645 1715 L2653 1720 L2663 1717 L2671 1717 L2674 1721 L2684 1725 L2694 1730 L2706 1735 L2721 1733 L2728 1737 L2733 1743 L2734 1753 L2732 1760 L2730 1775 L2730 1781 L2741 1788 L2747 1796 L2747 1801 L2749 1814 L2740 1823 L2736 1831 L2749 1834 L2760 1835 L2776 1836 L2783 1841 L2792 1844 L2802 1850 L2812 1849 L2823 1849 L2830 1857 L2839 1865 L2844 1853 L2849 1839 L2853 1830 L2869 1826 L2885 1827 L2889 1832 L2890 1850 L2903 1850 L2908 1853 L2916 1856 L2933 1862 L2942 1865 L2946 1862 L2958 1854 L2974 1849 L2981 1851 L2981 1841 L2984 1832 L2998 1830 L3007 1829 L3021 1833 L3032 1835 L3031 1840 L3039 1849 L3045 1856 L3052 1864 L3051 1870 L3058 1880 L3066 1895 L3075 1902 L3073 1908 L3082 1915 L3085 1922 L3081 1933 L3077 1945 L3076 1957 L3075 1965 L3070 1973 L3068 1981 L3063 1998 L3067 2007 L3073 2017 L3062 2028 L3058 2039 L3056 2047 L3047 2056 L3030 2060 L3023 2061 L3012 2054 L3005 2045 L2995 2043 L2987 2038 L2978 2037 L2969 2034 L2958 2042 L2949 2046 L2938 2051 L2935 2054 L2930 2060 L2924 2071 L2915 2080 L2909 2088 L2907 2097 L2907 2113 L2894 2116 L2886 2116 L2879 2120 L2873 2132 L2871 2136 L2866 2141 L2852 2139 L2842 2135 L2840 2130 L2834 2120 L2825 2113 L2816 2108 L2809 2101 L2802 2096 L2789 2095 L2775 2088 L2765 2082 L2763 2080 L2760 2071 L2752 2053 L2750 2042 L2752 2030 L2738 2027 L2725 2028 L2713 2034 L2708 2034 L2705 2035 L2687 2035 L2677 2036 L2673 2045 L2666 2051 L2654 2060 L2645 2063 L2641 2076 L2636 2089 L2636 2099 L2636 2109 L2631 2116 L2628 2122 L2631 2138 L2633 2151 L2622 2150 L2611 2158 L2606 2167 L2602 2177 L2604 2189 L2611 2196 L2609 2210 L2604 2220 L2611 2224 L2618 2231 L2605 2239 L2595 2245 L2584 2248 L2580 2258 L2569 2262 L2562 2267 L2560 2275 L2552 2269 L2536 2260 L2539 2243 L2529 2234 L2522 2239 L2518 2246 L2514 2255 L2505 2267 L2500 2275 L2495 2279 L2490 2289 L2480 2296 L2470 2300 L2464 2311 L2458 2319 L2450 2316 L2441 2310 L2430 2305 L2422 2307 L2420 2298 L2412 2285 L2408 2273 L2405 2266 L2393 2270 L2387 2275 L2385 2269 L2371 2271 L2357 2275 L2348 2279 L2347 2293 L2341 2296 L2337 2302 L2333 2308 L2325 2317 L2313 2321 L2297 2322 L2296 2323 L2290 2324 L2285 2317 L2280 2304 L2284 2295 L2284 2286 L2282 2275 L2282 2266 L2278 2252 L2276 2242 L2287 2232 L2292 2223 L2295 2215 L2295 2208 L2290 2200 L2293 2190 L2295 2183 L2299 2178 L2300 2168 L2299 2160 L2296 2151 L2294 2145 L2294 2130 L2291 2115 L2286 2112 L2282 2103 L2281 2096 L2269 2087 L2266 2078 L2262 2071 L2255 2070 L2249 2061 L2238 2056 L2223 2053 L2222 2046 L2215 2041 L2204 2037 L2200 2036 L2192 2029 L2186 2028 L2188 2017 L2188 2010 L2184 2006 L2186 1993 L2192 1978 L2194 1970 L2194 1958 L2194 1953 L2196 1951 L2205 1939 L2212 1930 L2216 1919 L2220 1907 L2216 1899 L2212 1890 L2201 1884 L2188 1875 L2185 1868 L2185 1856 L2178 1846 Z"/>
<path fill="#6c4de6" d="M2263 236 L2271 243 L2276 255 L2288 253 L2304 245 L2316 245 L2321 245 L2334 246 L2342 251 L2353 246 L2363 247 L2374 247 L2384 247 L2384 250 L2396 247 L2410 241 L2420 244 L2430 250 L2437 249 L2446 249 L2461 254 L2471 263 L2456 265 L2446 270 L2435 275 L2426 277 L2422 286 L2414 291 L2413 301 L2411 306 L2411 316 L2412 327 L2405 335 L2413 346 L2420 355 L2428 360 L2437 366 L2448 371 L2460 372 L2471 379 L2480 383 L2477 392 L2478 403 L2477 411 L2465 420 L2458 425 L2454 435 L2448 446 L2443 455 L2439 463 L2450 471 L2451 478 L2456 486 L2463 494 L2469 502 L2479 505 L2492 500 L2504 498 L2510 500 L2520 503 L2534 507 L2546 512 L2553 505 L2560 503 L2570 512 L2578 510 L2592 511 L2605 508 L2617 504 L2617 500 L2620 493 L2625 483 L2634 480 L2643 467 L2651 459 L2654 453 L2659 453 L2670 449 L2683 441 L2688 435 L2696 443 L2704 446 L2709 453 L2721 451 L2727 461 L2729 477 L2746 481 L2759 480 L2760 491 L2761 503 L2761 513 L2768 526 L2765 534 L2766 543 L2768 548 L2768 554 L2772 567 L2770 574 L2775 584 L2776 598 L2779 607 L2773 616 L2761 628 L2759 632 L2754 635 L2748 645 L2751 659 L2748 669 L2745 680 L2745 687 L2741 681 L2733 680 L2723 677 L2707 678 L2697 684 L2689 685 L2681 690 L2673 688 L2661 697 L2650 703 L2641 710 L2631 714 L2619 718 L2613 715 L2599 711 L2590 707 L2579 707 L2569 710 L2565 709 L2553 708 L2540 713 L2530 712 L2521 711 L2512 705 L2504 695 L2497 695 L2493 693 L2492 688 L2480 678 L2472 669 L2468 660 L2459 663 L2454 665 L2444 665 L2435 674 L2427 674 L2419 679 L2416 691 L2406 700 L2398 707 L2395 720 L2389 728 L2384 725 L2370 722 L2354 710 L2350 706 L2342 704 L2339 697 L2331 690 L2319 684 L2311 683 L2305 679 L2297 691 L2291 696 L2283 706 L2279 711 L2278 714 L2273 724 L2267 730 L2261 742 L2256 748 L2242 749 L2234 758 L2227 763 L2225 764 L2220 772 L2209 778 L2196 793 L2195 801 L2200 804 L2185 817 L2177 817 L2170 818 L2166 820 L2150 821 L2136 821 L2127 821 L2119 827 L2113 839 L2113 847 L2106 862 L2104 870 L2109 879 L2109 894 L2109 904 L2103 911 L2091 912 L2081 918 L2068 926 L2062 928 L2053 935 L2047 944 L2044 956 L2031 958 L2019 955 L2005 962 L1994 968 L1987 970 L1992 957 L1989 947 L1978 946 L1975 934 L1975 919 L1971 908 L1969 906 L1967 895 L1961 883 L1957 876 L1959 871 L1958 862 L1949 853 L1945 849 L1936 836 L1932 825 L1931 820 L1936 813 L1935 800 L1936 787 L1936 777 L1931 768 L1930 760 L1934 749 L1939 741 L1940 732 L1939 718 L1940 706 L1942 697 L1947 693 L1957 687 L1960 683 L1969 678 L1973 683 L1983 675 L1995 672 L2010 672 L2024 672 L2026 661 L2024 648 L2031 637 L2034 635 L2048 628 L2057 623 L2058 619 L2058 615 L2072 601 L2079 595 L2086 587 L2093 577 L2099 569 L2103 558 L2112 555 L2120 551 L2124 541 L2131 535 L2144 525 L2152 520 L2150 513 L2146 501 L2143 486 L2146 476 L2148 471 L2138 464 L2127 461 L2121 460 L2124 452 L2124 440 L2126 428 L2136 417 L2145 409 L2152 402 L2162 396 L2173 396 L2180 397 L2190 388 L2201 381 L2207 379 L2214 375 L2221 373 L2230 371 L2244 367 L2253 363 L2261 359 L2262 352 L2259 345 L2259 338 L2265 331 L2269 322 L2272 306 L2272 294 L2258 288 L2245 283 L2248 278 L2250 275 L2256 264 L2264 252 Z"/>
</g><g fill="none" stroke="#1c1c1c" stroke-width="6" stroke-linejoin="round">
<path d="M495 486 L508 482 L523 480 L534 480 L545 482 L553 477 L563 469 L570 467 L577 475 L590 477 L601 481 L602 487 L602 498 L608 506 L613 517 L618 528 L619 534 L621 550 L618 565 L620 571 L619 579 L616 587 L625 598 L631 608 L642 612 L650 623 L661 618 L666 615 L678 603 L684 600 L688 599 L704 596 L707 599 L714 606 L727 604 L738 601 L746 603 L751 609 L760 618 L765 634"/>
<path d="M710 415 L711 425 L713 433 L712 440 L715 450 L718 463 L714 473 L720 483 L725 494 L724 493 L727 503 L724 517 L725 528 L726 535 L729 541 L731 552 L733 562 L736 575 L735 580 L742 590 L747 600 L746 603"/>
<path d="M466 652 L484 646 L496 642 L505 641 L515 642 L519 648 L531 649"/>
<path d="M495 1328 L494 1338 L490 1344 L492 1351 L497 1360 L493 1371 L489 1385 L485 1392 L487 1399 L486 1409 L495 1424 L489 1433 L482 1441 L487 1453 L490 1465 L483 1467 L479 1477 L482 1492 L479 1500 L481 1509 L485 1518 L489 1533 L492 1538 L494 1548 L492 1554 L487 1564 L493 1572"/>
<path d="M559 809 L566 821 L567 832 L569 839 L571 845 L570 850 L570 861 L570 868 L572 876 L568 890 L568 903 L574 911 L577 922 L575 928 L575 936 L574 949 L571 957 L578 965 L581 973 L582 986 L586 997 L584 1002 L579 1010 L574 1023 L575 1034 L578 1042 L582 1051 L583 1061 L585 1070 L583 1072 L580 1079 L572 1094 L570 1104 L572 1109 L571 1114 L577 1125 L576 1133 L575 1148 L573 1157 L570 1169 L573 1173 L579 1180 L581 1188 L579 1196 L581 1210 L581 1222 L579 1231 L576 1239 L579 1248"/>
<path d="M486 991 L504 996 L512 997 L525 998 L533 1000 L532 1001 L542 999 L553 996 L566 1000 L575 1001"/>
<path d="M1065 566 L1065 575 L1071 580 L1069 588 L1069 594 L1071 599 L1071 609 L1077 617 L1084 630 L1086 636 L1088 643 L1094 655 L1102 669 L1105 677 L1106 682 L1107 688 L1106 702 L1107 712 L1106 723 L1107 730 L1106 740 L1107 748 L1099 760 L1101 766 L1095 778 L1089 798 L1082 803 L1089 806 L1093 818 L1102 822 L1114 829 L1126 832 L1131 833 L1138 836 L1145 837 L1157 832 L1163 837 L1163 845 L1166 855 L1173 863 L1179 874 L1176 883 L1179 891 L1183 900 L1192 903 L1206 906 L1215 913 L1224 921 L1224 925 L1225 937 L1236 947 L1248 955 L1251 963 L1262 950 L1269 951 L1277 947 L1288 946 L1290 933 L1294 921 L1298 907 L1301 896 L1306 898 L1313 893 L1323 889 L1330 881 L1338 871 L1341 861 L1352 856 L1363 857"/>
<path d="M1049 762 L1064 760 L1073 762 L1085 766 L1083 776 L1076 794 L1076 801 L1078 802 L1078 814 L1078 828 L1074 836 L1070 840 L1075 852 L1079 867 L1075 877 L1074 884 L1075 893 L1075 904 L1070 914 L1064 921 L1063 928 L1058 938 L1067 951 L1065 963 L1062 971"/>
<path d="M1049 762 L1047 774 L1038 780 L1033 788 L1032 796 L1024 804 L1019 813 L1014 820 L1010 832 L1004 837 L1002 840 L993 846 L987 861 L981 872 L985 877 L981 886 L978 902 L970 904 L963 911 L960 922 L961 938 L956 942 L954 951"/>
<path d="M1268 962 L1273 968 L1282 976 L1287 985 L1292 995 L1301 1002 L1307 1010 L1312 1017 L1317 1019 L1321 1030 L1331 1043"/>
<path d="M748 1038 L747 1049 L743 1056 L745 1069 L744 1084 L747 1089 L745 1096 L756 1099 L766 1099 L780 1100"/>
<path d="M780 1100 L778 1113 L777 1121 L774 1126 L771 1135 L774 1151 L774 1161 L776 1170 L778 1174 L782 1181 L786 1192 L782 1199 L787 1209 L796 1222 L804 1226 L811 1233 L823 1240 L836 1246 L840 1234 L844 1225 L852 1219 L861 1215 L869 1220 L873 1217 L885 1221 L903 1226 L907 1222 L913 1219 L920 1209 L931 1208 L936 1198 L936 1192 L945 1189 L958 1185 L963 1176 L970 1175 L980 1161 L974 1151 L976 1146 L972 1140 L969 1126 L964 1119 L963 1106 L959 1097 L958 1091 L955 1086 L950 1077 L948 1067 L946 1048 L944 1039 L945 1031 L945 1023 L945 1012 L945 1000 L944 990 L944 979 L944 970 L946 963"/>
<path d="M945 1031 L935 1029 L929 1038 L922 1049 L915 1054 L906 1056 L897 1065 L892 1068 L892 1077 L889 1090 L885 1097 L872 1090 L863 1093 L852 1094 L845 1097 L832 1097 L819 1098 L809 1094 L804 1096 L792 1098 L780 1100"/>
<path d="M980 1161 L992 1163 L1000 1165 L1008 1166 L1016 1175 L1027 1182 L1039 1186 L1053 1186 L1065 1181 L1072 1180 L1078 1178 L1090 1178"/>
<path d="M539 1299 L547 1295 L554 1287 L564 1285 L565 1278 L567 1268 L578 1259 L591 1259 L602 1256 L603 1249 L610 1243 L624 1241 L640 1231 L647 1231 L651 1241 L657 1247 L671 1250 L685 1251 L695 1259 L706 1267 L715 1268 L728 1271 L730 1271"/>
<path d="M730 1271 L728 1276 L720 1287 L712 1295 L709 1303 L700 1311 L697 1324 L688 1331 L690 1340 L690 1347 L688 1359"/>
<path d="M915 1215 L919 1227 L922 1232 L928 1244 L930 1251 L932 1251 L938 1258 L948 1268 L954 1277 L954 1288 L958 1300 L967 1305 L964 1306 L955 1317 L949 1323 L941 1331 L930 1334 L929 1345 L929 1355 L932 1368 L924 1379 L921 1388 L922 1397 L925 1404 L923 1412 L922 1423 L914 1432 L909 1436 L901 1442 L885 1453 L876 1441 L871 1434 L866 1424 L867 1413 L866 1403 L864 1394 L859 1391 L859 1381 L857 1370 L855 1362 L852 1348 L849 1335 L844 1323 L835 1323 L829 1316 L813 1314 L801 1308 L797 1307 L797 1305 L796 1287 L794 1273 L802 1267 L808 1263 L822 1268 L830 1269 L834 1256 L840 1247 L842 1232"/>
<path d="M1021 1186 L1022 1195 L1027 1198 L1027 1209 L1026 1219 L1024 1230 L1031 1241 L1039 1252 L1040 1262 L1043 1271 L1049 1282 L1051 1289 L1057 1301 L1063 1312 L1069 1321 L1070 1328 L1073 1339 L1082 1351 L1085 1353 L1091 1361 L1097 1365 L1108 1374 L1112 1377 L1123 1385 L1126 1393 L1137 1393 L1144 1405 L1148 1413 L1159 1420 L1159 1429 L1163 1438 L1176 1441 L1190 1442 L1196 1454"/>
<path d="M1069 1321 L1078 1322 L1090 1318 L1101 1316 L1113 1319 L1134 1318 L1138 1312 L1146 1303 L1153 1294 L1163 1292 L1158 1282 L1155 1274 L1160 1265 L1160 1253 L1159 1246 L1159 1236 L1162 1229 L1173 1227 L1178 1220 L1189 1219 L1201 1223 L1211 1229 L1217 1232 L1226 1231 L1237 1234"/>
<path d="M930 1334 L942 1337 L949 1338 L956 1339 L969 1342 L980 1346 L991 1344 L1008 1348 L1015 1353 L1020 1362 L1031 1361 L1042 1368 L1044 1381 L1050 1390 L1050 1400 L1049 1406 L1051 1416 L1054 1425 L1050 1438 L1052 1447 L1061 1457 L1071 1459 L1082 1463 L1087 1466 L1096 1473 L1107 1475 L1116 1482 L1120 1482 L1132 1490 L1134 1499 L1139 1510 L1140 1517 L1137 1529 L1135 1542 L1140 1551 L1143 1555 L1143 1560 L1150 1570 L1148 1582"/>
<path d="M1061 1457 L1057 1463 L1047 1470 L1037 1480 L1033 1489 L1031 1489 L1024 1493 L1018 1503 L1018 1514 L1011 1526 L1001 1535 L993 1543"/>
<path d="M1254 1271 L1264 1270 L1272 1265 L1282 1266 L1297 1268 L1306 1268 L1310 1276 L1316 1282 L1323 1288 L1334 1295 L1343 1297 L1353 1297 L1365 1303 L1374 1311 L1380 1309 L1392 1309 L1403 1316 L1413 1317 L1420 1313 L1425 1313 L1432 1309 L1441 1314 L1457 1318 L1466 1321 L1479 1311 L1488 1297 L1495 1291 L1503 1291 L1510 1291 L1520 1293 L1524 1301 L1534 1303 L1545 1310 L1557 1316"/>
<path d="M1390 1139 L1393 1147 L1395 1164 L1396 1173 L1399 1183 L1408 1185 L1418 1199 L1429 1207 L1431 1213 L1439 1214 L1449 1214 L1461 1217 L1471 1224 L1484 1226 L1495 1218 L1503 1212 L1514 1209 L1523 1209 L1531 1209 L1545 1204 L1553 1194 L1563 1192"/>
<path d="M1495 1218 L1492 1227 L1492 1240 L1502 1251 L1497 1257 L1492 1266 L1484 1276 L1484 1283 L1495 1291"/>
<path d="M1284 1398 L1292 1398 L1303 1406 L1310 1413 L1318 1410 L1327 1403 L1339 1403 L1355 1400 L1358 1402 L1366 1405 L1376 1401 L1383 1410 L1387 1418 L1391 1433 L1391 1441 L1390 1454 L1391 1464 L1391 1474 L1388 1481 L1385 1494 L1385 1503 L1382 1511 L1376 1519 L1375 1527 L1376 1533 L1365 1534 L1353 1535 L1345 1533 L1341 1523 L1328 1517 L1326 1511 L1322 1498 L1313 1497 L1305 1503 L1290 1497 L1275 1488 L1266 1487 L1261 1485 L1254 1493 L1247 1500 L1238 1503 L1241 1510 L1238 1520 L1236 1524 L1239 1534 L1236 1546 L1239 1556 L1244 1573 L1240 1577 L1237 1582 L1237 1595 L1240 1611 L1246 1619"/>
<path d="M1383 1376 L1390 1381 L1395 1391 L1393 1400 L1396 1411 L1404 1424 L1409 1426 L1412 1435 L1421 1443 L1428 1446 L1435 1445 L1445 1447 L1450 1456 L1461 1459 L1478 1462 L1489 1465 L1498 1468 L1505 1471 L1509 1473 L1514 1478 L1514 1488 L1516 1496 L1526 1504 L1537 1512 L1539 1523 L1537 1533 L1541 1540 L1547 1549 L1541 1561 L1535 1566 L1528 1574 L1524 1589 L1517 1587 L1509 1585 L1501 1585 L1496 1589 L1483 1593 L1471 1597 L1465 1598 L1458 1602 L1450 1601 L1444 1601 L1433 1610 L1430 1614 L1422 1625 L1424 1638 L1429 1646 L1438 1649 L1427 1654 L1415 1662 L1409 1663 L1398 1673 L1389 1683 L1381 1684 L1370 1684 L1358 1684 L1351 1680 L1343 1678 L1334 1683 L1316 1690 L1304 1697 L1297 1697"/>
<path d="M1505 1471 L1503 1459 L1503 1445 L1503 1434 L1507 1429 L1511 1418 L1513 1405 L1511 1398 L1511 1391 L1511 1384 L1515 1374 L1527 1369 L1534 1366 L1541 1363 L1547 1358 L1559 1360"/>
<path d="M58 1717 L70 1720 L76 1720 L89 1717 L100 1724 L110 1730 L120 1728 L131 1723 L136 1712 L146 1705 L154 1702 L166 1702 L173 1696 L183 1685 L189 1681 L199 1678 L208 1671 L212 1667 L217 1667 L222 1662 L229 1656 L241 1653 L253 1648 L253 1658 L260 1664 L262 1669 L269 1674 L280 1672 L286 1675 L299 1683 L310 1685 L325 1686 L326 1674 L329 1678 L339 1671 L348 1662 L356 1653 L365 1648 L370 1640 L378 1635"/>
<path d="M301 1537 L297 1541 L295 1555 L292 1571 L288 1580 L284 1592 L283 1601 L281 1606 L286 1614 L284 1622 L274 1630 L273 1635 L274 1648 L271 1660 L271 1669 L269 1674 L268 1684 L264 1691 L263 1703 L260 1710 L262 1722 L257 1731 L257 1744 L253 1756 L245 1758 L241 1763 L245 1776 L243 1782 L238 1800 L234 1811 L238 1812"/>
<path d="M131 1810 L141 1808 L152 1808 L157 1807 L167 1809 L181 1808 L189 1811 L199 1814 L211 1814 L222 1815 L238 1811 L245 1811 L254 1816 L265 1822 L272 1832 L279 1835"/>
<path d="M484 1458 L481 1468 L478 1473 L476 1484 L481 1495 L478 1503 L481 1512 L485 1520 L488 1534 L492 1539 L494 1549 L491 1555 L486 1564 L493 1572 L501 1575 L512 1579 L519 1576 L533 1575 L542 1577 L548 1587 L551 1578 L554 1568 L560 1555 L568 1544 L574 1538 L583 1534 L591 1526 L600 1524 L617 1531 L622 1534 L621 1534 L625 1540 L632 1551 L643 1559 L653 1563 L660 1572 L664 1580 L667 1588 L674 1598 L675 1602 L677 1614 L678 1625 L684 1637 L688 1646 L691 1657 L689 1665 L680 1675 L680 1692 L682 1702 L681 1704 L678 1713 L674 1725"/>
<path d="M384 1600 L391 1602 L398 1599 L407 1589 L422 1591 L436 1590 L447 1589 L457 1586 L465 1588 L472 1587 L484 1580 L495 1577 L503 1581 L512 1584 L519 1580 L533 1578 L542 1578 L548 1587"/>
<path d="M548 1587 L552 1593 L558 1595 L565 1603 L571 1615 L578 1625 L586 1632 L588 1638 L590 1642 L588 1650 L586 1663 L586 1678 L577 1683 L573 1693 L573 1703 L580 1715 L574 1721 L585 1730 L583 1735 L589 1740 L603 1746 L607 1753 L615 1757"/>
<path d="M691 1657 L693 1646 L697 1632 L703 1627 L708 1624 L708 1614 L710 1599 L711 1592 L718 1583 L718 1572 L716 1562 L716 1560 L720 1553 L724 1541 L728 1525 L729 1517 L726 1511 L733 1504 L736 1503 L739 1491 L747 1480 L754 1466"/>
<path d="M601 1786 L602 1795 L605 1804 L608 1817 L608 1826 L612 1840 L611 1847 L610 1849 L615 1862 L621 1873 L619 1881 L617 1888 L627 1902 L635 1917 L630 1920 L632 1921 L633 1932 L644 1935 L654 1939 L662 1945 L669 1948 L680 1950 L693 1946 L708 1944 L710 1938 L714 1939 L722 1934 L734 1924 L741 1921 L750 1922 L759 1918 L769 1913 L781 1903 L785 1901 L787 1897 L799 1891 L812 1891 L816 1886 L826 1882 L837 1878 L841 1864 L848 1866 L859 1865 L871 1868 L887 1871 L873 1880 L872 1892 L875 1897 L875 1904 L871 1918 L868 1928 L864 1941 L864 1952 L859 1957 L849 1963 L841 1971 L836 1983 L835 1989 L833 2002 L829 2009 L819 2011 L815 2016 L810 2026 L800 2035 L792 2043 L792 2047 L796 2057 L797 2063 L801 2068 L807 2077 L816 2084 L824 2096 L814 2107 L812 2113 L814 2120 L806 2139 L803 2151"/>
<path d="M512 1996 L522 1996 L534 1993 L551 1999 L564 2000 L570 1998 L579 1997 L585 1992 L592 1991 L608 1991 L615 1991 L625 1984 L635 1983 L646 1978 L651 1974 L661 1972 L667 1964 L673 1963 L681 1963 L693 1951 L708 1944"/>
<path d="M544 2049 L549 2047 L557 2049 L566 2049 L576 2049 L591 2049 L601 2052 L608 2064 L616 2070 L622 2076 L628 2077 L636 2084 L645 2089 L661 2082 L671 2080 L683 2078 L693 2079 L698 2079 L709 2079 L726 2082 L730 2088 L736 2094 L748 2091 L761 2094 L769 2090 L780 2093 L794 2093 L801 2092 L808 2092 L824 2096"/>
<path d="M754 1768 L766 1762 L775 1767 L784 1769 L794 1772 L807 1776 L817 1774 L830 1775 L836 1778 L846 1786 L852 1791 L863 1780 L871 1777 L886 1775 L896 1773 L906 1773 L908 1773 L915 1769 L918 1762 L926 1755 L933 1747 L934 1731 L934 1720 L941 1715 L947 1712 L955 1702 L960 1699 L965 1693 L975 1685 L977 1679 L987 1663 L995 1654"/>
<path d="M834 1815 L838 1823 L842 1833 L848 1840 L860 1843 L867 1854 L870 1858 L876 1849 L886 1847 L893 1842 L898 1834 L904 1827 L912 1825 L918 1820 L924 1810 L930 1802 L941 1795 L950 1791 L955 1799 L957 1813 L968 1825 L969 1832 L970 1842 L980 1844 L984 1856 L986 1866 L996 1872 L1004 1877 L1011 1877 L1020 1885 L1029 1885 L1045 1886 L1050 1890 L1059 1891"/>
<path d="M878 1936 L877 1949 L888 1955 L888 1969 L894 1979 L903 1984 L902 1992 L902 1999 L909 2007 L913 2014 L919 2019 L928 2025 L942 2027 L955 2031 L964 2032 L967 2037 L975 2038"/>
<path d="M1059 1891 L1067 1887 L1079 1879 L1089 1879 L1097 1871 L1104 1867 L1118 1867 L1126 1860 L1128 1855 L1137 1850 L1139 1842 L1144 1836 L1148 1829 L1151 1817 L1155 1810 L1159 1804 L1166 1792 L1171 1777 L1172 1772 L1176 1761 L1178 1754 L1187 1745 L1195 1756 L1202 1761 L1205 1770 L1205 1780 L1211 1791 L1213 1801 L1213 1805 L1222 1807 L1225 1815 L1234 1828 L1239 1840 L1245 1848 L1252 1852 L1260 1862 L1269 1851 L1278 1845 L1286 1837 L1294 1828 L1303 1825 L1309 1823 L1315 1815 L1320 1807 L1331 1795 L1334 1791 L1338 1787"/>
<path d="M1064 1924 L1070 1926 L1072 1931 L1083 1925 L1098 1918 L1106 1918 L1120 1918 L1126 1920 L1134 1921 L1141 1915 L1143 1911 L1155 1918 L1170 1923 L1177 1931 L1188 1932 L1197 1938 L1206 1942 L1215 1948 L1218 1945 L1229 1952 L1237 1958 L1240 1965 L1246 1969 L1249 1973 L1255 1981 L1263 1993 L1270 2000 L1277 2009 L1284 2018 L1282 2028 L1287 2036 L1289 2045 L1293 2054 L1299 2062 L1303 2071 L1304 2082 L1303 2094 L1303 2102 L1305 2113 L1305 2117 L1304 2117 L1297 2125 L1284 2130 L1274 2134 L1269 2138 L1266 2140 L1257 2147 L1247 2152 L1240 2159 L1232 2167 L1221 2172 L1213 2172 L1207 2172 L1199 2178 L1192 2188 L1184 2196 L1182 2201 L1176 2205 L1172 2213 L1166 2224 L1160 2235 L1156 2240 L1150 2248 L1145 2251 L1144 2259 L1140 2260 L1132 2274 L1120 2274 L1108 2275 L1096 2272 L1091 2270 L1086 2276 L1065 2270 L1053 2268 L1045 2267 L1046 2257 L1042 2246 L1033 2237 L1028 2226 L1021 2214 L1015 2203 L1015 2199 L1010 2195 L1001 2188 L995 2179 L988 2175 L981 2168 L979 2158 L973 2153 L962 2154 L952 2148 L948 2141"/>
<path d="M1284 2018 L1284 2013 L1293 2009 L1303 2019 L1316 2020 L1330 2019 L1342 2015 L1355 2015 L1359 2018 L1360 2011 L1357 2001 L1354 1990 L1355 1979 L1351 1967 L1351 1955 L1344 1954 L1345 1948 L1349 1935 L1348 1922 L1348 1919 L1347 1910 L1344 1894 L1354 1895 L1361 1891 L1373 1887 L1376 1885"/>
<path d="M1359 2018 L1362 2023 L1363 2030 L1364 2042 L1360 2053 L1363 2064 L1362 2073 L1358 2084 L1357 2096 L1357 2097 L1358 2104 L1364 2115 L1368 2126 L1368 2137 L1369 2147 L1375 2154 L1387 2152 L1394 2165 L1399 2171 L1405 2177 L1413 2179 L1422 2187 L1434 2195 L1431 2202 L1428 2209 L1439 2219 L1449 2227 L1448 2240 L1448 2250 L1447 2257 L1450 2263 L1453 2269 L1451 2278 L1454 2287 L1463 2296 L1468 2308 L1468 2320 L1464 2320 L1451 2322 L1439 2325 L1427 2328 L1417 2334 L1413 2324 L1405 2321 L1401 2316 L1393 2306 L1383 2298 L1377 2295 L1379 2294 L1368 2288 L1359 2279"/>
<path d="M1192 2188 L1192 2200 L1198 2210 L1203 2219 L1201 2224 L1203 2232 L1210 2237 L1217 2241 L1226 2243 L1234 2243 L1243 2245 L1251 2245 L1262 2248 L1270 2255 L1281 2256 L1291 2259 L1302 2261 L1306 2265 L1311 2271 L1322 2274 L1334 2277 L1339 2283 L1351 2287 L1364 2288 L1370 2293 L1374 2298 L1379 2304 L1387 2311 L1396 2318 L1405 2328 L1413 2338 L1411 2345 L1414 2353 L1418 2362 L1423 2374 L1426 2383 L1426 2393 L1430 2401 L1428 2403 L1427 2414 L1437 2424 L1439 2433"/>
<path d="M1045 2267 L1050 2275 L1053 2283 L1051 2295 L1057 2308 L1056 2317 L1055 2323 L1065 2332 L1070 2338 L1073 2345 L1077 2351 L1085 2361 L1090 2369 L1092 2374 L1103 2387 L1109 2397 L1111 2404 L1125 2405"/>
<path d="M772 2247 L783 2251 L790 2250 L800 2258 L806 2263 L821 2266 L819 2276 L817 2281 L815 2294 L819 2309 L821 2316 L828 2326 L832 2338 L825 2349 L817 2351 L814 2366 L815 2383 L816 2388 L816 2396 L815 2410 L816 2415 L818 2428 L816 2436 L808 2442 L809 2455 L814 2466 L814 2472 L817 2474 L813 2482 L803 2499 L802 2507 L799 2517 L799 2524"/>
<path d="M705 2395 L715 2396 L722 2397 L729 2403 L741 2405 L752 2404 L764 2406 L771 2403 L776 2399 L782 2394 L789 2390 L802 2386 L815 2385 L819 2376"/>
<path d="M1128 2407 L1130 2418 L1130 2425 L1133 2437 L1133 2451 L1137 2460 L1136 2471 L1136 2479 L1135 2491 L1136 2497 L1144 2503 L1142 2512 L1140 2522 L1142 2528 L1144 2539 L1151 2543 L1158 2551 L1151 2563 L1147 2572 L1141 2580 L1135 2588 L1135 2600 L1138 2610 L1136 2622 L1129 2629 L1128 2635 L1127 2643 L1128 2651 L1124 2665 L1120 2671 L1111 2678 L1111 2689 L1104 2697 L1099 2700 L1091 2713 L1090 2723 L1084 2729 L1078 2733"/>
<path d="M1439 2433 L1432 2434 L1426 2436 L1420 2442 L1411 2448 L1402 2452 L1393 2452 L1382 2456 L1374 2466 L1369 2474 L1360 2476 L1352 2480 L1345 2488 L1335 2489 L1332 2497 L1324 2507 L1313 2512 L1304 2517 L1310 2521 L1321 2528 L1327 2540 L1335 2547 L1345 2556 L1349 2566 L1348 2571 L1356 2575 L1355 2585 L1350 2593 L1345 2600 L1342 2610 L1337 2621 L1331 2632 L1322 2639 L1316 2650 L1307 2654"/>
<path d="M2342 341 L2344 330 L2349 320 L2349 314 L2343 307 L2346 298 L2345 289 L2352 283 L2368 277 L2376 274 L2385 266 L2389 265 L2395 262 L2407 251"/>
<path d="M2272 294 L2279 306 L2282 313 L2292 321 L2301 327 L2306 339 L2321 345 L2329 349 L2323 358 L2323 367 L2330 373 L2332 381 L2331 387 L2329 397 L2328 409 L2334 414 L2339 423 L2339 431 L2334 440 L2338 449 L2345 461 L2346 468 L2338 483 L2343 490 L2348 497 L2349 508 L2338 517 L2334 522 L2333 531 L2332 536 L2326 545 L2318 553 L2314 561 L2310 575 L2306 583 L2307 589 L2304 599 L2293 606 L2284 611 L2275 619 L2271 631 L2268 641 L2266 655 L2270 657 L2276 662 L2283 673 L2291 682"/>
<path d="M2209 458 L2216 455 L2221 449 L2233 439 L2241 436 L2247 434 L2256 431 L2269 429 L2277 425 L2290 423 L2295 421 L2301 415 L2311 408 L2315 399"/>
<path d="M2220 455 L2222 466 L2226 476 L2226 490 L2224 503 L2227 513 L2235 520 L2230 534 L2226 542 L2229 549 L2236 556 L2236 569 L2238 583 L2240 596"/>
<path d="M2102 631 L2114 629 L2118 625 L2127 625 L2140 623 L2151 624 L2160 619 L2169 622 L2178 616 L2187 617 L2199 614 L2205 611 L2213 607 L2222 606 L2233 610 L2239 603 L2243 608 L2255 606 L2266 605 L2282 602 L2293 600 L2304 599"/>
<path d="M2044 680 L2055 678 L2064 683 L2069 690 L2078 691 L2084 692 L2088 693 L2097 692 L2106 685 L2107 677 L2106 672 L2110 664 L2117 650 L2120 640"/>
<path d="M2131 659 L2134 669 L2135 679 L2134 687 L2131 695 L2134 707 L2132 721 L2140 734 L2154 735 L2162 741 L2167 746 L2175 751 L2181 758 L2187 760"/>
<path d="M2055 703 L2058 714 L2059 723 L2059 732 L2057 739 L2055 750 L2051 761 L2061 772 L2061 781 L2066 784 L2074 789 L2083 804 L2092 817 L2097 819 L2102 825 L2113 825 L2119 827"/>
<path d="M2353 521 L2367 524 L2379 527 L2388 522 L2400 522 L2411 523 L2419 531 L2428 528 L2434 521 L2444 515 L2452 509 L2461 506 L2468 507"/>
<path d="M2433 594 L2441 589 L2450 584 L2459 580 L2469 579 L2478 578 L2485 579 L2494 579 L2511 572 L2525 563 L2528 559 L2532 559 L2543 550 L2556 541 L2562 536 L2566 544 L2576 547 L2590 554 L2597 549 L2604 545 L2622 550 L2631 561 L2633 565 L2644 567 L2656 569 L2664 567 L2673 567 L2681 569 L2699 564 L2710 562 L2711 554 L2720 548 L2731 548 L2736 546 L2746 542 L2755 539 L2766 543"/>
<path d="M2433 594 L2437 601 L2440 606 L2448 613 L2451 624 L2451 635 L2456 644 L2463 652 L2468 660"/>
<path d="M2184 1146 L2181 1140 L2182 1132 L2184 1123 L2181 1115 L2184 1105 L2184 1094 L2190 1088 L2187 1077 L2199 1061 L2199 1051 L2201 1053 L2200 1044 L2206 1031 L2203 1022 L2209 1023 L2216 1017 L2225 1010 L2234 1012 L2249 1018 L2259 1013 L2271 1005 L2274 995 L2280 987"/>
<path d="M2159 1156 L2171 1163 L2185 1173 L2189 1172 L2198 1172 L2208 1173 L2217 1173 L2224 1176 L2237 1180 L2247 1179 L2257 1175 L2266 1173 L2275 1168 L2284 1166 L2295 1164 L2305 1162 L2316 1162 L2328 1165 L2343 1167 L2351 1174 L2361 1181 L2368 1185 L2371 1184 L2379 1189 L2389 1196 L2398 1197 L2409 1195 L2417 1194 L2428 1194 L2440 1192 L2454 1185 L2459 1189 L2469 1189"/>
<path d="M2136 1298 L2150 1305 L2156 1314 L2171 1313 L2180 1318 L2185 1316 L2196 1317 L2206 1317 L2216 1321 L2230 1328 L2239 1325 L2253 1325 L2258 1327 L2264 1330 L2277 1333 L2287 1338 L2299 1341 L2305 1344 L2316 1350 L2326 1358 L2323 1365 L2323 1370 L2324 1381 L2323 1393 L2327 1396"/>
<path d="M2398 1197 L2395 1205 L2389 1210 L2383 1216 L2379 1225 L2379 1230 L2376 1240 L2370 1248 L2366 1256 L2362 1268 L2360 1277 L2358 1288 L2358 1298 L2350 1303 L2345 1311 L2347 1321 L2350 1330 L2346 1344 L2347 1359"/>
<path d="M1902 1071 L1906 1080 L1909 1086 L1908 1089 L1917 1107 L1922 1120 L1922 1129 L1921 1135 L1924 1143 L1928 1149 L1937 1158 L1944 1168 L1936 1173 L1936 1180 L1931 1190 L1922 1199 L1918 1210 L1912 1220 L1908 1228 L1903 1236 L1899 1239 L1897 1247 L1895 1259 L1889 1272 L1882 1281 L1876 1289 L1870 1297 L1863 1304 L1866 1314 L1871 1324 L1874 1339 L1880 1346 L1882 1356"/>
<path d="M1944 1168 L1953 1172 L1957 1180 L1961 1188 L1971 1188 L1979 1195 L1989 1204 L1995 1210 L2003 1216 L2010 1220 L2021 1230 L2024 1230 L2028 1231 L2038 1239 L2046 1244 L2055 1237 L2067 1225 L2078 1221"/>
<path d="M1759 1384 L1768 1382 L1776 1377 L1789 1378 L1802 1377 L1807 1375 L1814 1377 L1824 1364 L1836 1359 L1854 1358 L1863 1358 L1874 1359 L1883 1362 L1893 1363 L1901 1362 L1910 1364 L1918 1360 L1930 1358 L1943 1359 L1953 1361 L1961 1361 L1971 1363 L1973 1374 L1985 1378 L1995 1375 L2005 1378 L2013 1381 L2025 1388 L2036 1387 L2040 1390 L2047 1396 L2059 1406"/>
<path d="M1943 1359 L1945 1369 L1946 1379 L1943 1388 L1937 1400 L1938 1408 L1948 1417 L1951 1424 L1949 1436 L1950 1446 L1953 1459"/>
<path d="M2196 1317 L2206 1329 L2205 1338 L2202 1341 L2205 1353 L2212 1367 L2215 1376 L2210 1382 L2217 1391 L2221 1402 L2223 1411 L2215 1417 L2212 1426 L2213 1439 L2212 1446 L2210 1452"/>
<path d="M2438 1383 L2435 1393 L2443 1407 L2448 1414 L2455 1414 L2451 1427 L2452 1437 L2454 1446 L2464 1451"/>
<path d="M1622 1134 L1631 1143 L1641 1149 L1657 1143 L1665 1142 L1657 1158 L1652 1175 L1656 1180 L1658 1192 L1652 1200 L1643 1210 L1636 1216 L1629 1217 L1623 1221 L1616 1230 L1611 1244 L1608 1251 L1600 1259 L1604 1267 L1607 1279 L1613 1290 L1617 1298 L1616 1310 L1611 1321 L1614 1330 L1612 1339 L1612 1344 L1616 1355 L1621 1369 L1622 1378 L1626 1390 L1637 1392 L1654 1392 L1662 1392 L1670 1385 L1677 1381 L1690 1377 L1701 1371 L1708 1363 L1716 1355 L1726 1351 L1730 1356 L1736 1362 L1736 1370 L1743 1384 L1750 1395"/>
<path d="M1681 1502 L1687 1505 L1695 1501 L1708 1494 L1719 1497 L1731 1491 L1738 1494 L1745 1503 L1754 1498 L1756 1492 L1764 1488 L1775 1496 L1786 1501 L1792 1508 L1801 1509 L1817 1513 L1826 1514 L1832 1516 L1834 1520 L1843 1528 L1848 1540 L1857 1550 L1862 1556 L1863 1565 L1865 1575 L1872 1584 L1870 1592 L1865 1601 L1859 1614 L1849 1616 L1841 1613 L1831 1612 L1816 1611 L1806 1605 L1796 1603 L1787 1614 L1777 1618 L1765 1613 L1754 1615 L1753 1620 L1743 1626 L1733 1633 L1719 1639"/>
<path d="M1857 1550 L1869 1548 L1881 1542 L1888 1537 L1896 1535 L1906 1529 L1916 1519 L1931 1519 L1944 1512 L1952 1505 L1964 1499 L1974 1498 L1988 1494 L1986 1485 L1986 1472 L1995 1467 L2005 1463"/>
<path d="M1974 1556 L1984 1555 L1988 1550 L1992 1544 L2000 1540 L2011 1538 L2019 1533 L2034 1528 L2044 1527 L2049 1529 L2063 1523 L2075 1519 L2082 1524 L2092 1521 L2099 1515 L2111 1505 L2113 1503 L2121 1498 L2130 1495 L2140 1500 L2151 1503 L2152 1505 L2155 1511 L2164 1521 L2176 1531 L2176 1544 L2180 1550 L2188 1553 L2189 1561 L2194 1576 L2194 1589 L2193 1595 L2196 1603"/>
<path d="M2130 1495 L2143 1494 L2149 1495 L2150 1489 L2163 1486 L2175 1484 L2184 1483 L2193 1481 L2200 1478 L2207 1476 L2219 1473 L2235 1469 L2238 1475 L2245 1485 L2260 1486 L2273 1485 L2279 1481 L2287 1486 L2292 1502 L2304 1508 L2315 1514 L2324 1520"/>
<path d="M2223 1605 L2230 1598 L2238 1595 L2244 1591 L2257 1585 L2262 1580 L2268 1571 L2278 1563 L2283 1558 L2291 1552 L2300 1540 L2309 1536 L2317 1537 L2325 1532 L2335 1527 L2342 1522 L2354 1525 L2361 1527 L2376 1531 L2386 1531 L2386 1542 L2384 1551 L2384 1559 L2385 1561 L2393 1568 L2402 1581 L2408 1591 L2418 1591 L2429 1591 L2436 1597 L2438 1604 L2443 1613 L2447 1619 L2452 1632 L2459 1644 L2458 1656 L2468 1656 L2480 1649 L2491 1659"/>
<path d="M1555 1789 L1570 1792 L1581 1797 L1593 1796 L1603 1795 L1610 1801 L1612 1811 L1622 1816 L1634 1818 L1645 1819 L1649 1827 L1655 1828 L1662 1833 L1670 1843 L1679 1844 L1686 1838 L1698 1843 L1711 1852"/>
<path d="M1585 1685 L1594 1685 L1600 1689 L1609 1697 L1624 1700 L1628 1698 L1639 1691 L1649 1686 L1651 1685 L1658 1690 L1668 1693 L1672 1697 L1681 1708 L1690 1704 L1701 1700 L1716 1696 L1721 1688"/>
<path d="M1723 1732 L1734 1743 L1733 1753 L1738 1760 L1740 1763 L1745 1778 L1755 1787 L1768 1792 L1773 1791 L1778 1795 L1789 1797 L1798 1803 L1802 1812 L1811 1823 L1814 1826 L1820 1835 L1831 1844 L1834 1858 L1839 1866 L1841 1874 L1843 1880 L1848 1883"/>
<path d="M1723 1718 L1731 1711 L1740 1704 L1753 1698 L1766 1692 L1772 1696 L1780 1698 L1793 1696 L1804 1689 L1807 1686 L1814 1685 L1831 1694 L1843 1697 L1853 1693 L1861 1700 L1852 1703 L1850 1716 L1841 1724 L1835 1731 L1832 1742 L1830 1753 L1831 1763 L1833 1781 L1836 1790"/>
<path d="M1836 1790 L1852 1788 L1862 1787 L1868 1787 L1877 1785 L1884 1784 L1899 1791 L1912 1793 L1916 1794 L1923 1800 L1929 1805 L1925 1818 L1922 1822 L1917 1831 L1923 1844 L1929 1859 L1931 1870"/>
<path d="M1861 1700 L1864 1699 L1877 1699 L1889 1696 L1897 1693 L1910 1686 L1925 1690 L1937 1690 L1934 1702 L1933 1708 L1932 1717 L1934 1727 L1934 1737 L1936 1749 L1941 1758 L1945 1768 L1947 1782 L1941 1788 L1928 1793 L1919 1796"/>
<path d="M1678 1926 L1681 1937 L1677 1939 L1679 1947 L1685 1956 L1688 1962 L1699 1968 L1705 1973 L1710 1980 L1719 1989 L1725 1999 L1730 2007 L1735 2014 L1733 2026 L1731 2036 L1735 2040 L1739 2050 L1742 2076"/>
<path d="M1703 1862 L1712 1856 L1720 1849 L1723 1846 L1732 1846 L1742 1838 L1750 1844 L1759 1851 L1770 1848 L1777 1844 L1786 1845 L1802 1845 L1813 1847 L1825 1852 L1833 1861 L1842 1864 L1841 1871 L1843 1880 L1846 1883 L1854 1895 L1862 1908 L1860 1920 L1856 1931 L1848 1935 L1847 1940 L1846 1952 L1852 1965 L1855 1979 L1862 1990 L1856 1998 L1852 2004 L1846 2007 L1840 2012 L1833 2018 L1832 2031 L1835 2041 L1835 2049 L1837 2059 L1843 2064 L1841 2076 L1841 2082 L1844 2095 L1843 2107"/>
<path d="M1921 1871 L1932 1867 L1936 1867 L1947 1864 L1956 1863 L1967 1864 L1976 1862 L1988 1858 L1990 1865 L1996 1872 L2005 1877 L2010 1888 L2012 1899 L2004 1903 L2008 1916 L2000 1925 L1999 1937 L2004 1951 L2009 1960 L2012 1967 L2009 1981 L2014 1991 L2019 2000 L2018 2014 L2014 2022 L2016 2027 L2015 2036 L2012 2044 L2005 2053 L1995 2059 L1983 2060 L1974 2070 L1966 2074 L1962 2075 L1950 2075 L1945 2083 L1945 2101 L1944 2112 L1941 2120 L1936 2124 L1935 2131 L1933 2140"/>
<path d="M2004 1689 L2008 1696 L2007 1704 L2010 1714 L2009 1724 L2010 1734 L2007 1744 L2013 1756 L2009 1760 L2011 1767 L2010 1775 L2016 1784 L2023 1796 L2021 1808 L2017 1822 L2019 1830 L2022 1835 L2026 1846 L2029 1857 L2029 1867 L2029 1874 L2033 1886 L2037 1892 L2035 1896 L2036 1903 L2041 1919 L2044 1930 L2055 1926 L2063 1924 L2069 1924 L2084 1925 L2092 1923 L2102 1916 L2110 1913 L2115 1911 L2125 1910 L2138 1913 L2147 1911 L2159 1909 L2167 1910 L2177 1914 L2186 1907 L2191 1897 L2190 1888 L2188 1875 L2185 1868 L2185 1856 L2178 1846 L2168 1832 L2176 1826 L2183 1818 L2188 1810 L2191 1797 L2195 1788 L2199 1780 L2202 1773 L2207 1764 L2214 1762 L2224 1764 L2232 1764 L2239 1773 L2251 1779"/>
<path d="M1999 1937 L2004 1951 L2007 1961 L2009 1971 L2007 1983 L2011 1992 L2013 1998 L2010 2013 L2022 2014 L2031 2007 L2042 2011 L2048 2020 L2060 2026 L2067 2026 L2078 2027 L2085 2027 L2099 2031 L2110 2030 L2120 2029 L2132 2029 L2143 2035 L2151 2039 L2158 2040 L2170 2041 L2180 2037 L2190 2037 L2196 2041 L2204 2043 L2214 2043"/>
<path d="M2152 1683 L2163 1694 L2165 1705 L2169 1712 L2182 1721 L2188 1729 L2185 1741 L2187 1755 L2181 1759 L2194 1764 L2203 1765 L2211 1762 L2221 1765 L2230 1764 L2238 1772 L2251 1779"/>
<path d="M2055 2058 L2061 2062 L2067 2063 L2074 2072 L2080 2080 L2093 2088 L2082 2095 L2072 2107 L2069 2117 L2068 2121 L2059 2131 L2058 2138 L2055 2144"/>
<path d="M2195 2092 L2200 2097 L2203 2103 L2206 2118 L2207 2129 L2210 2128 L2223 2129 L2235 2132 L2245 2127 L2255 2124 L2255 2133 L2258 2136 L2270 2149 L2282 2159"/>
<path d="M1739 2050 L1750 2053 L1763 2060 L1773 2063 L1779 2065 L1783 2067 L1792 2074 L1801 2079 L1811 2085 L1821 2096 L1826 2102 L1834 2107 L1842 2110 L1850 2111 L1855 2113 L1862 2116 L1870 2118 L1879 2119 L1890 2123 L1902 2130 L1906 2134 L1920 2136 L1930 2144 L1938 2151 L1945 2159 L1959 2157 L1969 2163 L1973 2169 L1981 2176 L1989 2175 L1994 2178 L2006 2179 L2016 2181 L2023 2185 L2029 2190 L2037 2193 L2048 2198 L2059 2203 L2071 2203 L2079 2205 L2084 2212 L2098 2212 L2107 2216 L2113 2219 L2125 2229 L2132 2235 L2136 2239 L2146 2241 L2155 2249 L2158 2251 L2165 2260 L2176 2268 L2182 2276 L2184 2278 L2190 2282 L2196 2294 L2208 2297 L2215 2304 L2219 2312 L2229 2323 L2234 2333 L2240 2338 L2246 2339 L2254 2344 L2268 2347 L2273 2350 L2276 2358 L2287 2362 L2300 2369 L2309 2374 L2315 2385 L2325 2389"/>
<path d="M1785 2215 L1792 2214 L1805 2213 L1815 2211 L1827 2206 L1833 2212 L1838 2221 L1842 2226 L1849 2234 L1862 2241 L1866 2253 L1873 2254 L1890 2253 L1890 2247 L1903 2241 L1908 2233 L1911 2224 L1922 2215 L1931 2218 L1940 2218 L1944 2223 L1955 2225 L1960 2226 L1968 2227 L1976 2233 L1983 2242 L1987 2251 L1989 2258 L1996 2268 L2007 2263 L2019 2255 L2021 2246 L2024 2235 L2026 2227 L2028 2222 L2030 2209"/>
<path d="M1802 2153 L1800 2161 L1799 2169 L1802 2180 L1806 2195 L1805 2204 L1800 2214 L1800 2219 L1808 2230 L1809 2239 L1809 2247 L1811 2255 L1822 2262 L1833 2264 L1838 2267 L1853 2275"/>
<path d="M1563 2248 L1572 2243 L1575 2235 L1577 2220 L1581 2210 L1586 2205 L1594 2195 L1603 2187 L1609 2183 L1617 2182 L1624 2183 L1634 2183 L1646 2186 L1657 2188 L1665 2182 L1671 2176 L1678 2178 L1687 2180 L1698 2179 L1710 2181 L1717 2180 L1720 2179 L1735 2182 L1754 2186 L1755 2182 L1757 2175 L1770 2177 L1780 2178 L1791 2174 L1797 2169 L1802 2162 L1806 2151"/>
<path d="M2497 1720 L2502 1726 L2499 1742 L2500 1752 L2501 1766 L2503 1772 L2503 1778 L2503 1784 L2503 1794 L2504 1808 L2503 1819 L2503 1826 L2509 1839 L2505 1845 L2504 1853 L2509 1866 L2508 1877 L2502 1879 L2492 1880 L2484 1879 L2473 1885 L2462 1893 L2459 1890 L2451 1891 L2439 1897 L2435 1900 L2427 1909 L2416 1917 L2397 1914 L2384 1915 L2378 1916 L2373 1934 L2370 1939 L2363 1943 L2363 1960 L2347 1951 L2335 1944 L2327 1941 L2321 1942 L2315 1938 L2306 1932 L2297 1928 L2286 1929 L2281 1927 L2272 1924 L2260 1918 L2255 1915 L2246 1915 L2234 1913 L2225 1907 L2220 1907"/>
<path d="M2508 1877 L2512 1884 L2519 1892 L2525 1899 L2531 1905 L2532 1915 L2537 1925 L2544 1932 L2550 1938 L2549 1949 L2551 1960 L2556 1967 L2564 1975 L2564 1981 L2559 1994 L2553 2006 L2552 2021"/>
<path d="M2553 2025 L2564 2025 L2569 2017 L2579 2016 L2593 2021 L2605 2025 L2613 2027 L2620 2021 L2634 2020 L2637 2031 L2642 2044 L2648 2056 L2654 2060"/>
<path d="M2849 1878 L2845 1887 L2840 1898 L2835 1909 L2837 1917 L2843 1921 L2854 1933 L2859 1944 L2862 1953 L2866 1959 L2869 1965 L2858 1975 L2853 1981 L2850 1981 L2845 1993 L2833 2002 L2829 2006 L2825 2007 L2817 2013 L2803 2018 L2790 2026 L2775 2031 L2765 2035 L2760 2030 L2752 2030"/>
<path d="M2225 2045 L2233 2037 L2238 2027 L2248 2016 L2255 2001 L2260 1992 L2259 1989 L2267 1989 L2277 1988 L2289 1981 L2304 1977 L2311 1976 L2321 1976 L2333 1974 L2348 1983 L2355 1984 L2363 1990 L2374 1995 L2384 1999 L2382 2011 L2379 2021 L2382 2031 L2387 2042 L2395 2047 L2406 2049 L2407 2051 L2416 2058 L2430 2063 L2443 2068 L2447 2079 L2443 2091 L2455 2098 L2467 2102 L2457 2113 L2449 2124 L2455 2137 L2454 2151 L2439 2153 L2429 2160 L2419 2164 L2411 2168 L2397 2169 L2388 2169 L2381 2167 L2373 2164 L2364 2166 L2349 2169 L2340 2172 L2333 2175 L2325 2179 L2312 2186 L2299 2184"/>
<path d="M2460 2114 L2472 2106 L2476 2103 L2479 2101 L2485 2092 L2499 2086 L2508 2082 L2513 2073 L2518 2067 L2522 2064 L2533 2061 L2546 2058 L2551 2050 L2560 2046 L2570 2044"/>
<path d="M2498 2170 L2503 2187 L2509 2200 L2510 2208 L2510 2217 L2516 2225 L2517 2230 L2522 2236 L2532 2243 L2536 2253"/>
<path d="M2460 2137 L2466 2141 L2475 2141 L2482 2143 L2491 2150 L2499 2153 L2508 2159 L2517 2162 L2529 2162 L2537 2163 L2547 2159 L2555 2156 L2564 2151 L2575 2144 L2582 2145 L2593 2142 L2599 2131 L2607 2121 L2614 2116 L2626 2112 L2636 2107 L2642 2101"/>
</g></svg><!--/MAP-->
</body></html>
